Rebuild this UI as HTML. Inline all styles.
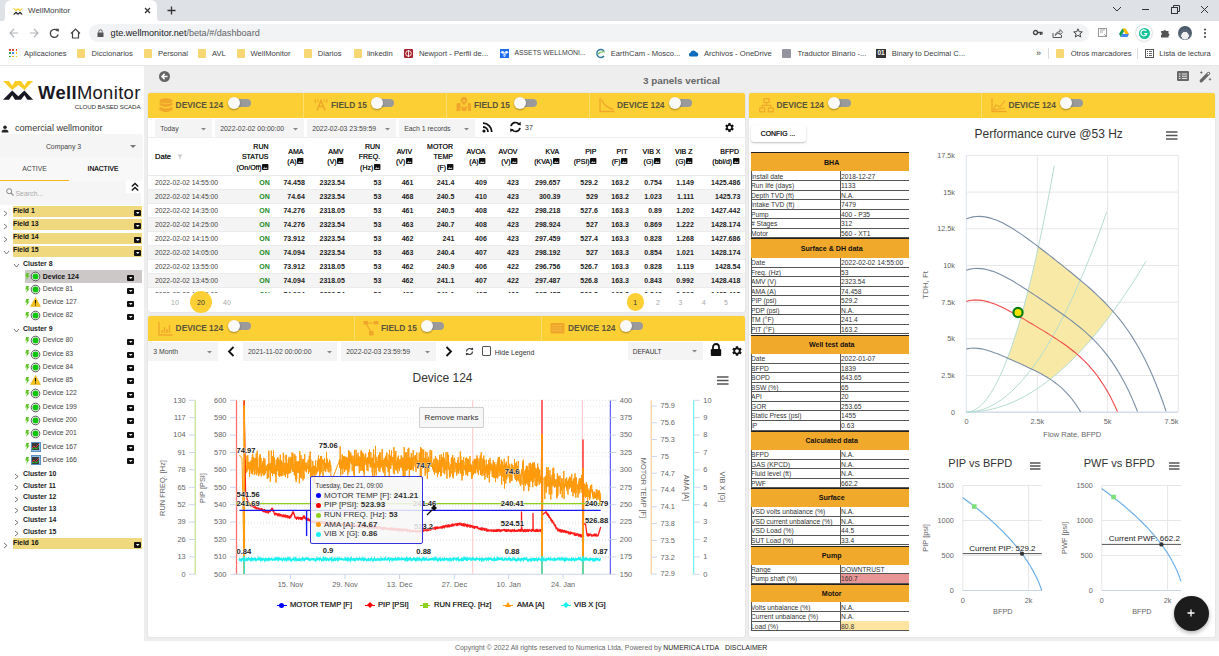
<!DOCTYPE html><html><head><meta charset="utf-8"><style>

*{box-sizing:border-box;margin:0;padding:0}
html,body{width:1219px;height:656px;overflow:hidden;background:#fff;font-family:"Liberation Sans",sans-serif;color:#333}
.a{position:absolute}
.t{position:absolute;white-space:nowrap;line-height:1}
svg{position:absolute;overflow:visible}

</style></head><body>
<div class="a" style="left:0px;top:0px;width:1219px;height:21.8px;background:#dee1e6;"></div>
<svg class="a" style="left:0;top:0" width="170" height="22"><path d="M0 22 Q5 22 5 17 L5 7 Q5 0 12 0 L150 0 Q157 0 157 7 L157 17 Q157 22 162 22 Z" fill="#fff"/></svg>
<svg class="a" style="left:13px;top:6.5px" width="10" height="9" viewBox="3 5 30.5 19"><path d="M3 5.1 L9 5.1 L12.2 9.8 L15 5.1 L21 5.1 L24.4 9.8 L27.4 5.1 L33.1 5.1 L24.4 14.1 L18.3 9 L12.2 14.1 Z" fill="#fbcd24"/><path d="M12.2 14.5 L18.3 20.3 L24.4 14.5 L33.1 23.7 L27.4 23.7 L24.4 19.2 L21 23.7 L15 23.7 L12.2 19.2 L9 23.7 L3 23.7 Z" fill="#181822"/></svg>
<div class="t" style="left:28.00px;top:6.68px;font-size:8px;color:#3c4043;font-weight:normal;">WellMonitor</div>
<svg class="a" style="left:144px;top:7.3px" width="7" height="7"><path d="M1 1 L6 6 M6 1 L1 6" stroke="#333" stroke-width="1.2"/></svg>
<svg class="a" style="left:167px;top:6.2px" width="9" height="9"><path d="M4.5 0.5 V8.5 M0.5 4.5 H8.5" stroke="#333" stroke-width="1.3"/></svg>
<svg class="a" style="left:1112px;top:5px" width="10" height="8"><path d="M1 2 L5 6 L9 2" stroke="#333" stroke-width="1" fill="none"/></svg>
<div class="a" style="left:1142px;top:9px;width:7px;height:1px;background:#333;"></div>
<svg class="a" style="left:1171px;top:5px" width="9" height="9"><rect x="0.5" y="2.5" width="6" height="6" fill="none" stroke="#333"/><path d="M2.5 2.5 V0.5 H8.5 V6.5 H6.5" fill="none" stroke="#333"/></svg>
<svg class="a" style="left:1200px;top:5px" width="9" height="9"><path d="M1 1 L8 8 M8 1 L1 8" stroke="#333" stroke-width="1"/></svg>
<div class="a" style="left:0px;top:21px;width:1219px;height:43px;background:#fff;"></div>
<svg class="a" style="left:9px;top:28px" width="10" height="10"><path d="M9 5 H1 M5 1 L1 5 L5 9" stroke="#b0b3b7" stroke-width="1.1" fill="none"/></svg>
<svg class="a" style="left:29px;top:28px" width="10" height="10"><path d="M1 5 H9 M5 1 L9 5 L5 9" stroke="#b0b3b7" stroke-width="1.1" fill="none"/></svg>
<svg class="a" style="left:49px;top:28px" width="11" height="11"><path d="M8.6 3 A4 4 0 1 0 9.2 6.5" stroke="#444" stroke-width="1.3" fill="none"/><path d="M6.5 0.8 L9.8 0.8 L9.8 4.1 Z" fill="#444"/></svg>
<svg class="a" style="left:70px;top:28px" width="11" height="11"><path d="M1 5.5 L5.5 1 L10 5.5 M2.5 4.5 V10 H8.5 V4.5" stroke="#444" stroke-width="1.2" fill="none"/></svg>
<div class="a" style="left:89px;top:24px;width:1000px;height:17.5px;background:#f1f3f4;border-radius:9px"></div>
<svg class="a" style="left:97px;top:29px" width="7" height="8"><path d="M1.8 3.5 V2.5 A1.7 1.7 0 0 1 5.2 2.5 V3.5" stroke="#555" stroke-width="1" fill="none"/><rect x="0.5" y="3.5" width="6" height="4.5" fill="#555"/></svg>
<div class="t" style="left:110.60px;top:28.54px;font-size:9.1px;color:#333;font-weight:normal;"><span style="color:#202124">gte.wellmonitor.net</span><span style="color:#5f6368">/beta/#/dashboard</span></div>
<svg class="a" style="left:1033px;top:29px" width="10" height="7"><circle cx="2.5" cy="3.5" r="2" fill="none" stroke="#444" stroke-width="1.3"/><path d="M4.5 3.5 H9.5 M7.5 3.5 V6 M9 3.5 V5.5" stroke="#444" stroke-width="1.3"/></svg>
<svg class="a" style="left:1052px;top:28px" width="11" height="10"><path d="M1 5 V9.5 H9.5 V7" stroke="#555" stroke-width="1" fill="none"/><path d="M3 7.5 Q4 3.5 8 3.5 V1.5 L10.5 4.2 L8 7 V5.2 Q5 5 3 7.5Z" fill="none" stroke="#555" stroke-width="0.9"/></svg>
<svg class="a" style="left:1073px;top:28px" width="10" height="10"><path d="M5 0.8 L6.2 3.7 L9.3 3.9 L6.9 5.9 L7.7 9 L5 7.3 L2.3 9 L3.1 5.9 L0.7 3.9 L3.8 3.7 Z" fill="none" stroke="#444" stroke-width="1"/></svg>
<svg class="a" style="left:1098px;top:28px" width="10" height="10"><rect x="0.5" y="0.5" width="8" height="8" fill="none" stroke="#999"/><path d="M2 2 H7 M2 4 H5 M6 6 L9 9 M9 6 L6 9" stroke="#999" stroke-width="0.9"/></svg>
<svg class="a" style="left:1119px;top:28px" width="10" height="9"><path d="M3.3 0.5 L6.7 0.5 L10 6 L8.3 9 Z" fill="#fbbc04"/><path d="M3.3 0.5 L0 6 L1.7 9 L5 3.3Z" fill="#0f9d58"/><path d="M1.7 9 L8.3 9 L10 6 L3.4 6Z" fill="#4285f4"/></svg>
<div class="a" style="left:1136px;top:25px;width:16px;height:16px;border-radius:50%;background:#fff;box-shadow:0 0 2px #aaa"></div>
<div class="a" style="left:1138.5px;top:27.5px;width:11px;height:11px;border-radius:50%;background:#15c39a"></div>
<svg class="a" style="left:1140px;top:29px" width="8" height="8"><path d="M6.3 2 A3 3 0 1 0 6.8 4.5 H4.2" stroke="#fff" stroke-width="1.2" fill="none"/></svg>
<svg class="a" style="left:1160px;top:28px" width="10" height="10"><path d="M1 3 H3.5 A1.3 1.3 0 0 1 6 3 H8.5 V5.5 A1.3 1.3 0 0 1 8.5 8 V9.5 H1 V7 A1.3 1.3 0 0 0 1 4.5 Z" fill="#555"/></svg>
<div class="a" style="left:1178px;top:26px;width:14px;height:14px;border-radius:50%;background:radial-gradient(circle at 50% 70%,#eee 0 30%,#5b6b7b 32%,#3e4c5a 100%)"></div>
<svg class="a" style="left:1203px;top:28px" width="4" height="11"><circle cx="2" cy="1.5" r="1.1" fill="#555"/><circle cx="2" cy="5.2" r="1.1" fill="#555"/><circle cx="2" cy="8.9" r="1.1" fill="#555"/></svg>
<div class="a" style="left:9.0px;top:49.0px;width:1.9px;height:1.9px;background:#ea4335;"></div>
<div class="a" style="left:12.3px;top:49.0px;width:1.9px;height:1.9px;background:#ea4335;"></div>
<div class="a" style="left:15.6px;top:49.0px;width:1.9px;height:1.9px;background:#ea4335;"></div>
<div class="a" style="left:9.0px;top:52.3px;width:1.9px;height:1.9px;background:#34a853;"></div>
<div class="a" style="left:12.3px;top:52.3px;width:1.9px;height:1.9px;background:#4285f4;"></div>
<div class="a" style="left:15.6px;top:52.3px;width:1.9px;height:1.9px;background:#fbbc04;"></div>
<div class="a" style="left:9.0px;top:55.6px;width:1.9px;height:1.9px;background:#34a853;"></div>
<div class="a" style="left:12.3px;top:55.6px;width:1.9px;height:1.9px;background:#fbbc04;"></div>
<div class="a" style="left:15.6px;top:55.6px;width:1.9px;height:1.9px;background:#fbbc04;"></div>
<div class="t" style="left:24.00px;top:49.58px;font-size:7.6px;color:#3c4043;font-weight:normal;">Aplicaciones</div>
<div class="a" style="left:77px;top:49px;width:8px;height:8.5px;background:#f7d774;border-radius:1px"></div>
<div class="t" style="left:91.50px;top:49.58px;font-size:7.6px;color:#3c4043;font-weight:normal;">Diccionarios</div>
<div class="a" style="left:143.8px;top:49px;width:8px;height:8.5px;background:#f7d774;border-radius:1px"></div>
<div class="t" style="left:158.00px;top:49.58px;font-size:7.6px;color:#3c4043;font-weight:normal;">Personal</div>
<div class="a" style="left:198px;top:49px;width:8px;height:8.5px;background:#f7d774;border-radius:1px"></div>
<div class="t" style="left:212.00px;top:49.58px;font-size:7.6px;color:#3c4043;font-weight:normal;">AVL</div>
<div class="a" style="left:236.6px;top:49px;width:8px;height:8.5px;background:#f7d774;border-radius:1px"></div>
<div class="t" style="left:250.60px;top:49.58px;font-size:7.6px;color:#3c4043;font-weight:normal;">WellMonitor</div>
<div class="a" style="left:304.3px;top:49px;width:8px;height:8.5px;background:#f7d774;border-radius:1px"></div>
<div class="t" style="left:317.80px;top:49.58px;font-size:7.6px;color:#3c4043;font-weight:normal;">Diarios</div>
<div class="a" style="left:353.5px;top:49px;width:8px;height:8.5px;background:#f7d774;border-radius:1px"></div>
<div class="t" style="left:367.00px;top:49.58px;font-size:7.6px;color:#3c4043;font-weight:normal;">linkedin</div>
<div class="a" style="left:403.6px;top:49px;width:9.5px;height:9px;background:#a4262c;border-radius:1px"></div>
<svg class="a" style="left:404px;top:49px" width="9" height="9"><circle cx="4.5" cy="4.5" r="2.8" fill="none" stroke="#fff" stroke-width="0.9"/><path d="M4.5 1 V8" stroke="#fff" stroke-width="0.9"/></svg>
<div class="t" style="left:418.90px;top:49.58px;font-size:7.6px;color:#3c4043;font-weight:normal;">Newport - Perfil de...</div>
<div class="a" style="left:499.6px;top:49px;width:9.5px;height:9px;background:#1a6bf0;"></div>
<svg class="a" style="left:500px;top:49px" width="9" height="9"><path d="M2.5 2 L4.5 3.3 L2.5 4.6 L0.5 3.3Z M6.5 2 L8.5 3.3 L6.5 4.6 L4.5 3.3Z M2.5 4.6 L4.5 5.9 L6.5 4.6 M2.8 6.6 L4.5 7.7 L6.2 6.6" fill="#fff" stroke="#fff" stroke-width="0.3"/></svg>
<div class="t" style="left:514.40px;top:49.94px;font-size:6.85px;color:#3c4043;font-weight:normal;">ASSETS WELLMONI...</div>
<svg class="a" style="left:595px;top:48px" width="11" height="11"><path d="M9 3 A4 4 0 1 0 9 8" stroke="#2a7a9a" stroke-width="1.4" fill="none"/><path d="M3 6 Q6 3 10 4" stroke="#6cb33f" stroke-width="1.1" fill="none"/></svg>
<div class="t" style="left:610.80px;top:49.58px;font-size:7.6px;color:#3c4043;font-weight:normal;">EarthCam - Mosco...</div>
<svg class="a" style="left:688px;top:49px" width="11" height="8"><path d="M2 7.5 A2 2 0 0 1 2.3 3.8 A3.2 3.2 0 0 1 8.2 3.3 A2.2 2.2 0 0 1 9 7.5 Z" fill="#0f6cbd"/></svg>
<div class="t" style="left:703.90px;top:49.58px;font-size:7.6px;color:#3c4043;font-weight:normal;">Archivos - OneDrive</div>
<div class="a" style="left:782px;top:49px;width:9px;height:9px;background:#667;border-radius:1px;opacity:.7"></div>
<div class="t" style="left:797.40px;top:49.58px;font-size:7.6px;color:#3c4043;font-weight:normal;">Traductor Binario -...</div>
<div class="a" style="left:876px;top:49px;width:10px;height:9px;background:#333;"></div>
<div class="t" style="left:881.00px;top:50.41px;font-size:6.5px;color:#fff;font-weight:bold;transform:translateX(-50%);">01</div>
<div class="t" style="left:891.70px;top:49.58px;font-size:7.6px;color:#3c4043;font-weight:normal;">Binary to Decimal C...</div>
<div class="t" style="left:1036.00px;top:48.89px;font-size:9px;color:#444;font-weight:normal;">»</div>
<div class="a" style="left:1048px;top:48px;width:1px;height:11px;background:#dadce0;"></div>
<div class="a" style="left:1056.4px;top:49px;width:8px;height:8.5px;background:#f7d774;border-radius:1px"></div>
<div class="t" style="left:1070.70px;top:49.58px;font-size:7.6px;color:#3c4043;font-weight:normal;">Otros marcadores</div>
<div class="a" style="left:1137px;top:48px;width:1px;height:11px;background:#dadce0;"></div>
<svg class="a" style="left:1145px;top:49px" width="9" height="9"><rect x="0.5" y="0.5" width="8" height="8" fill="none" stroke="#555"/><path d="M2 2.5 H3 M4 2.5 H7 M2 4.5 H3 M4 4.5 H7 M2 6.5 H3 M4 6.5 H7" stroke="#555" stroke-width="0.9"/></svg>
<div class="t" style="left:1159.30px;top:49.58px;font-size:7.6px;color:#3c4043;font-weight:normal;">Lista de lectura</div>
<div class="a" style="left:0px;top:65px;width:1219px;height:591px;background:#fff;"></div>
<div class="a" style="left:144px;top:65px;width:1075px;height:575.5px;background:#eeeeee;"></div>
<div class="a" style="left:0px;top:64.5px;width:1219px;height:1.3px;background:#e6e6e6;"></div>
<svg class="a" style="left:0;top:76px" width="36" height="26"><path d="M3 5.1 L9 5.1 L12.2 9.8 L15 5.1 L21 5.1 L24.4 9.8 L27.4 5.1 L33.1 5.1 L24.4 14.1 L18.3 9 L12.2 14.1 Z" fill="#fbcd24"/><path d="M12.2 14.5 L18.3 20.3 L24.4 14.5 L33.1 23.7 L27.4 23.7 L24.4 19.2 L21 23.7 L15 23.7 L12.2 19.2 L9 23.7 L3 23.7 Z" fill="#181822"/></svg>
<div class="t" style="left:38.00px;top:83.98px;font-size:18.4px;color:#181822;font-weight:normal;letter-spacing:0.35px"><b style="font-weight:bold">Well</b>Monitor</div>
<div class="t" style="left:140.50px;top:104.26px;font-size:6.2px;color:#333;font-weight:normal;transform:translateX(-100%);letter-spacing:-0.1px">CLOUD BASED SCADA</div>
<svg class="a" style="left:1px;top:125px" width="8" height="8"><circle cx="4" cy="2.2" r="1.8" fill="#222"/><path d="M0.5 7.5 Q0.5 4.6 4 4.6 Q7.5 4.6 7.5 7.5 Z" fill="#222"/></svg>
<div class="t" style="left:15.00px;top:123.54px;font-size:9.1px;color:#333;font-weight:normal;">comercial wellmonitor</div>
<div class="a" style="left:0px;top:134px;width:143px;height:24px;background:#f5f5f5;border-radius:3px 3px 0 0"></div>
<div class="t" style="left:63.50px;top:143.92px;font-size:6.9px;color:#444;font-weight:normal;transform:translateX(-50%);">Company 3</div>
<svg class="a" style="left:130px;top:145px" width="6" height="3"><path d="M0 0 H6 L3 3Z" fill="#777"/></svg>
<div class="a" style="left:0px;top:158px;width:143px;height:23px;background:#f8f8f8;"></div>
<div class="t" style="left:34.50px;top:165.67px;font-size:6.8px;color:#444;font-weight:normal;transform:translateX(-50%);">ACTIVE</div>
<div class="t" style="left:103.00px;top:165.72px;font-size:6.7px;color:#222;font-weight:normal;transform:translateX(-50%);text-shadow:0 0 0.3px #333">INACTIVE</div>
<div class="a" style="left:0px;top:179.5px;width:69px;height:1.6px;background:#f6b91a;"></div>
<div class="a" style="left:0px;top:181px;width:141px;height:24px;background:#f5f5f5;"></div>
<svg class="a" style="left:6px;top:188px" width="8" height="8"><circle cx="3.2" cy="3.2" r="2.5" fill="none" stroke="#888" stroke-width="1"/><path d="M5 5 L7.6 7.6" stroke="#888" stroke-width="1.1"/></svg>
<div class="t" style="left:15.50px;top:191.12px;font-size:6.9px;color:#aaa;font-weight:normal;">Search...</div>
<div class="a" style="left:126px;top:181px;width:17px;height:12px;background:#fff;"></div>
<svg class="a" style="left:131px;top:182px" width="8" height="10"><path d="M0.8 4.5 L4 1.5 L7.2 4.5 M0.8 8.5 L4 5.5 L7.2 8.5" stroke="#111" stroke-width="1.4" fill="none"/></svg>
<div class="a" style="left:13px;top:206.0px;width:128.5px;height:11px;background:#f0d87e;"></div>
<div class="t" style="left:13.00px;top:207.62px;font-size:6.9px;color:#111;font-weight:bold;">Field 1</div>
<div class="a" style="left:134px;top:210.0px;width:6.5px;height:6px;background:#111;border-radius:1px"></div>
<svg class="a" style="left:135.5px;top:212.0px" width="4" height="3"><path d="M0 0 H3.5 L1.75 2Z" fill="#fff"/></svg>
<svg class="a" style="left:3px;top:209.5px" width="5" height="7"><path d="M1 1 L4 3.5 L1 6" stroke="#666" stroke-width="0.9" fill="none"/></svg>
<div class="a" style="left:13px;top:219.3px;width:128.5px;height:11px;background:#f0d87e;"></div>
<div class="t" style="left:13.00px;top:220.92px;font-size:6.9px;color:#111;font-weight:bold;">Field 13</div>
<div class="a" style="left:134px;top:223.3px;width:6.5px;height:6px;background:#111;border-radius:1px"></div>
<svg class="a" style="left:135.5px;top:225.3px" width="4" height="3"><path d="M0 0 H3.5 L1.75 2Z" fill="#fff"/></svg>
<svg class="a" style="left:3px;top:222.8px" width="5" height="7"><path d="M1 1 L4 3.5 L1 6" stroke="#666" stroke-width="0.9" fill="none"/></svg>
<div class="a" style="left:13px;top:232.5px;width:128.5px;height:11px;background:#f0d87e;"></div>
<div class="t" style="left:13.00px;top:234.12px;font-size:6.9px;color:#111;font-weight:bold;">Field 14</div>
<div class="a" style="left:134px;top:236.5px;width:6.5px;height:6px;background:#111;border-radius:1px"></div>
<svg class="a" style="left:135.5px;top:238.5px" width="4" height="3"><path d="M0 0 H3.5 L1.75 2Z" fill="#fff"/></svg>
<svg class="a" style="left:3px;top:236px" width="5" height="7"><path d="M1 1 L4 3.5 L1 6" stroke="#666" stroke-width="0.9" fill="none"/></svg>
<div class="a" style="left:13px;top:245.8px;width:128.5px;height:11px;background:#f0d87e;"></div>
<div class="t" style="left:13.00px;top:247.42px;font-size:6.9px;color:#111;font-weight:bold;">Field 15</div>
<div class="a" style="left:134px;top:249.8px;width:6.5px;height:6px;background:#111;border-radius:1px"></div>
<svg class="a" style="left:135.5px;top:251.8px" width="4" height="3"><path d="M0 0 H3.5 L1.75 2Z" fill="#fff"/></svg>
<svg class="a" style="left:2.5px;top:250.3px" width="7" height="5"><path d="M1 1 L3.5 4 L6 1" stroke="#666" stroke-width="0.9" fill="none"/></svg>
<div class="t" style="left:23.00px;top:260.92px;font-size:6.9px;color:#222;font-weight:bold;">Cluster 8</div>
<svg class="a" style="left:13px;top:263.3px" width="7" height="5"><path d="M1 1 L3.5 4 L6 1" stroke="#666" stroke-width="0.9" fill="none"/></svg>
<div class="a" style="left:25px;top:270.0px;width:116.5px;height:13px;background:#cdc8c8;"></div>
<svg class="a" style="left:25px;top:273.0px" width="5" height="7"><path d="M1.2 0 H4.2 L3 2.4 H4.6 L1.2 7 L1.9 3.6 H0.3 Z" fill="#62c42a"/></svg>
<svg class="a" style="left:30px;top:271.2px" width="11" height="11"><circle cx="5.5" cy="5.5" r="4.3" fill="#fff" stroke="#444" stroke-width="0.9"/><circle cx="5.5" cy="5.5" r="3" fill="#0fc40f"/></svg>
<div class="t" style="left:42.70px;top:273.17px;font-size:7.0px;color:#111;font-weight:bold;">Device 124</div>
<div class="a" style="left:127px;top:274.5px;width:6.5px;height:6px;background:#111;border-radius:1px"></div>
<svg class="a" style="left:128.5px;top:276.5px" width="4" height="3"><path d="M0 0 H3.5 L1.75 2Z" fill="#fff"/></svg>
<svg class="a" style="left:25px;top:286.0px" width="5" height="7"><path d="M1.2 0 H4.2 L3 2.4 H4.6 L1.2 7 L1.9 3.6 H0.3 Z" fill="#62c42a"/></svg>
<svg class="a" style="left:30px;top:284.2px" width="11" height="11"><circle cx="5.5" cy="5.5" r="4.3" fill="#fff" stroke="#444" stroke-width="0.9"/><circle cx="5.5" cy="5.5" r="3" fill="#0fc40f"/></svg>
<div class="t" style="left:42.70px;top:286.24px;font-size:6.85px;color:#444;font-weight:normal;">Device 81</div>
<div class="a" style="left:127px;top:287.5px;width:6.5px;height:6px;background:#111;border-radius:1px"></div>
<svg class="a" style="left:128.5px;top:289.5px" width="4" height="3"><path d="M0 0 H3.5 L1.75 2Z" fill="#fff"/></svg>
<svg class="a" style="left:25px;top:299.0px" width="5" height="7"><path d="M1.2 0 H4.2 L3 2.4 H4.6 L1.2 7 L1.9 3.6 H0.3 Z" fill="#62c42a"/></svg>
<svg class="a" style="left:30px;top:297.0px" width="11" height="10"><path d="M5.5 0.5 L10.5 9.5 H0.5 Z" fill="#f7c21b" stroke="#e0a800" stroke-width="0.5"/><path d="M5.5 3 V6.5 M5.5 7.5 V8.5" stroke="#111" stroke-width="1.1"/></svg>
<div class="t" style="left:42.70px;top:299.24px;font-size:6.85px;color:#444;font-weight:normal;">Device 127</div>
<div class="a" style="left:127px;top:300.5px;width:6.5px;height:6px;background:#111;border-radius:1px"></div>
<svg class="a" style="left:128.5px;top:302.5px" width="4" height="3"><path d="M0 0 H3.5 L1.75 2Z" fill="#fff"/></svg>
<svg class="a" style="left:25px;top:312.2px" width="5" height="7"><path d="M1.2 0 H4.2 L3 2.4 H4.6 L1.2 7 L1.9 3.6 H0.3 Z" fill="#62c42a"/></svg>
<svg class="a" style="left:30px;top:310.4px" width="11" height="11"><circle cx="5.5" cy="5.5" r="4.3" fill="#fff" stroke="#444" stroke-width="0.9"/><circle cx="5.5" cy="5.5" r="3" fill="#0fc40f"/></svg>
<div class="t" style="left:42.70px;top:312.44px;font-size:6.85px;color:#444;font-weight:normal;">Device 82</div>
<div class="a" style="left:127px;top:313.7px;width:6.5px;height:6px;background:#111;border-radius:1px"></div>
<svg class="a" style="left:128.5px;top:315.7px" width="4" height="3"><path d="M0 0 H3.5 L1.75 2Z" fill="#fff"/></svg>
<div class="t" style="left:23.00px;top:326.02px;font-size:6.9px;color:#222;font-weight:bold;">Cluster 9</div>
<svg class="a" style="left:13px;top:328.4px" width="7" height="5"><path d="M1 1 L3.5 4 L6 1" stroke="#666" stroke-width="0.9" fill="none"/></svg>
<svg class="a" style="left:25px;top:337.0px" width="5" height="7"><path d="M1.2 0 H4.2 L3 2.4 H4.6 L1.2 7 L1.9 3.6 H0.3 Z" fill="#62c42a"/></svg>
<svg class="a" style="left:30px;top:335.2px" width="11" height="11"><circle cx="5.5" cy="5.5" r="4.3" fill="#fff" stroke="#444" stroke-width="0.9"/><circle cx="5.5" cy="5.5" r="3" fill="#0fc40f"/></svg>
<div class="t" style="left:42.70px;top:337.24px;font-size:6.85px;color:#444;font-weight:normal;">Device 80</div>
<div class="a" style="left:127px;top:338.5px;width:6.5px;height:6px;background:#111;border-radius:1px"></div>
<svg class="a" style="left:128.5px;top:340.5px" width="4" height="3"><path d="M0 0 H3.5 L1.75 2Z" fill="#fff"/></svg>
<svg class="a" style="left:25px;top:350.3px" width="5" height="7"><path d="M1.2 0 H4.2 L3 2.4 H4.6 L1.2 7 L1.9 3.6 H0.3 Z" fill="#62c42a"/></svg>
<svg class="a" style="left:30px;top:348.5px" width="11" height="11"><circle cx="5.5" cy="5.5" r="4.3" fill="#fff" stroke="#444" stroke-width="0.9"/><circle cx="5.5" cy="5.5" r="3" fill="#0fc40f"/></svg>
<div class="t" style="left:42.70px;top:350.54px;font-size:6.85px;color:#444;font-weight:normal;">Device 83</div>
<div class="a" style="left:127px;top:351.8px;width:6.5px;height:6px;background:#111;border-radius:1px"></div>
<svg class="a" style="left:128.5px;top:353.8px" width="4" height="3"><path d="M0 0 H3.5 L1.75 2Z" fill="#fff"/></svg>
<svg class="a" style="left:25px;top:363.6px" width="5" height="7"><path d="M1.2 0 H4.2 L3 2.4 H4.6 L1.2 7 L1.9 3.6 H0.3 Z" fill="#62c42a"/></svg>
<svg class="a" style="left:30px;top:361.8px" width="11" height="11"><circle cx="5.5" cy="5.5" r="4.3" fill="#fff" stroke="#444" stroke-width="0.9"/><circle cx="5.5" cy="5.5" r="3" fill="#0fc40f"/></svg>
<div class="t" style="left:42.70px;top:363.84px;font-size:6.85px;color:#444;font-weight:normal;">Device 84</div>
<div class="a" style="left:127px;top:365.1px;width:6.5px;height:6px;background:#111;border-radius:1px"></div>
<svg class="a" style="left:128.5px;top:367.1px" width="4" height="3"><path d="M0 0 H3.5 L1.75 2Z" fill="#fff"/></svg>
<svg class="a" style="left:25px;top:376.9px" width="5" height="7"><path d="M1.2 0 H4.2 L3 2.4 H4.6 L1.2 7 L1.9 3.6 H0.3 Z" fill="#62c42a"/></svg>
<svg class="a" style="left:30px;top:374.9px" width="11" height="10"><path d="M5.5 0.5 L10.5 9.5 H0.5 Z" fill="#f7c21b" stroke="#e0a800" stroke-width="0.5"/><path d="M5.5 3 V6.5 M5.5 7.5 V8.5" stroke="#111" stroke-width="1.1"/></svg>
<div class="t" style="left:42.70px;top:377.14px;font-size:6.85px;color:#444;font-weight:normal;">Device 85</div>
<div class="a" style="left:127px;top:378.4px;width:6.5px;height:6px;background:#111;border-radius:1px"></div>
<svg class="a" style="left:128.5px;top:380.4px" width="4" height="3"><path d="M0 0 H3.5 L1.75 2Z" fill="#fff"/></svg>
<svg class="a" style="left:25px;top:390.2px" width="5" height="7"><path d="M1.2 0 H4.2 L3 2.4 H4.6 L1.2 7 L1.9 3.6 H0.3 Z" fill="#62c42a"/></svg>
<svg class="a" style="left:30px;top:388.4px" width="11" height="11"><circle cx="5.5" cy="5.5" r="4.3" fill="#fff" stroke="#444" stroke-width="0.9"/><circle cx="5.5" cy="5.5" r="3" fill="#0fc40f"/></svg>
<div class="t" style="left:42.70px;top:390.44px;font-size:6.85px;color:#444;font-weight:normal;">Device 122</div>
<div class="a" style="left:127px;top:391.7px;width:6.5px;height:6px;background:#111;border-radius:1px"></div>
<svg class="a" style="left:128.5px;top:393.7px" width="4" height="3"><path d="M0 0 H3.5 L1.75 2Z" fill="#fff"/></svg>
<svg class="a" style="left:25px;top:403.5px" width="5" height="7"><path d="M1.2 0 H4.2 L3 2.4 H4.6 L1.2 7 L1.9 3.6 H0.3 Z" fill="#62c42a"/></svg>
<svg class="a" style="left:30px;top:401.7px" width="11" height="11"><circle cx="5.5" cy="5.5" r="4.3" fill="#fff" stroke="#444" stroke-width="0.9"/><circle cx="5.5" cy="5.5" r="3" fill="#0fc40f"/></svg>
<div class="t" style="left:42.70px;top:403.74px;font-size:6.85px;color:#444;font-weight:normal;">Device 199</div>
<div class="a" style="left:127px;top:405.0px;width:6.5px;height:6px;background:#111;border-radius:1px"></div>
<svg class="a" style="left:128.5px;top:407.0px" width="4" height="3"><path d="M0 0 H3.5 L1.75 2Z" fill="#fff"/></svg>
<svg class="a" style="left:25px;top:416.8px" width="5" height="7"><path d="M1.2 0 H4.2 L3 2.4 H4.6 L1.2 7 L1.9 3.6 H0.3 Z" fill="#62c42a"/></svg>
<svg class="a" style="left:30px;top:415.0px" width="11" height="11"><circle cx="5.5" cy="5.5" r="4.3" fill="#fff" stroke="#444" stroke-width="0.9"/><circle cx="5.5" cy="5.5" r="3" fill="#0fc40f"/></svg>
<div class="t" style="left:42.70px;top:417.04px;font-size:6.85px;color:#444;font-weight:normal;">Device 200</div>
<div class="a" style="left:127px;top:418.3px;width:6.5px;height:6px;background:#111;border-radius:1px"></div>
<svg class="a" style="left:128.5px;top:420.3px" width="4" height="3"><path d="M0 0 H3.5 L1.75 2Z" fill="#fff"/></svg>
<svg class="a" style="left:25px;top:430.1px" width="5" height="7"><path d="M1.2 0 H4.2 L3 2.4 H4.6 L1.2 7 L1.9 3.6 H0.3 Z" fill="#62c42a"/></svg>
<svg class="a" style="left:30px;top:428.3px" width="11" height="11"><circle cx="5.5" cy="5.5" r="4.3" fill="#fff" stroke="#444" stroke-width="0.9"/><circle cx="5.5" cy="5.5" r="3" fill="#0fc40f"/></svg>
<div class="t" style="left:42.70px;top:430.34px;font-size:6.85px;color:#444;font-weight:normal;">Device 201</div>
<div class="a" style="left:127px;top:431.6px;width:6.5px;height:6px;background:#111;border-radius:1px"></div>
<svg class="a" style="left:128.5px;top:433.6px" width="4" height="3"><path d="M0 0 H3.5 L1.75 2Z" fill="#fff"/></svg>
<svg class="a" style="left:25px;top:443.4px" width="5" height="7"><path d="M1.2 0 H4.2 L3 2.4 H4.6 L1.2 7 L1.9 3.6 H0.3 Z" fill="#62c42a"/></svg>
<div class="a" style="left:30.5px;top:441.9px;width:10px;height:10px;background:#8fbfe6;border:1px solid #5a90c0"></div>
<div class="a" style="left:32px;top:443.4px;width:7px;height:7px;background:#3a3a3a"></div>
<svg class="a" style="left:32px;top:443.4px" width="7" height="7"><path d="M0 5 L2 3 L3.5 4.5 L7 1" stroke="#e33" stroke-width="0.9" fill="none"/><path d="M0 6 L2.5 5 L4 6 L7 4" stroke="#2c2" stroke-width="0.9" fill="none"/></svg>
<div class="t" style="left:42.70px;top:443.64px;font-size:6.85px;color:#444;font-weight:normal;">Device 167</div>
<div class="a" style="left:127px;top:444.9px;width:6.5px;height:6px;background:#111;border-radius:1px"></div>
<svg class="a" style="left:128.5px;top:446.9px" width="4" height="3"><path d="M0 0 H3.5 L1.75 2Z" fill="#fff"/></svg>
<svg class="a" style="left:25px;top:456.7px" width="5" height="7"><path d="M1.2 0 H4.2 L3 2.4 H4.6 L1.2 7 L1.9 3.6 H0.3 Z" fill="#62c42a"/></svg>
<div class="a" style="left:30.5px;top:455.2px;width:10px;height:10px;background:#8fbfe6;border:1px solid #5a90c0"></div>
<div class="a" style="left:32px;top:456.7px;width:7px;height:7px;background:#3a3a3a"></div>
<svg class="a" style="left:32px;top:456.7px" width="7" height="7"><path d="M0 5 L2 3 L3.5 4.5 L7 1" stroke="#e33" stroke-width="0.9" fill="none"/><path d="M0 6 L2.5 5 L4 6 L7 4" stroke="#2c2" stroke-width="0.9" fill="none"/></svg>
<div class="t" style="left:42.70px;top:456.94px;font-size:6.85px;color:#444;font-weight:normal;">Device 166</div>
<div class="a" style="left:127px;top:458.2px;width:6.5px;height:6px;background:#111;border-radius:1px"></div>
<svg class="a" style="left:128.5px;top:460.2px" width="4" height="3"><path d="M0 0 H3.5 L1.75 2Z" fill="#fff"/></svg>
<div class="t" style="left:23.00px;top:471.42px;font-size:6.9px;color:#222;font-weight:bold;">Cluster 10</div>
<svg class="a" style="left:14px;top:472.8px" width="5" height="7"><path d="M1 1 L4 3.5 L1 6" stroke="#666" stroke-width="0.9" fill="none"/></svg>
<div class="t" style="left:23.00px;top:482.87px;font-size:6.9px;color:#222;font-weight:bold;">Cluster 11</div>
<svg class="a" style="left:14px;top:484.25px" width="5" height="7"><path d="M1 1 L4 3.5 L1 6" stroke="#666" stroke-width="0.9" fill="none"/></svg>
<div class="t" style="left:23.00px;top:494.32px;font-size:6.9px;color:#222;font-weight:bold;">Cluster 12</div>
<svg class="a" style="left:14px;top:495.7px" width="5" height="7"><path d="M1 1 L4 3.5 L1 6" stroke="#666" stroke-width="0.9" fill="none"/></svg>
<div class="t" style="left:23.00px;top:505.77px;font-size:6.9px;color:#222;font-weight:bold;">Cluster 13</div>
<svg class="a" style="left:14px;top:507.15px" width="5" height="7"><path d="M1 1 L4 3.5 L1 6" stroke="#666" stroke-width="0.9" fill="none"/></svg>
<div class="t" style="left:23.00px;top:517.22px;font-size:6.9px;color:#222;font-weight:bold;">Cluster 14</div>
<svg class="a" style="left:14px;top:518.6px" width="5" height="7"><path d="M1 1 L4 3.5 L1 6" stroke="#666" stroke-width="0.9" fill="none"/></svg>
<div class="t" style="left:23.00px;top:528.67px;font-size:6.9px;color:#222;font-weight:bold;">Cluster 15</div>
<svg class="a" style="left:14px;top:530.05px" width="5" height="7"><path d="M1 1 L4 3.5 L1 6" stroke="#666" stroke-width="0.9" fill="none"/></svg>
<div class="a" style="left:13px;top:538px;width:128.5px;height:11px;background:#f0d87e;"></div>
<div class="t" style="left:13.00px;top:539.62px;font-size:6.9px;color:#111;font-weight:bold;">Field 16</div>
<div class="a" style="left:134px;top:542px;width:6.5px;height:6px;background:#111;border-radius:1px"></div>
<svg class="a" style="left:135.5px;top:544px" width="4" height="3"><path d="M0 0 H3.5 L1.75 2Z" fill="#fff"/></svg>
<svg class="a" style="left:3px;top:542px" width="5" height="7"><path d="M1 1 L4 3.5 L1 6" stroke="#666" stroke-width="0.9" fill="none"/></svg>
<div class="a" style="left:158.5px;top:70.5px;width:11px;height:11px;border-radius:50%;background:#666"></div>
<svg class="a" style="left:158.5px;top:70.5px" width="11" height="11"><path d="M8.5 5.5 H3 M5.6 2.9 L3 5.5 L5.6 8.1" stroke="#fff" stroke-width="1.5" fill="none"/></svg>
<div class="t" style="left:681.50px;top:75.65px;font-size:9.9px;color:#666;font-weight:bold;transform:translateX(-50%);">3 panels vertical</div>
<svg class="a" style="left:1177px;top:71px" width="12" height="10"><rect x="0" y="0" width="12" height="10" rx="1.3" fill="#666"/><path d="M1.8 3 H3.6 M4.8 3 H10.2 M1.8 5.2 H3.6 M4.8 5.2 H10.2 M1.8 7.4 H3.6 M4.8 7.4 H10.2" stroke="#eee" stroke-width="1"/></svg>
<svg class="a" style="left:1199px;top:70px" width="13" height="13"><path d="M2.2 10.8 L9.6 3.4" stroke="#666" stroke-width="3.2" stroke-linecap="round"/><path d="M8.6 4.4 L10 3" stroke="#fff" stroke-width="1.1"/><path d="M2.3 0.8 L2.8 2 L4 2.5 L2.8 3 L2.3 4.2 L1.8 3 L0.6 2.5 L1.8 2Z M11 7.6 L11.5 8.8 L12.7 9.3 L11.5 9.8 L11 11 L10.5 9.8 L9.3 9.3 L10.5 8.8Z" fill="#666"/></svg>
<div class="a" style="left:148px;top:93px;width:597px;height:219px;background:#fff;box-shadow:0 0 1.5px rgba(0,0,40,.15);border-radius:2px"></div>
<div class="a" style="left:148px;top:93px;width:597px;height:25px;background:#fcd035;border-radius:2px 2px 0 0"></div>
<div class="a" style="left:302.8px;top:93px;width:1px;height:25px;background:rgba(255,255,255,.28);"></div>
<div class="a" style="left:445.6px;top:93px;width:1px;height:25px;background:rgba(255,255,255,.28);"></div>
<div class="a" style="left:589px;top:93px;width:1px;height:25px;background:rgba(255,255,255,.28);"></div>
<svg class="a" style="left:159px;top:98px" width="14" height="15"><ellipse cx="7" cy="2.8" rx="6.5" ry="2.6" fill="#f0a62b"/><path d="M0.5 4.3 Q7 8.2 13.5 4.3 V7 Q7 10.9 0.5 7Z" fill="#f0a62b"/><path d="M0.5 8.6 Q7 12.5 13.5 8.6 V12 Q7 16 0.5 12Z" fill="#f0a62b"/></svg>
<div class="t" style="left:175.60px;top:101.28px;font-size:8.4px;color:#5a5439;font-weight:bold;letter-spacing:0px">DEVICE 124</div>
<div class="a" style="left:233.5px;top:98.7px;width:17px;height:8.6px;border-radius:4.3px;background:#9a9a9a"></div>
<div class="a" style="left:227.5px;top:97px;width:12px;height:12px;border-radius:50%;background:#fafafa;box-shadow:0 1px 2px rgba(0,0,0,.35)"></div>
<svg class="a" style="left:313px;top:97px" width="16" height="16"><path d="M4 13.5 L8 3.5 L12 13.5 M5.6 9.5 H10.4" stroke="#f0a62b" stroke-width="1.5" fill="none"/><path d="M2.5 2 Q1.3 4 2.5 6 M13.5 2 Q14.7 4 13.5 6 M5 2.6 Q4.4 3.6 5 4.6 M11 2.6 Q11.6 3.6 11 4.6" stroke="#f0a62b" stroke-width="1.1" fill="none"/></svg>
<div class="t" style="left:331.00px;top:101.28px;font-size:8.4px;color:#5a5439;font-weight:bold;letter-spacing:0px">FIELD 15</div>
<div class="a" style="left:377px;top:98.7px;width:17px;height:8.6px;border-radius:4.3px;background:#9a9a9a"></div>
<div class="a" style="left:371px;top:97px;width:12px;height:12px;border-radius:50%;background:#fafafa;box-shadow:0 1px 2px rgba(0,0,0,.35)"></div>
<svg class="a" style="left:456px;top:94px" width="16" height="20"><path d="M0.5 9.5 L4.6 8.7 V16.6 L0.5 17.4Z M11.8 8.7 L15 9.4 V17.4 L11.8 16.6Z M5.6 11.3 L8 13.5 L10.6 11.3 V16.6 L8 17.3 L5.6 16.6Z" fill="#f0a62b"/><path d="M8 11.6 L5.4 8.2 A3.3 3.3 0 1 1 10.6 8.2Z" fill="#f0a62b"/><circle cx="8" cy="7" r="1.1" fill="#fcd035"/></svg>
<div class="t" style="left:474.00px;top:101.28px;font-size:8.4px;color:#5a5439;font-weight:bold;letter-spacing:0px">FIELD 15</div>
<div class="a" style="left:519.5px;top:98.7px;width:17px;height:8.6px;border-radius:4.3px;background:#9a9a9a"></div>
<div class="a" style="left:513.5px;top:97px;width:12px;height:12px;border-radius:50%;background:#fafafa;box-shadow:0 1px 2px rgba(0,0,0,.35)"></div>
<svg class="a" style="left:599px;top:97px" width="16" height="16"><path d="M1 1 V14.5 H15.5" stroke="#f0a62b" stroke-width="1.3" fill="none"/><path d="M2.5 2.5 Q5 10 14.5 12.5" stroke="#f0a62b" stroke-width="1.3" fill="none"/></svg>
<div class="t" style="left:617.00px;top:101.28px;font-size:8.4px;color:#5a5439;font-weight:bold;letter-spacing:0px">DEVICE 124</div>
<div class="a" style="left:674.5px;top:98.7px;width:17px;height:8.6px;border-radius:4.3px;background:#9a9a9a"></div>
<div class="a" style="left:668.5px;top:97px;width:12px;height:12px;border-radius:50%;background:#fafafa;box-shadow:0 1px 2px rgba(0,0,0,.35)"></div>
<div class="a" style="left:155px;top:119px;width:57px;height:18.5px;background:#f4f4f4;"></div>
<div class="t" style="left:160.20px;top:125.67px;font-size:6.9px;color:#444;font-weight:normal;">Today</div>
<svg class="a" style="left:201px;top:127.55px" width="5" height="3"><path d="M0 0 H5 L2.5 2.5Z" fill="#888"/></svg>
<div class="a" style="left:215px;top:119px;width:89px;height:18.5px;background:#f4f4f4;"></div>
<div class="t" style="left:220.20px;top:125.67px;font-size:6.9px;color:#444;font-weight:normal;">2022-02-02 00:00:00</div>
<svg class="a" style="left:293px;top:127.55px" width="5" height="3"><path d="M0 0 H5 L2.5 2.5Z" fill="#888"/></svg>
<div class="a" style="left:307px;top:119px;width:89px;height:18.5px;background:#f4f4f4;"></div>
<div class="t" style="left:312.20px;top:125.67px;font-size:6.9px;color:#444;font-weight:normal;">2022-02-03 23:59:59</div>
<svg class="a" style="left:385px;top:127.55px" width="5" height="3"><path d="M0 0 H5 L2.5 2.5Z" fill="#888"/></svg>
<div class="a" style="left:399px;top:119px;width:76px;height:18.5px;background:#f4f4f4;"></div>
<div class="t" style="left:404.20px;top:125.67px;font-size:6.9px;color:#444;font-weight:normal;">Each 1 records</div>
<svg class="a" style="left:464px;top:127.55px" width="5" height="3"><path d="M0 0 H5 L2.5 2.5Z" fill="#888"/></svg>
<svg class="a" style="left:482px;top:122px" width="11" height="11"><circle cx="2" cy="9" r="1.6" fill="#111"/><path d="M1 5 A5 5 0 0 1 6 10 M1 1.2 A8.8 8.8 0 0 1 9.8 10" stroke="#111" stroke-width="1.8" fill="none"/></svg>
<svg class="a" style="left:509px;top:121px" width="13" height="12"><path d="M2 5.2 A4.5 4.5 0 0 1 10.2 3.6 M11 6.8 A4.5 4.5 0 0 1 2.8 8.4" stroke="#111" stroke-width="1.7" fill="none"/><path d="M8.3 3.6 L11.8 4.6 L11.6 0.8Z M4.7 8.4 L1.2 7.4 L1.4 11.2Z" fill="#111"/></svg>
<div class="t" style="left:525.00px;top:124.17px;font-size:7px;color:#333;font-weight:normal;">37</div>
<svg class="a" style="left:724px;top:121.5px" width="11" height="11" viewBox="0 0 24 24"><path fill="#111" d="M19.14 12.94c.04-.3.06-.61.06-.94 0-.32-.02-.64-.07-.94l2.03-1.58a.49.49 0 0 0 .12-.61l-1.92-3.32a.488.488 0 0 0-.59-.22l-2.39.96c-.5-.38-1.03-.7-1.62-.94l-.36-2.54a.484.484 0 0 0-.48-.41h-3.84c-.24 0-.43.17-.47.41l-.36 2.54c-.59.24-1.13.57-1.62.94l-2.39-.96c-.22-.08-.47 0-.59.22L2.74 8.87c-.12.21-.08.47.12.61l2.03 1.58c-.05.3-.09.63-.09.94s.02.64.07.94l-2.03 1.58a.49.49 0 0 0-.12.61l1.92 3.32c.12.22.37.29.59.22l2.39-.96c.5.38 1.03.7 1.62.94l.36 2.54c.05.24.24.41.48.41h3.84c.24 0 .44-.17.47-.41l.36-2.54c.59-.24 1.13-.56 1.62-.94l2.39.96c.22.08.47 0 .59-.22l1.92-3.32c.12-.22.07-.47-.12-.61l-2.01-1.58zM12 15.6c-1.98 0-3.6-1.62-3.6-3.6s1.62-3.6 3.6-3.6 3.6 1.62 3.6 3.6-1.62 3.6-3.6 3.6z"/></svg>
<div class="a" style="left:148px;top:137px;width:597px;height:1px;background:#eee;"></div>
<div class="t" style="left:155.00px;top:153.28px;font-size:7.6px;color:#222;font-weight:normal;text-shadow:0 0 0.4px #222">Date</div>
<svg class="a" style="left:177px;top:153.5px" width="6" height="6"><path d="M0.3 0.5 H5.7 L3.6 3 V5.5 L2.4 4.8 V3Z" fill="#ccc"/></svg>
<div class="t" style="left:268.50px;top:143.17px;font-size:7.0px;color:#222;font-weight:normal;transform:translateX(-100%);text-shadow:0 0 0.3px #222">RUN</div>
<div class="t" style="left:268.50px;top:153.37px;font-size:7.0px;color:#222;font-weight:normal;transform:translateX(-100%);text-shadow:0 0 0.3px #222">STATUS</div>
<div class="t" style="left:261.70px;top:163.57px;font-size:7.0px;color:#222;font-weight:normal;transform:translateX(-100%);text-shadow:0 0 0.3px #222">(On/Off)</div>
<svg class="a" style="left:262.4px;top:163.6px" width="6.4" height="6"><rect x="0" y="0" width="6.4" height="6" rx="0.8" fill="#111"/><path d="M1 4.8 L2.4 3.2 L3.4 4.2 L4.4 3.4 L5.6 4.8Z" fill="#fff"/></svg>
<div class="t" style="left:303.50px;top:148.37px;font-size:7.0px;color:#222;font-weight:normal;transform:translateX(-100%);text-shadow:0 0 0.3px #222">AMA</div>
<div class="t" style="left:296.70px;top:158.37px;font-size:7.0px;color:#222;font-weight:normal;transform:translateX(-100%);text-shadow:0 0 0.3px #222">(A)</div>
<svg class="a" style="left:297.4px;top:158.4px" width="6.4" height="6"><rect x="0" y="0" width="6.4" height="6" rx="0.8" fill="#111"/><path d="M1 4.8 L2.4 3.2 L3.4 4.2 L4.4 3.4 L5.6 4.8Z" fill="#fff"/></svg>
<div class="t" style="left:343.50px;top:148.37px;font-size:7.0px;color:#222;font-weight:normal;transform:translateX(-100%);text-shadow:0 0 0.3px #222">AMV</div>
<div class="t" style="left:336.70px;top:158.37px;font-size:7.0px;color:#222;font-weight:normal;transform:translateX(-100%);text-shadow:0 0 0.3px #222">(V)</div>
<svg class="a" style="left:337.4px;top:158.4px" width="6.4" height="6"><rect x="0" y="0" width="6.4" height="6" rx="0.8" fill="#111"/><path d="M1 4.8 L2.4 3.2 L3.4 4.2 L4.4 3.4 L5.6 4.8Z" fill="#fff"/></svg>
<div class="t" style="left:380.10px;top:143.17px;font-size:7.0px;color:#222;font-weight:normal;transform:translateX(-100%);text-shadow:0 0 0.3px #222">RUN</div>
<div class="t" style="left:380.10px;top:153.37px;font-size:7.0px;color:#222;font-weight:normal;transform:translateX(-100%);text-shadow:0 0 0.3px #222">FREQ.</div>
<div class="t" style="left:373.30px;top:163.57px;font-size:7.0px;color:#222;font-weight:normal;transform:translateX(-100%);text-shadow:0 0 0.3px #222">(Hz)</div>
<svg class="a" style="left:374.0px;top:163.6px" width="6.4" height="6"><rect x="0" y="0" width="6.4" height="6" rx="0.8" fill="#111"/><path d="M1 4.8 L2.4 3.2 L3.4 4.2 L4.4 3.4 L5.6 4.8Z" fill="#fff"/></svg>
<div class="t" style="left:412.10px;top:148.37px;font-size:7.0px;color:#222;font-weight:normal;transform:translateX(-100%);text-shadow:0 0 0.3px #222">AVIV</div>
<div class="t" style="left:405.30px;top:158.37px;font-size:7.0px;color:#222;font-weight:normal;transform:translateX(-100%);text-shadow:0 0 0.3px #222">(V)</div>
<svg class="a" style="left:406.0px;top:158.4px" width="6.4" height="6"><rect x="0" y="0" width="6.4" height="6" rx="0.8" fill="#111"/><path d="M1 4.8 L2.4 3.2 L3.4 4.2 L4.4 3.4 L5.6 4.8Z" fill="#fff"/></svg>
<div class="t" style="left:453.00px;top:143.17px;font-size:7.0px;color:#222;font-weight:normal;transform:translateX(-100%);text-shadow:0 0 0.3px #222">MOTOR</div>
<div class="t" style="left:453.00px;top:153.37px;font-size:7.0px;color:#222;font-weight:normal;transform:translateX(-100%);text-shadow:0 0 0.3px #222">TEMP</div>
<div class="t" style="left:446.20px;top:163.57px;font-size:7.0px;color:#222;font-weight:normal;transform:translateX(-100%);text-shadow:0 0 0.3px #222">(F)</div>
<svg class="a" style="left:446.9px;top:163.6px" width="6.4" height="6"><rect x="0" y="0" width="6.4" height="6" rx="0.8" fill="#111"/><path d="M1 4.8 L2.4 3.2 L3.4 4.2 L4.4 3.4 L5.6 4.8Z" fill="#fff"/></svg>
<div class="t" style="left:485.50px;top:148.37px;font-size:7.0px;color:#222;font-weight:normal;transform:translateX(-100%);text-shadow:0 0 0.3px #222">AVOA</div>
<div class="t" style="left:478.70px;top:158.37px;font-size:7.0px;color:#222;font-weight:normal;transform:translateX(-100%);text-shadow:0 0 0.3px #222">(A)</div>
<svg class="a" style="left:479.4px;top:158.4px" width="6.4" height="6"><rect x="0" y="0" width="6.4" height="6" rx="0.8" fill="#111"/><path d="M1 4.8 L2.4 3.2 L3.4 4.2 L4.4 3.4 L5.6 4.8Z" fill="#fff"/></svg>
<div class="t" style="left:517.50px;top:148.37px;font-size:7.0px;color:#222;font-weight:normal;transform:translateX(-100%);text-shadow:0 0 0.3px #222">AVOV</div>
<div class="t" style="left:510.70px;top:158.37px;font-size:7.0px;color:#222;font-weight:normal;transform:translateX(-100%);text-shadow:0 0 0.3px #222">(V)</div>
<svg class="a" style="left:511.4px;top:158.4px" width="6.4" height="6"><rect x="0" y="0" width="6.4" height="6" rx="0.8" fill="#111"/><path d="M1 4.8 L2.4 3.2 L3.4 4.2 L4.4 3.4 L5.6 4.8Z" fill="#fff"/></svg>
<div class="t" style="left:559.10px;top:148.37px;font-size:7.0px;color:#222;font-weight:normal;transform:translateX(-100%);text-shadow:0 0 0.3px #222">KVA</div>
<div class="t" style="left:552.30px;top:158.37px;font-size:7.0px;color:#222;font-weight:normal;transform:translateX(-100%);text-shadow:0 0 0.3px #222">(KVA)</div>
<svg class="a" style="left:553.0px;top:158.4px" width="6.4" height="6"><rect x="0" y="0" width="6.4" height="6" rx="0.8" fill="#111"/><path d="M1 4.8 L2.4 3.2 L3.4 4.2 L4.4 3.4 L5.6 4.8Z" fill="#fff"/></svg>
<div class="t" style="left:596.50px;top:148.37px;font-size:7.0px;color:#222;font-weight:normal;transform:translateX(-100%);text-shadow:0 0 0.3px #222">PIP</div>
<div class="t" style="left:589.70px;top:158.37px;font-size:7.0px;color:#222;font-weight:normal;transform:translateX(-100%);text-shadow:0 0 0.3px #222">(PSI)</div>
<svg class="a" style="left:590.4px;top:158.4px" width="6.4" height="6"><rect x="0" y="0" width="6.4" height="6" rx="0.8" fill="#111"/><path d="M1 4.8 L2.4 3.2 L3.4 4.2 L4.4 3.4 L5.6 4.8Z" fill="#fff"/></svg>
<div class="t" style="left:627.50px;top:148.37px;font-size:7.0px;color:#222;font-weight:normal;transform:translateX(-100%);text-shadow:0 0 0.3px #222">PIT</div>
<div class="t" style="left:620.70px;top:158.37px;font-size:7.0px;color:#222;font-weight:normal;transform:translateX(-100%);text-shadow:0 0 0.3px #222">(F)</div>
<svg class="a" style="left:621.4px;top:158.4px" width="6.4" height="6"><rect x="0" y="0" width="6.4" height="6" rx="0.8" fill="#111"/><path d="M1 4.8 L2.4 3.2 L3.4 4.2 L4.4 3.4 L5.6 4.8Z" fill="#fff"/></svg>
<div class="t" style="left:660.50px;top:148.37px;font-size:7.0px;color:#222;font-weight:normal;transform:translateX(-100%);text-shadow:0 0 0.3px #222">VIB X</div>
<div class="t" style="left:653.70px;top:158.37px;font-size:7.0px;color:#222;font-weight:normal;transform:translateX(-100%);text-shadow:0 0 0.3px #222">(G)</div>
<svg class="a" style="left:654.4px;top:158.4px" width="6.4" height="6"><rect x="0" y="0" width="6.4" height="6" rx="0.8" fill="#111"/><path d="M1 4.8 L2.4 3.2 L3.4 4.2 L4.4 3.4 L5.6 4.8Z" fill="#fff"/></svg>
<div class="t" style="left:692.50px;top:148.37px;font-size:7.0px;color:#222;font-weight:normal;transform:translateX(-100%);text-shadow:0 0 0.3px #222">VIB Z</div>
<div class="t" style="left:685.70px;top:158.37px;font-size:7.0px;color:#222;font-weight:normal;transform:translateX(-100%);text-shadow:0 0 0.3px #222">(G)</div>
<svg class="a" style="left:686.4px;top:158.4px" width="6.4" height="6"><rect x="0" y="0" width="6.4" height="6" rx="0.8" fill="#111"/><path d="M1 4.8 L2.4 3.2 L3.4 4.2 L4.4 3.4 L5.6 4.8Z" fill="#fff"/></svg>
<div class="t" style="left:739.00px;top:148.37px;font-size:7.0px;color:#222;font-weight:normal;transform:translateX(-100%);text-shadow:0 0 0.3px #222">BFPD</div>
<div class="t" style="left:732.20px;top:158.37px;font-size:7.0px;color:#222;font-weight:normal;transform:translateX(-100%);text-shadow:0 0 0.3px #222">(bbl/d)</div>
<svg class="a" style="left:732.9px;top:158.4px" width="6.4" height="6"><rect x="0" y="0" width="6.4" height="6" rx="0.8" fill="#111"/><path d="M1 4.8 L2.4 3.2 L3.4 4.2 L4.4 3.4 L5.6 4.8Z" fill="#fff"/></svg>
<div class="a" style="left:148px;top:174.5px;width:597px;height:1.5px;background:#eaeaea;"></div>
<div class="a" style="left:148px;top:176px;width:597px;height:117px;overflow:hidden">
<div class="a" style="left:0;top:0px;width:597px;height:14px;background:#fff;border-bottom:1px solid #ebebeb"></div>
<div class="t" style="left:7px;top:3.97px;font-size:6.8px;color:#444">2022-02-02 14:55:00</div>
<div class="t" style="left:121.80px;top:3.17px;font-size:7px;color:#1a8a1a;font-weight:bold;transform:translateX(-100%)">ON</div>
<div class="t" style="left:156.80px;top:3.17px;font-size:7px;color:#222;font-weight:bold;transform:translateX(-100%)">74.458</div>
<div class="t" style="left:196.80px;top:3.17px;font-size:7px;color:#222;font-weight:bold;transform:translateX(-100%)">2323.54</div>
<div class="t" style="left:233.40px;top:3.17px;font-size:7px;color:#222;font-weight:bold;transform:translateX(-100%)">53</div>
<div class="t" style="left:265.40px;top:3.17px;font-size:7px;color:#222;font-weight:bold;transform:translateX(-100%)">461</div>
<div class="t" style="left:306.30px;top:3.17px;font-size:7px;color:#222;font-weight:bold;transform:translateX(-100%)">241.4</div>
<div class="t" style="left:338.80px;top:3.17px;font-size:7px;color:#222;font-weight:bold;transform:translateX(-100%)">409</div>
<div class="t" style="left:370.80px;top:3.17px;font-size:7px;color:#222;font-weight:bold;transform:translateX(-100%)">423</div>
<div class="t" style="left:412.40px;top:3.17px;font-size:7px;color:#222;font-weight:bold;transform:translateX(-100%)">299.657</div>
<div class="t" style="left:449.80px;top:3.17px;font-size:7px;color:#222;font-weight:bold;transform:translateX(-100%)">529.2</div>
<div class="t" style="left:480.80px;top:3.17px;font-size:7px;color:#222;font-weight:bold;transform:translateX(-100%)">163.2</div>
<div class="t" style="left:513.80px;top:3.17px;font-size:7px;color:#222;font-weight:bold;transform:translateX(-100%)">0.754</div>
<div class="t" style="left:545.80px;top:3.17px;font-size:7px;color:#222;font-weight:bold;transform:translateX(-100%)">1.149</div>
<div class="t" style="left:592.30px;top:3.17px;font-size:7px;color:#222;font-weight:bold;transform:translateX(-100%)">1425.486</div>
<div class="a" style="left:0;top:14px;width:597px;height:14px;background:#f4f4f4;border-bottom:1px solid #ebebeb"></div>
<div class="t" style="left:7px;top:17.97px;font-size:6.8px;color:#444">2022-02-02 14:45:00</div>
<div class="t" style="left:121.80px;top:17.17px;font-size:7px;color:#1a8a1a;font-weight:bold;transform:translateX(-100%)">ON</div>
<div class="t" style="left:156.80px;top:17.17px;font-size:7px;color:#222;font-weight:bold;transform:translateX(-100%)">74.64</div>
<div class="t" style="left:196.80px;top:17.17px;font-size:7px;color:#222;font-weight:bold;transform:translateX(-100%)">2323.54</div>
<div class="t" style="left:233.40px;top:17.17px;font-size:7px;color:#222;font-weight:bold;transform:translateX(-100%)">53</div>
<div class="t" style="left:265.40px;top:17.17px;font-size:7px;color:#222;font-weight:bold;transform:translateX(-100%)">468</div>
<div class="t" style="left:306.30px;top:17.17px;font-size:7px;color:#222;font-weight:bold;transform:translateX(-100%)">240.5</div>
<div class="t" style="left:338.80px;top:17.17px;font-size:7px;color:#222;font-weight:bold;transform:translateX(-100%)">410</div>
<div class="t" style="left:370.80px;top:17.17px;font-size:7px;color:#222;font-weight:bold;transform:translateX(-100%)">423</div>
<div class="t" style="left:412.40px;top:17.17px;font-size:7px;color:#222;font-weight:bold;transform:translateX(-100%)">300.39</div>
<div class="t" style="left:449.80px;top:17.17px;font-size:7px;color:#222;font-weight:bold;transform:translateX(-100%)">529</div>
<div class="t" style="left:480.80px;top:17.17px;font-size:7px;color:#222;font-weight:bold;transform:translateX(-100%)">163.2</div>
<div class="t" style="left:513.80px;top:17.17px;font-size:7px;color:#222;font-weight:bold;transform:translateX(-100%)">1.023</div>
<div class="t" style="left:545.80px;top:17.17px;font-size:7px;color:#222;font-weight:bold;transform:translateX(-100%)">1.111</div>
<div class="t" style="left:592.30px;top:17.17px;font-size:7px;color:#222;font-weight:bold;transform:translateX(-100%)">1425.73</div>
<div class="a" style="left:0;top:28px;width:597px;height:14px;background:#fff;border-bottom:1px solid #ebebeb"></div>
<div class="t" style="left:7px;top:31.97px;font-size:6.8px;color:#444">2022-02-02 14:35:00</div>
<div class="t" style="left:121.80px;top:31.17px;font-size:7px;color:#1a8a1a;font-weight:bold;transform:translateX(-100%)">ON</div>
<div class="t" style="left:156.80px;top:31.17px;font-size:7px;color:#222;font-weight:bold;transform:translateX(-100%)">74.276</div>
<div class="t" style="left:196.80px;top:31.17px;font-size:7px;color:#222;font-weight:bold;transform:translateX(-100%)">2318.05</div>
<div class="t" style="left:233.40px;top:31.17px;font-size:7px;color:#222;font-weight:bold;transform:translateX(-100%)">53</div>
<div class="t" style="left:265.40px;top:31.17px;font-size:7px;color:#222;font-weight:bold;transform:translateX(-100%)">461</div>
<div class="t" style="left:306.30px;top:31.17px;font-size:7px;color:#222;font-weight:bold;transform:translateX(-100%)">240.5</div>
<div class="t" style="left:338.80px;top:31.17px;font-size:7px;color:#222;font-weight:bold;transform:translateX(-100%)">408</div>
<div class="t" style="left:370.80px;top:31.17px;font-size:7px;color:#222;font-weight:bold;transform:translateX(-100%)">422</div>
<div class="t" style="left:412.40px;top:31.17px;font-size:7px;color:#222;font-weight:bold;transform:translateX(-100%)">298.218</div>
<div class="t" style="left:449.80px;top:31.17px;font-size:7px;color:#222;font-weight:bold;transform:translateX(-100%)">527.6</div>
<div class="t" style="left:480.80px;top:31.17px;font-size:7px;color:#222;font-weight:bold;transform:translateX(-100%)">163.3</div>
<div class="t" style="left:513.80px;top:31.17px;font-size:7px;color:#222;font-weight:bold;transform:translateX(-100%)">0.89</div>
<div class="t" style="left:545.80px;top:31.17px;font-size:7px;color:#222;font-weight:bold;transform:translateX(-100%)">1.202</div>
<div class="t" style="left:592.30px;top:31.17px;font-size:7px;color:#222;font-weight:bold;transform:translateX(-100%)">1427.442</div>
<div class="a" style="left:0;top:42px;width:597px;height:14px;background:#f4f4f4;border-bottom:1px solid #ebebeb"></div>
<div class="t" style="left:7px;top:45.97px;font-size:6.8px;color:#444">2022-02-02 14:25:00</div>
<div class="t" style="left:121.80px;top:45.17px;font-size:7px;color:#1a8a1a;font-weight:bold;transform:translateX(-100%)">ON</div>
<div class="t" style="left:156.80px;top:45.17px;font-size:7px;color:#222;font-weight:bold;transform:translateX(-100%)">74.276</div>
<div class="t" style="left:196.80px;top:45.17px;font-size:7px;color:#222;font-weight:bold;transform:translateX(-100%)">2323.54</div>
<div class="t" style="left:233.40px;top:45.17px;font-size:7px;color:#222;font-weight:bold;transform:translateX(-100%)">53</div>
<div class="t" style="left:265.40px;top:45.17px;font-size:7px;color:#222;font-weight:bold;transform:translateX(-100%)">463</div>
<div class="t" style="left:306.30px;top:45.17px;font-size:7px;color:#222;font-weight:bold;transform:translateX(-100%)">240.7</div>
<div class="t" style="left:338.80px;top:45.17px;font-size:7px;color:#222;font-weight:bold;transform:translateX(-100%)">408</div>
<div class="t" style="left:370.80px;top:45.17px;font-size:7px;color:#222;font-weight:bold;transform:translateX(-100%)">423</div>
<div class="t" style="left:412.40px;top:45.17px;font-size:7px;color:#222;font-weight:bold;transform:translateX(-100%)">298.924</div>
<div class="t" style="left:449.80px;top:45.17px;font-size:7px;color:#222;font-weight:bold;transform:translateX(-100%)">527</div>
<div class="t" style="left:480.80px;top:45.17px;font-size:7px;color:#222;font-weight:bold;transform:translateX(-100%)">163.3</div>
<div class="t" style="left:513.80px;top:45.17px;font-size:7px;color:#222;font-weight:bold;transform:translateX(-100%)">0.869</div>
<div class="t" style="left:545.80px;top:45.17px;font-size:7px;color:#222;font-weight:bold;transform:translateX(-100%)">1.222</div>
<div class="t" style="left:592.30px;top:45.17px;font-size:7px;color:#222;font-weight:bold;transform:translateX(-100%)">1428.174</div>
<div class="a" style="left:0;top:56px;width:597px;height:14px;background:#fff;border-bottom:1px solid #ebebeb"></div>
<div class="t" style="left:7px;top:59.97px;font-size:6.8px;color:#444">2022-02-02 14:15:00</div>
<div class="t" style="left:121.80px;top:59.17px;font-size:7px;color:#1a8a1a;font-weight:bold;transform:translateX(-100%)">ON</div>
<div class="t" style="left:156.80px;top:59.17px;font-size:7px;color:#222;font-weight:bold;transform:translateX(-100%)">73.912</div>
<div class="t" style="left:196.80px;top:59.17px;font-size:7px;color:#222;font-weight:bold;transform:translateX(-100%)">2323.54</div>
<div class="t" style="left:233.40px;top:59.17px;font-size:7px;color:#222;font-weight:bold;transform:translateX(-100%)">53</div>
<div class="t" style="left:265.40px;top:59.17px;font-size:7px;color:#222;font-weight:bold;transform:translateX(-100%)">462</div>
<div class="t" style="left:306.30px;top:59.17px;font-size:7px;color:#222;font-weight:bold;transform:translateX(-100%)">241</div>
<div class="t" style="left:338.80px;top:59.17px;font-size:7px;color:#222;font-weight:bold;transform:translateX(-100%)">406</div>
<div class="t" style="left:370.80px;top:59.17px;font-size:7px;color:#222;font-weight:bold;transform:translateX(-100%)">423</div>
<div class="t" style="left:412.40px;top:59.17px;font-size:7px;color:#222;font-weight:bold;transform:translateX(-100%)">297.459</div>
<div class="t" style="left:449.80px;top:59.17px;font-size:7px;color:#222;font-weight:bold;transform:translateX(-100%)">527.4</div>
<div class="t" style="left:480.80px;top:59.17px;font-size:7px;color:#222;font-weight:bold;transform:translateX(-100%)">163.3</div>
<div class="t" style="left:513.80px;top:59.17px;font-size:7px;color:#222;font-weight:bold;transform:translateX(-100%)">0.828</div>
<div class="t" style="left:545.80px;top:59.17px;font-size:7px;color:#222;font-weight:bold;transform:translateX(-100%)">1.268</div>
<div class="t" style="left:592.30px;top:59.17px;font-size:7px;color:#222;font-weight:bold;transform:translateX(-100%)">1427.686</div>
<div class="a" style="left:0;top:70px;width:597px;height:14px;background:#f4f4f4;border-bottom:1px solid #ebebeb"></div>
<div class="t" style="left:7px;top:73.97px;font-size:6.8px;color:#444">2022-02-02 14:05:00</div>
<div class="t" style="left:121.80px;top:73.17px;font-size:7px;color:#1a8a1a;font-weight:bold;transform:translateX(-100%)">ON</div>
<div class="t" style="left:156.80px;top:73.17px;font-size:7px;color:#222;font-weight:bold;transform:translateX(-100%)">74.094</div>
<div class="t" style="left:196.80px;top:73.17px;font-size:7px;color:#222;font-weight:bold;transform:translateX(-100%)">2323.54</div>
<div class="t" style="left:233.40px;top:73.17px;font-size:7px;color:#222;font-weight:bold;transform:translateX(-100%)">53</div>
<div class="t" style="left:265.40px;top:73.17px;font-size:7px;color:#222;font-weight:bold;transform:translateX(-100%)">463</div>
<div class="t" style="left:306.30px;top:73.17px;font-size:7px;color:#222;font-weight:bold;transform:translateX(-100%)">240.4</div>
<div class="t" style="left:338.80px;top:73.17px;font-size:7px;color:#222;font-weight:bold;transform:translateX(-100%)">407</div>
<div class="t" style="left:370.80px;top:73.17px;font-size:7px;color:#222;font-weight:bold;transform:translateX(-100%)">423</div>
<div class="t" style="left:412.40px;top:73.17px;font-size:7px;color:#222;font-weight:bold;transform:translateX(-100%)">298.192</div>
<div class="t" style="left:449.80px;top:73.17px;font-size:7px;color:#222;font-weight:bold;transform:translateX(-100%)">527</div>
<div class="t" style="left:480.80px;top:73.17px;font-size:7px;color:#222;font-weight:bold;transform:translateX(-100%)">163.3</div>
<div class="t" style="left:513.80px;top:73.17px;font-size:7px;color:#222;font-weight:bold;transform:translateX(-100%)">0.854</div>
<div class="t" style="left:545.80px;top:73.17px;font-size:7px;color:#222;font-weight:bold;transform:translateX(-100%)">1.021</div>
<div class="t" style="left:592.30px;top:73.17px;font-size:7px;color:#222;font-weight:bold;transform:translateX(-100%)">1428.174</div>
<div class="a" style="left:0;top:84px;width:597px;height:14px;background:#fff;border-bottom:1px solid #ebebeb"></div>
<div class="t" style="left:7px;top:87.97px;font-size:6.8px;color:#444">2022-02-02 13:55:00</div>
<div class="t" style="left:121.80px;top:87.17px;font-size:7px;color:#1a8a1a;font-weight:bold;transform:translateX(-100%)">ON</div>
<div class="t" style="left:156.80px;top:87.17px;font-size:7px;color:#222;font-weight:bold;transform:translateX(-100%)">73.912</div>
<div class="t" style="left:196.80px;top:87.17px;font-size:7px;color:#222;font-weight:bold;transform:translateX(-100%)">2318.05</div>
<div class="t" style="left:233.40px;top:87.17px;font-size:7px;color:#222;font-weight:bold;transform:translateX(-100%)">53</div>
<div class="t" style="left:265.40px;top:87.17px;font-size:7px;color:#222;font-weight:bold;transform:translateX(-100%)">462</div>
<div class="t" style="left:306.30px;top:87.17px;font-size:7px;color:#222;font-weight:bold;transform:translateX(-100%)">240.9</div>
<div class="t" style="left:338.80px;top:87.17px;font-size:7px;color:#222;font-weight:bold;transform:translateX(-100%)">406</div>
<div class="t" style="left:370.80px;top:87.17px;font-size:7px;color:#222;font-weight:bold;transform:translateX(-100%)">422</div>
<div class="t" style="left:412.40px;top:87.17px;font-size:7px;color:#222;font-weight:bold;transform:translateX(-100%)">296.756</div>
<div class="t" style="left:449.80px;top:87.17px;font-size:7px;color:#222;font-weight:bold;transform:translateX(-100%)">526.7</div>
<div class="t" style="left:480.80px;top:87.17px;font-size:7px;color:#222;font-weight:bold;transform:translateX(-100%)">163.3</div>
<div class="t" style="left:513.80px;top:87.17px;font-size:7px;color:#222;font-weight:bold;transform:translateX(-100%)">0.828</div>
<div class="t" style="left:545.80px;top:87.17px;font-size:7px;color:#222;font-weight:bold;transform:translateX(-100%)">1.119</div>
<div class="t" style="left:592.30px;top:87.17px;font-size:7px;color:#222;font-weight:bold;transform:translateX(-100%)">1428.54</div>
<div class="a" style="left:0;top:98px;width:597px;height:14px;background:#f4f4f4;border-bottom:1px solid #ebebeb"></div>
<div class="t" style="left:7px;top:101.97px;font-size:6.8px;color:#444">2022-02-02 13:45:00</div>
<div class="t" style="left:121.80px;top:101.17px;font-size:7px;color:#1a8a1a;font-weight:bold;transform:translateX(-100%)">ON</div>
<div class="t" style="left:156.80px;top:101.17px;font-size:7px;color:#222;font-weight:bold;transform:translateX(-100%)">74.094</div>
<div class="t" style="left:196.80px;top:101.17px;font-size:7px;color:#222;font-weight:bold;transform:translateX(-100%)">2318.05</div>
<div class="t" style="left:233.40px;top:101.17px;font-size:7px;color:#222;font-weight:bold;transform:translateX(-100%)">53</div>
<div class="t" style="left:265.40px;top:101.17px;font-size:7px;color:#222;font-weight:bold;transform:translateX(-100%)">462</div>
<div class="t" style="left:306.30px;top:101.17px;font-size:7px;color:#222;font-weight:bold;transform:translateX(-100%)">241.1</div>
<div class="t" style="left:338.80px;top:101.17px;font-size:7px;color:#222;font-weight:bold;transform:translateX(-100%)">407</div>
<div class="t" style="left:370.80px;top:101.17px;font-size:7px;color:#222;font-weight:bold;transform:translateX(-100%)">422</div>
<div class="t" style="left:412.40px;top:101.17px;font-size:7px;color:#222;font-weight:bold;transform:translateX(-100%)">297.487</div>
<div class="t" style="left:449.80px;top:101.17px;font-size:7px;color:#222;font-weight:bold;transform:translateX(-100%)">526.8</div>
<div class="t" style="left:480.80px;top:101.17px;font-size:7px;color:#222;font-weight:bold;transform:translateX(-100%)">163.3</div>
<div class="t" style="left:513.80px;top:101.17px;font-size:7px;color:#222;font-weight:bold;transform:translateX(-100%)">0.843</div>
<div class="t" style="left:545.80px;top:101.17px;font-size:7px;color:#222;font-weight:bold;transform:translateX(-100%)">0.992</div>
<div class="t" style="left:592.30px;top:101.17px;font-size:7px;color:#222;font-weight:bold;transform:translateX(-100%)">1428.418</div>
<div class="a" style="left:0;top:112px;width:597px;height:14px;background:#fff;border-bottom:1px solid #ebebeb"></div>
<div class="t" style="left:7px;top:115.97px;font-size:6.8px;color:#444">2022-02-02 13:35:00</div>
<div class="t" style="left:121.80px;top:115.17px;font-size:7px;color:#1a8a1a;font-weight:bold;transform:translateX(-100%)">ON</div>
<div class="t" style="left:156.80px;top:115.17px;font-size:7px;color:#222;font-weight:bold;transform:translateX(-100%)">74.094</div>
<div class="t" style="left:196.80px;top:115.17px;font-size:7px;color:#222;font-weight:bold;transform:translateX(-100%)">2323.54</div>
<div class="t" style="left:233.40px;top:115.17px;font-size:7px;color:#222;font-weight:bold;transform:translateX(-100%)">53</div>
<div class="t" style="left:265.40px;top:115.17px;font-size:7px;color:#222;font-weight:bold;transform:translateX(-100%)">462</div>
<div class="t" style="left:306.30px;top:115.17px;font-size:7px;color:#222;font-weight:bold;transform:translateX(-100%)">241.1</div>
<div class="t" style="left:338.80px;top:115.17px;font-size:7px;color:#222;font-weight:bold;transform:translateX(-100%)">407</div>
<div class="t" style="left:370.80px;top:115.17px;font-size:7px;color:#222;font-weight:bold;transform:translateX(-100%)">422</div>
<div class="t" style="left:412.40px;top:115.17px;font-size:7px;color:#222;font-weight:bold;transform:translateX(-100%)">297.487</div>
<div class="t" style="left:449.80px;top:115.17px;font-size:7px;color:#222;font-weight:bold;transform:translateX(-100%)">526.8</div>
<div class="t" style="left:480.80px;top:115.17px;font-size:7px;color:#222;font-weight:bold;transform:translateX(-100%)">163.3</div>
<div class="t" style="left:513.80px;top:115.17px;font-size:7px;color:#222;font-weight:bold;transform:translateX(-100%)">0.843</div>
<div class="t" style="left:545.80px;top:115.17px;font-size:7px;color:#222;font-weight:bold;transform:translateX(-100%)">0.992</div>
<div class="t" style="left:592.30px;top:115.17px;font-size:7px;color:#222;font-weight:bold;transform:translateX(-100%)">1428.418</div>
</div>
<div class="t" style="left:175.00px;top:298.57px;font-size:7px;color:#aaa;font-weight:normal;transform:translateX(-50%);">10</div>
<div class="t" style="left:227.00px;top:298.57px;font-size:7px;color:#aaa;font-weight:normal;transform:translateX(-50%);">40</div>
<div class="a" style="left:190px;top:291px;width:22px;height:22px;border-radius:50%;background:#fcd035"></div>
<div class="t" style="left:201.00px;top:298.57px;font-size:7px;color:#333;font-weight:normal;transform:translateX(-50%);">20</div>
<div class="a" style="left:626.5px;top:293px;width:17.5px;height:17.5px;border-radius:50%;background:#fcd035"></div>
<div class="t" style="left:635.30px;top:298.57px;font-size:7px;color:#333;font-weight:normal;transform:translateX(-50%);">1</div>
<div class="t" style="left:658.00px;top:298.57px;font-size:7px;color:#aaa;font-weight:normal;transform:translateX(-50%);">2</div>
<div class="t" style="left:680.50px;top:298.57px;font-size:7px;color:#aaa;font-weight:normal;transform:translateX(-50%);">3</div>
<div class="t" style="left:703.60px;top:298.57px;font-size:7px;color:#aaa;font-weight:normal;transform:translateX(-50%);">4</div>
<div class="t" style="left:726.00px;top:298.57px;font-size:7px;color:#aaa;font-weight:normal;transform:translateX(-50%);">5</div>
<div class="a" style="left:148px;top:316px;width:597px;height:321px;background:#fff;box-shadow:0 0 1.5px rgba(0,0,40,.15);border-radius:2px"></div>
<div class="a" style="left:148px;top:316px;width:597px;height:25px;background:#fcd035;border-radius:2px 2px 0 0"></div>
<div class="a" style="left:353.5px;top:316px;width:1px;height:25px;background:rgba(255,255,255,.28);"></div>
<div class="a" style="left:540.5px;top:316px;width:1px;height:25px;background:rgba(255,255,255,.28);"></div>
<svg class="a" style="left:158px;top:321px" width="15" height="15"><path d="M1 1 V14 H14.5" stroke="#f0a62b" stroke-width="1.3" fill="none"/><path d="M4 12 V9 M6.5 12 V6 M9 12 V8 M11.5 12 V4" stroke="#f0a62b" stroke-width="1.4"/></svg>
<div class="t" style="left:175.60px;top:324.18px;font-size:8.4px;color:#5a5439;font-weight:bold;letter-spacing:0px">DEVICE 124</div>
<div class="a" style="left:233.6px;top:321.7px;width:17px;height:8.6px;border-radius:4.3px;background:#9a9a9a"></div>
<div class="a" style="left:227.6px;top:320px;width:12px;height:12px;border-radius:50%;background:#fafafa;box-shadow:0 1px 2px rgba(0,0,0,.35)"></div>
<svg class="a" style="left:363px;top:320px" width="16" height="16"><rect x="0.5" y="1" width="4.5" height="3.5" fill="#f0a62b"/><rect x="11" y="1" width="4.5" height="3.5" fill="#f0a62b"/><rect x="6" y="11" width="4.5" height="4.5" fill="#f0a62b"/><path d="M4 3 H11.5 M3 4 L8 11.5" stroke="#f0a62b" stroke-width="1.2"/></svg>
<div class="t" style="left:381.00px;top:324.18px;font-size:8.4px;color:#5a5439;font-weight:bold;letter-spacing:0px">FIELD 15</div>
<div class="a" style="left:427px;top:321.7px;width:17px;height:8.6px;border-radius:4.3px;background:#9a9a9a"></div>
<div class="a" style="left:421px;top:320px;width:12px;height:12px;border-radius:50%;background:#fafafa;box-shadow:0 1px 2px rgba(0,0,0,.35)"></div>
<svg class="a" style="left:550px;top:321px" width="15" height="14"><rect x="0.5" y="2" width="14" height="10.5" rx="1" fill="#f0a62b"/><path d="M2.5 4.5 H12.5 M2.5 7 H12.5 M2.5 9.5 H12.5" stroke="#fbd25a" stroke-width="0.8" stroke-dasharray="1 0.9"/></svg>
<div class="t" style="left:568.00px;top:324.18px;font-size:8.4px;color:#5a5439;font-weight:bold;letter-spacing:0px">DEVICE 124</div>
<div class="a" style="left:625.7px;top:321.7px;width:17px;height:8.6px;border-radius:4.3px;background:#9a9a9a"></div>
<div class="a" style="left:619.7px;top:320px;width:12px;height:12px;border-radius:50%;background:#fafafa;box-shadow:0 1px 2px rgba(0,0,0,.35)"></div>
<div class="a" style="left:148px;top:342px;width:70px;height:18.5px;background:#f4f4f4;"></div>
<div class="t" style="left:153.20px;top:348.67px;font-size:6.9px;color:#444;font-weight:normal;">3 Month</div>
<svg class="a" style="left:207px;top:350.55px" width="5" height="3"><path d="M0 0 H5 L2.5 2.5Z" fill="#888"/></svg>
<svg class="a" style="left:227px;top:346px" width="8" height="11"><path d="M6.5 1 L2 5.5 L6.5 10" stroke="#111" stroke-width="1.8" fill="none"/></svg>
<div class="a" style="left:242.8px;top:342px;width:94.7px;height:18.5px;background:#f4f4f4;"></div>
<div class="t" style="left:248.00px;top:348.67px;font-size:6.9px;color:#444;font-weight:normal;">2021-11-02 00:00:00</div>
<svg class="a" style="left:326.5px;top:350.55px" width="5" height="3"><path d="M0 0 H5 L2.5 2.5Z" fill="#888"/></svg>
<div class="a" style="left:341px;top:342px;width:95px;height:18.5px;background:#f4f4f4;"></div>
<div class="t" style="left:346.20px;top:348.67px;font-size:6.9px;color:#444;font-weight:normal;">2022-02-03 23:59:59</div>
<svg class="a" style="left:425px;top:350.55px" width="5" height="3"><path d="M0 0 H5 L2.5 2.5Z" fill="#888"/></svg>
<svg class="a" style="left:444.5px;top:346px" width="8" height="11"><path d="M1.5 1 L6 5.5 L1.5 10" stroke="#111" stroke-width="1.8" fill="none"/></svg>
<svg class="a" style="left:465px;top:346.5px" width="9" height="9"><path d="M1.5 4.5 A3 3 0 0 1 6.8 2.6 M7.5 4.5 A3 3 0 0 1 2.2 6.4" stroke="#333" stroke-width="1.2" fill="none"/><path d="M5.4 2.2 L8.3 3.2 L7.8 0.4Z M3.6 6.8 L0.7 5.8 L1.2 8.6Z" fill="#333"/></svg>
<div class="a" style="left:481.5px;top:345.5px;width:9.8px;height:10px;background:#fff;border:1px solid #555;border-radius:1px"></div>
<div class="t" style="left:494.70px;top:348.57px;font-size:7.0px;color:#333;font-weight:normal;">Hide Legend</div>
<div class="a" style="left:627.5px;top:342px;width:75.5px;height:18px;background:#f4f4f4;"></div>
<div class="t" style="left:632.70px;top:348.62px;font-size:6.5px;color:#333;font-weight:normal;">DEFAULT</div>
<svg class="a" style="left:692.0px;top:350.3px" width="5" height="3"><path d="M0 0 H5 L2.5 2.5Z" fill="#888"/></svg>
<svg class="a" style="left:710px;top:343px" width="12" height="13"><path d="M3 6 V4 A3 3 0 0 1 9 4 V6" stroke="#111" stroke-width="1.8" fill="none"/><rect x="0.8" y="6" width="10.4" height="7" rx="1" fill="#111"/></svg>
<svg class="a" style="left:730.5px;top:345px" width="12" height="12" viewBox="0 0 24 24"><path fill="#111" d="M19.14 12.94c.04-.3.06-.61.06-.94 0-.32-.02-.64-.07-.94l2.03-1.58a.49.49 0 0 0 .12-.61l-1.92-3.32a.488.488 0 0 0-.59-.22l-2.39.96c-.5-.38-1.030-.7-1.62-.94l-.36-2.54a.484.484 0 0 0-.48-.41h-3.84c-.24 0-.43.17-.47.41l-.36 2.54c-.59.24-1.13.57-1.62.94l-2.39-.96c-.22-.08-.47 0-.59.22L2.74 8.87c-.12.21-.08.47.12.61l2.03 1.58c-.05.3-.09.63-.09.94s.02.64.07.94l-2.03 1.58a.49.49 0 0 0-.12.61l1.92 3.32c.12.22.37.29.59.22l2.39-.96c.5.38 1.03.7 1.62.94l.36 2.54c.05.24.24.41.48.41h3.84c.24 0 .44-.17.47-.41l.36-2.54c.59-.24 1.13-.56 1.62-.94l2.39.96c.22.08.47 0 .59-.22l1.92-3.32c.12-.22.07-.47-.12-.61l-2.01-1.58zM12 15.6c-1.98 0-3.6-1.62-3.6-3.6s1.62-3.6 3.6-3.6 3.6 1.62 3.6 3.6-1.62 3.6-3.6 3.6z"/></svg>
<div class="t" style="left:442.50px;top:372.12px;font-size:12px;color:#333;font-weight:normal;transform:translateX(-50%);">Device 124</div>
<svg class="a" style="left:716.5px;top:376px" width="12" height="9"><path d="M0 1 H11.5 M0 4.5 H11.5 M0 8 H11.5" stroke="#555" stroke-width="1.4"/></svg>
<svg class="a" style="left:0;top:0" width="1219" height="656"><path d="M236 400.3 H610.3" stroke="#d8d8d8" stroke-width="0.7" stroke-dasharray="1 2"/><path d="M236 417.7 H610.3" stroke="#d8d8d8" stroke-width="0.7" stroke-dasharray="1 2"/><path d="M236 435.1 H610.3" stroke="#d8d8d8" stroke-width="0.7" stroke-dasharray="1 2"/><path d="M236 452.5 H610.3" stroke="#d8d8d8" stroke-width="0.7" stroke-dasharray="1 2"/><path d="M236 469.9 H610.3" stroke="#d8d8d8" stroke-width="0.7" stroke-dasharray="1 2"/><path d="M236 487.3 H610.3" stroke="#d8d8d8" stroke-width="0.7" stroke-dasharray="1 2"/><path d="M236 504.7 H610.3" stroke="#d8d8d8" stroke-width="0.7" stroke-dasharray="1 2"/><path d="M236 522.1 H610.3" stroke="#d8d8d8" stroke-width="0.7" stroke-dasharray="1 2"/><path d="M236 539.5 H610.3" stroke="#d8d8d8" stroke-width="0.7" stroke-dasharray="1 2"/><path d="M236 556.9 H610.3" stroke="#d8d8d8" stroke-width="0.7" stroke-dasharray="1 2"/><path d="M236 406.0 H610.3" stroke="#e2e2e2" stroke-width="0.7" stroke-dasharray="1 2"/><path d="M236 422.8 H610.3" stroke="#e2e2e2" stroke-width="0.7" stroke-dasharray="1 2"/><path d="M236 439.6 H610.3" stroke="#e2e2e2" stroke-width="0.7" stroke-dasharray="1 2"/><path d="M236 456.4 H610.3" stroke="#e2e2e2" stroke-width="0.7" stroke-dasharray="1 2"/><path d="M236 473.2 H610.3" stroke="#e2e2e2" stroke-width="0.7" stroke-dasharray="1 2"/><path d="M236 490.0 H610.3" stroke="#e2e2e2" stroke-width="0.7" stroke-dasharray="1 2"/><path d="M236 506.8 H610.3" stroke="#e2e2e2" stroke-width="0.7" stroke-dasharray="1 2"/><path d="M236 523.6 H610.3" stroke="#e2e2e2" stroke-width="0.7" stroke-dasharray="1 2"/><path d="M236 540.4 H610.3" stroke="#e2e2e2" stroke-width="0.7" stroke-dasharray="1 2"/><path d="M236 557.2 H610.3" stroke="#e2e2e2" stroke-width="0.7" stroke-dasharray="1 2"/><path d="M236 574.0 H610.3" stroke="#e2e2e2" stroke-width="0.7" stroke-dasharray="1 2"/><path d="M472.7 400.3 V574.3" stroke="#ffc8c8" stroke-width="1"/><path d="M582.4 400.3 V574.3" stroke="#ffc8c8" stroke-width="1"/><path d="M236.5 400.3 V574.3" stroke="#ff7070" stroke-width="1.3"/><path d="M195.2 400.3 V574.3" stroke="#b5d96a" stroke-width="1"/><path d="M610.3 400.3 V574.3" stroke="#3b3bf0" stroke-width="1"/><path d="M651.2 400.3 V574.3" stroke="#ffc37a" stroke-width="1"/><path d="M693.7 400.3 V574.3" stroke="#50f0f0" stroke-width="1"/><path d="M236 574.3 H610.3" stroke="#ccd6eb" stroke-width="1"/><path d="M189 400.3 H195 M230 400.3 H236 M610.3 400.3 H616.4 M693.7 400.3 H699.8" stroke="#ccd6eb" stroke-width="1"/><path d="M189 417.7 H195 M230 417.7 H236 M610.3 417.7 H616.4 M693.7 417.7 H699.8" stroke="#ccd6eb" stroke-width="1"/><path d="M189 435.1 H195 M230 435.1 H236 M610.3 435.1 H616.4 M693.7 435.1 H699.8" stroke="#ccd6eb" stroke-width="1"/><path d="M189 452.5 H195 M230 452.5 H236 M610.3 452.5 H616.4 M693.7 452.5 H699.8" stroke="#ccd6eb" stroke-width="1"/><path d="M189 469.9 H195 M230 469.9 H236 M610.3 469.9 H616.4 M693.7 469.9 H699.8" stroke="#ccd6eb" stroke-width="1"/><path d="M189 487.3 H195 M230 487.3 H236 M610.3 487.3 H616.4 M693.7 487.3 H699.8" stroke="#ccd6eb" stroke-width="1"/><path d="M189 504.7 H195 M230 504.7 H236 M610.3 504.7 H616.4 M693.7 504.7 H699.8" stroke="#ccd6eb" stroke-width="1"/><path d="M189 522.1 H195 M230 522.1 H236 M610.3 522.1 H616.4 M693.7 522.1 H699.8" stroke="#ccd6eb" stroke-width="1"/><path d="M189 539.5 H195 M230 539.5 H236 M610.3 539.5 H616.4 M693.7 539.5 H699.8" stroke="#ccd6eb" stroke-width="1"/><path d="M189 556.9 H195 M230 556.9 H236 M610.3 556.9 H616.4 M693.7 556.9 H699.8" stroke="#ccd6eb" stroke-width="1"/><path d="M189 574.3 H195 M230 574.3 H236 M610.3 574.3 H616.4 M693.7 574.3 H699.8" stroke="#ccd6eb" stroke-width="1"/><path d="M651.2 406.0 H657" stroke="#ccd6eb" stroke-width="1"/><path d="M651.2 422.8 H657" stroke="#ccd6eb" stroke-width="1"/><path d="M651.2 439.6 H657" stroke="#ccd6eb" stroke-width="1"/><path d="M651.2 456.4 H657" stroke="#ccd6eb" stroke-width="1"/><path d="M651.2 473.2 H657" stroke="#ccd6eb" stroke-width="1"/><path d="M651.2 490.0 H657" stroke="#ccd6eb" stroke-width="1"/><path d="M651.2 506.8 H657" stroke="#ccd6eb" stroke-width="1"/><path d="M651.2 523.6 H657" stroke="#ccd6eb" stroke-width="1"/><path d="M651.2 540.4 H657" stroke="#ccd6eb" stroke-width="1"/><path d="M651.2 557.2 H657" stroke="#ccd6eb" stroke-width="1"/><path d="M651.2 574.0 H657" stroke="#ccd6eb" stroke-width="1"/><path d="M290.4 574.3 V579" stroke="#ccd6eb" stroke-width="1"/><path d="M345 574.3 V579" stroke="#ccd6eb" stroke-width="1"/><path d="M399.6 574.3 V579" stroke="#ccd6eb" stroke-width="1"/><path d="M454.4 574.3 V579" stroke="#ccd6eb" stroke-width="1"/><path d="M508.7 574.3 V579" stroke="#ccd6eb" stroke-width="1"/><path d="M563 574.3 V579" stroke="#ccd6eb" stroke-width="1"/><path d="M239.5 455.0 L242.0 458.0 L244.2 574.0 L244.2 400.0 L245.0 458.0 L245.0 464.4 L245.2 469.2 L245.3 464.6 L245.5 464.1 L245.7 460.2 L245.8 464.7 L246.0 472.9 L246.2 468.7 L246.3 472.5 L246.5 467.6 L246.7 468.5 L246.8 467.2 L247.0 455.7 L247.2 471.4 L247.3 469.2 L247.5 469.2 L247.7 455.6 L247.8 455.3 L248.0 460.6 L248.2 463.2 L248.3 468.0 L248.5 465.8 L248.7 469.3 L248.8 462.1 L249.0 468.0 L249.2 468.5 L249.3 462.0 L249.5 476.8 L249.7 469.6 L249.8 473.5 L250.0 462.3 L250.2 461.5 L250.3 464.0 L250.5 465.5 L250.7 470.1 L250.8 467.7 L251.0 463.4 L251.2 460.2 L251.3 462.9 L251.5 473.7 L251.7 461.1 L251.8 467.7 L252.0 468.8 L252.2 456.9 L252.3 466.5 L252.5 474.3 L252.7 453.7 L252.8 464.2 L253.0 465.5 L253.2 461.1 L253.3 469.3 L253.5 465.8 L253.7 457.1 L253.8 471.3 L254.0 470.4 L254.2 472.1 L254.3 475.1 L254.5 468.5 L254.7 467.0 L254.8 458.2 L255.0 470.0 L255.2 462.4 L255.3 463.4 L255.5 458.4 L255.7 460.2 L255.8 463.0 L256.0 474.2 L256.2 453.7 L256.3 457.2 L256.5 467.8 L256.7 475.2 L256.8 469.9 L257.0 454.5 L257.2 450.7 L257.3 468.5 L257.5 461.7 L257.7 459.4 L257.8 472.4 L258.0 473.1 L258.2 467.3 L258.3 467.8 L258.5 469.0 L258.7 476.2 L258.8 470.2 L259.0 469.5 L259.2 469.7 L259.3 456.6 L259.5 474.3 L259.7 472.3 L259.8 469.6 L260.0 454.1 L260.2 462.4 L260.3 471.6 L260.5 455.1 L260.7 465.2 L260.8 472.7 L261.0 458.2 L261.2 476.4 L261.3 469.8 L261.5 465.5 L261.7 468.4 L261.8 470.4 L262.0 467.1 L262.2 473.5 L262.3 462.3 L262.5 463.8 L262.7 472.9 L262.8 466.6 L263.0 461.0 L263.2 472.3 L263.3 475.5 L263.5 463.7 L263.7 457.9 L263.8 465.6 L264.0 465.5 L264.2 464.6 L264.3 475.2 L264.5 460.1 L264.7 474.3 L264.8 458.6 L265.0 461.6 L265.2 470.4 L265.3 473.5 L265.5 471.8 L265.7 468.6 L265.8 467.4 L266.0 467.4 L266.2 470.1 L266.3 465.4 L266.5 468.2 L266.7 470.1 L266.8 466.5 L267.0 471.2 L267.2 470.0 L267.3 479.0 L267.5 468.5 L267.7 463.9 L267.8 464.2 L268.0 466.5 L268.2 472.3 L268.3 464.5 L268.5 468.9 L268.7 477.9 L268.8 450.7 L269.0 459.6 L269.2 468.1 L269.3 469.0 L269.5 468.0 L269.7 463.9 L269.8 470.6 L270.0 468.3 L270.2 463.3 L270.3 481.7 L270.5 468.8 L270.7 463.2 L270.8 466.0 L271.0 465.2 L271.2 466.2 L271.3 450.5 L271.5 463.6 L271.7 472.9 L271.8 459.4 L272.0 466.2 L272.2 472.5 L272.3 471.9 L272.5 475.9 L272.7 456.1 L272.8 464.5 L273.0 464.5 L273.2 470.5 L273.3 473.4 L273.5 450.5 L273.7 473.4 L273.8 457.7 L274.0 470.9 L274.2 457.4 L274.3 467.8 L274.5 474.1 L274.7 465.8 L274.8 467.9 L275.0 471.6 L275.2 467.6 L275.3 466.2 L275.5 476.2 L275.7 473.2 L275.8 464.9 L276.0 482.8 L276.2 459.6 L276.3 472.4 L276.5 465.1 L276.7 467.6 L276.8 471.1 L277.0 468.1 L277.2 470.7 L277.3 457.3 L277.5 457.4 L277.7 470.6 L277.8 460.8 L278.0 460.4 L278.2 457.7 L278.3 474.6 L278.5 471.4 L278.7 475.9 L278.8 461.0 L279.0 466.8 L279.2 459.7 L279.3 471.5 L279.5 476.7 L279.7 461.3 L279.8 476.5 L280.0 472.9 L280.2 465.7 L280.3 454.6 L280.5 475.5 L280.7 466.2 L280.8 463.1 L281.0 469.3 L281.2 469.4 L281.3 476.1 L281.5 460.5 L281.7 473.9 L281.8 476.1 L282.0 475.9 L282.2 465.7 L282.3 462.3 L282.5 473.2 L282.7 467.6 L282.8 467.6 L283.0 475.7 L283.2 465.3 L283.3 452.7 L283.5 464.5 L283.7 455.4 L283.8 472.0 L284.0 468.9 L284.2 463.1 L284.3 466.9 L284.5 472.1 L284.7 467.4 L284.8 475.2 L285.0 466.6 L285.2 473.4 L285.3 476.2 L285.5 476.9 L285.7 462.8 L285.8 472.4 L286.0 455.3 L286.2 460.2 L286.3 454.8 L286.5 473.6 L286.7 459.3 L286.8 466.9 L287.0 465.8 L287.2 466.8 L287.3 463.3 L287.5 468.4 L287.7 478.1 L287.8 467.3 L288.0 470.3 L288.2 473.2 L288.3 465.8 L288.5 459.2 L288.7 463.6 L288.8 473.7 L289.0 456.8 L289.2 463.3 L289.3 473.3 L289.5 471.9 L289.7 467.1 L289.8 472.0 L290.0 468.1 L290.2 459.7 L290.3 457.4 L290.5 463.1 L290.7 472.8 L290.8 463.6 L291.0 461.5 L291.2 462.3 L291.3 457.6 L291.5 466.4 L291.7 459.8 L291.8 469.3 L292.0 452.5 L292.2 469.1 L292.3 463.1 L292.5 455.1 L292.7 471.6 L292.8 465.4 L293.0 453.3 L293.2 461.7 L293.3 468.9 L293.5 464.3 L293.7 472.0 L293.8 471.8 L294.0 471.3 L294.2 469.2 L294.3 475.4 L294.5 471.2 L294.7 470.0 L294.8 454.2 L295.0 472.7 L295.2 475.3 L295.3 465.3 L295.5 464.3 L295.7 479.2 L295.8 456.3 L296.0 470.1 L296.2 482.2 L296.3 461.4 L296.5 471.5 L296.7 478.9 L296.8 466.5 L297.0 470.7 L297.2 472.8 L297.3 461.6 L297.5 466.7 L297.7 469.0 L297.8 472.3 L298.0 467.0 L298.2 466.0 L298.3 460.9 L298.5 465.0 L298.7 472.8 L298.8 467.9 L299.0 462.0 L299.2 462.0 L299.3 483.4 L299.5 474.3 L299.7 471.2 L299.8 451.2 L300.0 471.1 L300.2 470.3 L300.3 477.7 L300.5 469.9 L300.7 466.9 L300.8 470.5 L301.0 455.2 L301.2 473.7 L301.3 469.3 L301.5 463.0 L301.7 475.5 L301.8 478.5 L302.0 458.6 L302.2 463.2 L302.3 469.1 L302.5 468.5 L302.7 464.9 L302.8 461.3 L303.0 480.5 L303.2 473.8 L303.3 460.0 L303.5 459.0 L303.7 477.9 L303.8 473.5 L304.0 478.7 L304.2 472.4 L304.3 462.0 L304.5 469.0 L304.7 454.0 L304.8 462.8 L305.0 467.0 L305.2 470.6 L305.3 462.9 L305.5 466.6 L305.7 470.3 L305.8 469.8 L306.0 471.4 L306.2 468.7 L306.3 465.4 L306.5 472.3 L306.7 467.7 L306.8 462.3 L307.0 463.6 L307.2 467.4 L307.3 466.8 L307.5 468.4 L307.7 467.5 L307.8 468.6 L308.0 466.6 L308.2 459.7 L308.3 470.1 L308.5 474.0 L308.7 470.2 L308.8 466.3 L309.0 470.3 L309.2 461.5 L309.3 455.7 L309.5 467.9 L309.7 461.7 L309.8 472.1 L310.0 460.8 L310.2 451.4 L310.3 461.1 L310.5 477.3 L310.7 465.2 L310.8 459.0 L311.0 462.8 L311.2 470.8 L311.3 470.6 L311.5 468.6 L311.7 476.8 L311.8 471.9 L312.0 467.4 L312.2 471.3 L312.3 477.8 L312.5 473.6 L312.7 473.9 L312.8 460.9 L313.0 466.7 L313.2 472.1 L313.3 465.8 L313.5 474.2 L313.7 471.3 L313.8 473.2 L314.0 466.3 L314.2 483.4 L314.3 475.3 L314.5 466.3 L314.7 468.2 L314.8 483.7 L315.0 465.5 L315.2 473.1 L315.3 473.7 L315.5 467.7 L315.7 460.4 L315.8 468.8 L316.0 469.9 L316.2 474.7 L316.3 472.5 L316.5 467.8 L316.7 473.0 L316.8 471.0 L317.0 469.0 L317.2 468.0 L317.3 466.2 L317.5 471.9 L317.7 461.2 L317.8 463.8 L318.0 467.7 L318.2 458.6 L318.3 465.0 L318.5 455.3 L318.7 463.5 L318.8 471.2 L319.0 471.2 L319.2 467.4 L319.3 466.3 L319.5 458.9 L319.7 479.1 L319.8 470.9 L320.0 474.5 L320.2 462.3 L320.3 466.6 L320.5 456.5 L320.7 472.6 L320.8 473.6 L321.0 456.0 L321.2 467.4 L321.3 471.7 L321.5 456.9 L321.7 456.5 L321.8 461.2 L322.0 463.9 L322.2 459.1 L322.3 468.0 L322.5 469.3 L322.7 471.7 L322.8 472.2 L323.0 477.1 L323.2 475.0 L323.3 459.7 L323.5 464.7 L323.7 461.3 L323.8 461.2 L324.0 467.3 L324.2 467.9 L324.3 470.9 L324.5 458.0 L324.7 460.2 L324.8 467.7 L325.0 466.6 L325.2 465.9 L325.3 467.5 L325.5 463.2 L325.7 472.2 L325.8 470.1 L326.0 467.3 L326.2 463.7 L326.3 466.8 L326.5 451.8 L326.7 461.8 L326.8 468.1 L327.0 458.6 L327.2 469.1 L327.3 468.8 L327.5 459.4 L327.7 466.4 L327.8 466.0 L328.0 470.8 L328.2 471.7 L328.3 467.7 L328.5 462.7 L328.7 467.1 L328.8 467.5 L329.0 472.5 L329.2 469.8 L329.3 463.5 L329.5 459.6 L329.7 465.7 L329.8 463.4 L330.0 461.1 L330.2 467.3 L330.3 464.9 L330.5 468.6 L330.7 471.2 L330.8 465.4 L331.0 482.4 L339.0 462.0 L339.5 459.0 L339.7 467.8 L339.8 461.8 L340.0 467.9 L340.2 446.3 L340.3 456.4 L340.5 462.6 L340.7 464.8 L340.8 475.5 L341.0 463.0 L341.2 469.0 L341.3 465.8 L341.5 466.9 L341.7 464.2 L341.8 460.1 L342.0 464.2 L342.2 454.4 L342.3 468.4 L342.5 454.8 L342.7 462.6 L342.8 474.2 L343.0 459.7 L343.2 461.2 L343.3 468.3 L343.5 461.3 L343.7 456.1 L343.8 462.7 L344.0 464.7 L344.2 465.5 L344.3 456.3 L344.5 472.0 L344.7 471.5 L344.8 461.3 L345.0 462.8 L345.2 458.5 L345.3 469.9 L345.5 456.8 L345.7 465.4 L345.8 458.2 L346.0 456.9 L346.2 465.6 L346.3 469.5 L346.5 461.1 L346.7 457.0 L346.8 466.2 L347.0 460.9 L347.2 463.1 L347.3 470.7 L347.5 468.2 L347.7 458.0 L347.8 475.4 L348.0 461.3 L348.2 466.1 L348.3 457.2 L348.5 461.0 L348.7 450.4 L348.8 472.3 L349.0 469.7 L349.2 453.7 L349.3 452.0 L349.5 451.2 L349.7 468.6 L349.8 458.4 L350.0 460.9 L350.2 459.4 L350.3 460.6 L350.5 454.6 L350.7 461.5 L350.8 452.4 L351.0 460.9 L351.2 463.2 L351.3 464.2 L351.5 459.9 L351.7 455.7 L351.8 462.3 L352.0 458.4 L352.2 471.1 L352.3 466.1 L352.5 460.7 L352.7 458.5 L352.8 457.0 L353.0 455.6 L353.2 459.2 L353.3 463.2 L353.5 464.6 L353.7 464.9 L353.8 474.4 L354.0 457.0 L354.2 461.5 L354.3 477.5 L354.5 449.9 L354.7 458.2 L354.8 462.5 L355.0 462.4 L355.2 464.0 L355.3 460.0 L355.5 463.7 L355.7 461.8 L355.8 466.3 L356.0 449.7 L356.2 456.0 L356.3 461.5 L356.5 455.1 L356.7 455.0 L356.8 465.4 L357.0 457.5 L357.2 465.4 L357.3 466.1 L357.5 463.4 L357.7 464.7 L357.8 460.9 L358.0 452.8 L358.2 461.3 L358.3 464.4 L358.5 458.3 L358.7 460.9 L358.8 466.2 L359.0 456.1 L359.2 465.5 L359.3 473.1 L359.5 458.1 L359.7 462.5 L359.8 460.7 L360.0 471.1 L360.2 463.6 L360.3 467.2 L360.5 457.3 L360.7 461.5 L360.8 461.6 L361.0 450.6 L361.2 470.6 L361.3 467.2 L361.5 450.8 L361.7 466.3 L361.8 460.8 L362.0 464.4 L362.2 463.9 L362.3 452.4 L362.5 460.3 L362.7 470.9 L362.8 458.1 L363.0 455.3 L363.2 453.3 L363.3 454.1 L363.5 463.8 L363.7 472.2 L363.8 464.4 L364.0 463.2 L364.2 475.6 L364.3 458.5 L364.5 457.5 L364.7 465.0 L364.8 465.1 L365.0 455.4 L365.2 454.5 L365.3 463.5 L365.5 463.3 L365.7 453.6 L365.8 460.5 L366.0 458.4 L366.2 464.6 L366.3 461.0 L366.5 461.2 L366.7 459.6 L366.8 468.3 L367.0 470.4 L367.2 459.5 L367.3 467.0 L367.5 457.1 L367.7 462.3 L367.8 466.5 L368.0 471.2 L368.2 459.5 L368.3 461.4 L368.5 463.1 L368.7 452.5 L368.8 461.9 L369.0 457.7 L369.2 464.2 L369.3 454.9 L369.5 449.6 L369.7 462.1 L369.8 463.5 L370.0 458.5 L370.2 467.4 L370.3 460.2 L370.5 458.1 L370.7 464.9 L370.8 452.2 L371.0 457.7 L371.2 461.8 L371.3 467.2 L371.5 460.9 L371.7 463.8 L371.8 457.9 L372.0 463.8 L372.2 472.3 L372.3 457.7 L372.5 476.6 L372.7 458.0 L372.8 462.1 L373.0 463.0 L373.2 468.3 L373.3 454.3 L373.5 449.0 L373.7 465.7 L373.8 466.9 L374.0 465.9 L374.2 478.1 L374.3 463.3 L374.5 463.6 L374.7 467.8 L374.8 464.3 L375.0 472.3 L375.2 454.3 L375.3 459.7 L375.5 445.9 L375.7 467.1 L375.8 459.7 L376.0 467.8 L376.2 475.4 L376.3 462.0 L376.5 460.5 L376.7 459.0 L376.8 456.9 L377.0 458.2 L377.2 466.0 L377.3 462.3 L377.5 462.5 L377.7 461.0 L377.8 467.8 L378.0 465.2 L378.2 461.2 L378.3 466.2 L378.5 461.2 L378.7 455.0 L378.8 471.2 L379.0 465.0 L379.2 456.2 L379.3 468.8 L379.5 464.3 L379.7 452.5 L379.8 472.1 L380.0 464.2 L380.2 467.7 L380.3 463.4 L380.5 461.2 L380.7 452.6 L380.8 468.2 L381.0 462.4 L381.2 460.4 L381.3 464.4 L381.5 462.7 L381.7 466.4 L381.8 459.9 L382.0 462.0 L382.2 449.0 L382.3 459.6 L382.5 466.4 L382.7 470.5 L382.8 460.0 L383.0 461.5 L383.2 472.1 L383.3 460.2 L383.5 466.8 L383.7 472.7 L383.8 462.5 L384.0 469.9 L384.2 457.9 L384.3 463.6 L384.5 461.8 L384.7 463.0 L384.8 469.3 L385.0 477.1 L385.2 458.2 L385.3 458.8 L385.5 465.4 L385.7 455.8 L385.8 465.4 L386.0 465.9 L386.2 460.6 L386.3 465.6 L386.5 452.7 L386.7 467.1 L386.8 452.8 L387.0 458.0 L387.2 458.9 L387.3 459.9 L387.5 467.7 L387.7 462.9 L387.8 459.9 L388.0 465.8 L388.2 472.2 L388.3 462.4 L388.5 464.7 L388.7 470.1 L388.8 464.1 L389.0 454.5 L389.2 477.9 L389.3 476.1 L389.5 450.1 L389.7 462.2 L389.8 465.0 L390.0 468.4 L390.2 466.6 L390.3 460.8 L390.5 455.9 L390.7 463.1 L390.8 468.9 L391.0 455.7 L391.2 456.1 L391.3 462.3 L391.5 450.5 L391.7 460.9 L391.8 459.8 L392.0 465.3 L392.2 458.2 L392.3 457.0 L392.5 460.1 L392.7 462.2 L392.8 458.4 L393.0 462.6 L393.2 467.2 L393.3 469.9 L393.5 473.1 L393.7 457.7 L393.8 460.0 L394.0 447.2 L394.2 474.3 L394.3 458.1 L394.5 462.4 L394.7 465.8 L394.8 454.2 L395.0 465.5 L395.2 462.4 L395.3 451.3 L395.5 464.4 L395.7 470.0 L395.8 451.0 L396.0 467.6 L396.2 463.9 L396.3 465.6 L396.5 465.4 L396.7 470.7 L396.8 461.3 L397.0 468.1 L397.2 460.1 L397.3 467.2 L397.5 457.6 L397.7 462.0 L397.8 473.4 L398.0 465.4 L398.2 461.7 L398.3 455.6 L398.5 457.8 L398.7 463.9 L398.8 468.5 L399.0 465.3 L399.2 466.0 L399.3 462.5 L399.5 471.1 L399.7 460.3 L399.8 459.3 L400.0 468.2 L400.2 463.1 L400.3 461.0 L400.5 459.2 L400.7 461.2 L400.8 466.6 L401.0 465.0 L401.2 455.3 L401.3 465.4 L401.5 463.9 L401.7 456.6 L401.8 467.6 L402.0 461.1 L402.2 460.7 L402.3 467.7 L402.5 471.0 L402.7 458.5 L402.8 465.5 L403.0 457.4 L403.2 477.2 L403.3 459.8 L403.5 470.2 L403.7 458.8 L403.8 467.9 L404.0 476.6 L404.2 447.1 L404.3 460.2 L404.5 466.0 L404.7 462.3 L404.8 458.7 L405.0 476.2 L405.2 463.4 L405.3 452.7 L405.5 468.2 L405.7 452.2 L405.8 470.0 L406.0 459.3 L406.2 463.8 L406.3 470.7 L406.5 463.7 L406.7 454.3 L406.8 452.4 L407.0 470.3 L407.2 467.5 L407.3 457.9 L407.5 468.3 L407.7 466.0 L407.8 467.0 L408.0 449.0 L408.2 461.1 L408.3 468.6 L408.5 467.5 L408.7 468.5 L408.8 447.8 L409.0 464.0 L409.2 466.1 L409.3 478.8 L409.5 457.1 L409.7 461.0 L409.8 463.2 L410.0 468.5 L410.2 460.3 L410.3 470.1 L410.5 458.2 L410.7 464.7 L410.8 459.8 L411.0 464.0 L411.2 458.8 L411.3 453.2 L411.5 469.8 L411.7 465.0 L411.8 459.6 L412.0 464.3 L412.2 469.2 L412.3 457.0 L412.5 462.4 L412.7 466.4 L412.8 466.4 L413.0 461.0 L413.2 450.1 L413.3 470.8 L413.5 465.2 L413.7 463.2 L413.8 461.4 L414.0 464.8 L414.2 460.5 L414.3 456.8 L414.5 458.6 L414.7 459.5 L414.8 459.4 L415.0 456.0 L415.2 467.1 L415.3 455.1 L415.5 467.3 L415.7 456.9 L415.8 465.4 L416.0 471.7 L416.2 464.5 L416.3 458.7 L416.5 463.5 L416.7 464.1 L416.8 452.5 L417.0 459.5 L417.2 464.2 L417.3 460.3 L417.5 463.7 L417.7 467.8 L417.8 468.0 L418.0 468.9 L418.2 466.9 L418.3 461.5 L418.5 463.2 L418.7 461.6 L418.8 461.3 L419.0 462.2 L419.2 452.6 L419.3 461.2 L419.5 463.1 L419.7 457.3 L419.8 463.2 L420.0 466.5 L420.2 462.3 L420.3 476.2 L420.5 447.2 L420.7 462.1 L420.8 452.0 L421.0 469.4 L421.2 479.5 L421.3 447.8 L421.5 464.1 L421.7 466.6 L421.8 461.5 L422.0 466.8 L422.2 449.5 L422.3 468.7 L422.5 465.7 L422.7 463.5 L422.8 459.7 L423.0 467.4 L423.2 460.4 L423.3 464.8 L423.5 460.2 L423.7 449.5 L423.8 463.2 L424.0 464.7 L424.2 468.1 L424.3 458.0 L424.5 463.2 L424.7 467.3 L424.8 464.4 L425.0 471.2 L425.2 475.8 L425.3 457.8 L425.5 451.6 L425.7 468.8 L425.8 473.0 L426.0 469.2 L426.2 468.5 L426.3 459.7 L426.5 459.1 L426.7 469.0 L426.8 457.9 L427.0 452.3 L427.2 457.3 L427.3 479.0 L427.5 475.5 L427.7 459.3 L427.8 459.0 L428.0 465.0 L428.2 458.9 L428.3 471.7 L428.5 463.1 L428.7 456.8 L428.8 471.7 L429.0 460.0 L429.2 464.9 L429.3 463.5 L429.5 461.6 L429.7 465.6 L429.8 459.3 L430.0 452.2 L430.2 449.9 L430.3 455.8 L430.5 458.9 L430.7 463.5 L430.8 464.0 L431.0 467.1 L431.2 464.4 L431.3 458.7 L431.5 459.2 L431.7 450.5 L431.8 462.6 L432.0 466.7 L432.2 466.9 L432.3 462.9 L432.5 462.6 L432.7 469.5 L432.8 463.8 L433.0 468.3 L433.2 467.3 L433.3 465.0 L433.5 471.8 L433.7 460.2 L433.8 461.5 L434.0 458.7 L434.2 458.8 L434.3 473.4 L434.5 474.6 L434.7 463.9 L434.8 467.3 L435.0 471.0 L435.2 468.8 L435.3 471.2 L435.5 455.9 L435.7 459.8 L435.8 466.6 L436.0 472.7 L436.2 464.4 L436.3 458.5 L436.5 461.6 L436.7 459.7 L436.8 458.5 L437.0 473.1 L437.2 459.9 L437.3 463.9 L437.5 477.2 L437.7 471.2 L437.8 465.9 L438.0 460.0 L438.2 466.4 L438.3 473.9 L438.5 467.7 L438.7 471.7 L438.8 464.5 L439.0 467.1 L439.2 462.6 L439.3 466.5 L439.5 471.9 L439.7 455.0 L439.8 463.5 L440.0 465.4 L440.2 460.3 L440.3 462.0 L440.5 468.8 L440.7 476.3 L440.8 467.8 L441.0 465.9 L441.2 454.3 L441.3 475.9 L441.5 464.4 L441.7 463.7 L441.8 457.0 L442.0 463.6 L442.2 457.2 L442.3 464.4 L442.5 466.8 L442.7 464.2 L442.8 465.7 L443.0 458.7 L443.2 472.8 L443.3 459.9 L443.5 452.7 L443.7 462.8 L443.8 459.3 L444.0 457.7 L444.0 463.9 L444.2 467.7 L444.3 459.2 L444.5 465.2 L444.7 474.3 L444.8 470.0 L445.0 465.2 L445.2 466.8 L445.3 465.4 L445.5 465.8 L445.7 470.3 L445.8 465.5 L446.0 452.1 L446.2 466.0 L446.3 460.9 L446.5 469.9 L446.7 462.6 L446.8 467.0 L447.0 478.7 L447.2 460.0 L447.3 459.6 L447.5 457.9 L447.7 452.2 L447.8 455.2 L448.0 468.3 L448.2 462.4 L448.3 455.3 L448.5 457.6 L448.7 469.7 L448.8 461.7 L449.0 464.1 L449.2 468.1 L449.3 474.1 L449.5 477.5 L449.7 472.2 L449.8 467.0 L450.0 467.3 L450.2 476.7 L450.3 474.5 L450.5 464.4 L450.7 468.9 L450.8 467.9 L451.0 466.6 L451.2 463.4 L451.3 458.6 L451.5 463.2 L451.7 457.3 L451.8 473.4 L452.0 469.4 L452.2 459.3 L452.3 474.4 L452.5 471.5 L452.7 455.2 L452.8 477.0 L453.0 471.0 L453.2 478.3 L453.3 459.2 L453.5 469.4 L453.7 468.8 L453.8 467.5 L454.0 467.4 L454.2 472.5 L454.3 457.7 L454.5 459.2 L454.7 458.3 L454.8 463.2 L455.0 462.9 L455.2 468.5 L455.3 468.0 L455.5 466.6 L455.7 462.5 L455.8 463.9 L456.0 472.0 L456.2 470.9 L456.3 467.0 L456.5 464.6 L456.7 475.5 L456.8 463.0 L457.0 470.2 L457.2 473.2 L457.3 464.9 L457.5 471.3 L457.7 460.0 L457.8 472.4 L458.0 467.7 L458.2 457.3 L458.3 470.4 L458.5 461.3 L458.7 474.0 L458.8 462.6 L459.0 465.6 L459.2 468.2 L459.3 464.6 L459.5 468.1 L459.7 463.4 L459.8 470.5 L460.0 466.6 L460.2 467.8 L460.3 451.5 L460.5 473.3 L460.7 466.8 L460.8 456.3 L461.0 467.2 L461.2 469.3 L461.3 472.8 L461.5 460.3 L461.7 475.6 L461.8 465.7 L462.0 480.5 L462.2 465.8 L462.3 470.6 L462.5 464.5 L462.7 460.2 L462.8 473.0 L463.0 471.9 L463.2 475.6 L463.3 471.7 L463.5 463.4 L463.7 457.1 L463.8 462.9 L464.0 462.8 L464.2 462.0 L464.3 470.1 L464.5 468.6 L464.7 465.2 L464.8 467.7 L465.0 465.9 L465.2 468.0 L465.3 471.1 L465.5 472.3 L465.7 462.8 L465.8 458.0 L466.0 475.1 L466.2 467.5 L466.3 473.2 L466.5 457.3 L466.7 464.9 L466.8 467.0 L467.0 458.5 L467.2 463.8 L467.3 471.0 L467.5 473.1 L467.7 476.1 L467.8 461.8 L468.0 458.7 L468.2 469.9 L468.3 472.3 L468.5 468.0 L468.7 459.3 L468.8 471.4 L469.0 471.5 L469.2 470.1 L469.3 464.1 L469.5 468.7 L469.7 471.5 L469.8 463.7 L470.0 456.2 L470.2 468.8 L470.3 469.7 L470.5 467.0 L470.7 472.1 L470.8 463.6 L471.0 466.5 L471.2 465.2 L471.3 470.3 L471.5 476.2 L471.7 465.5 L471.8 478.9 L472.0 475.9 L472.2 471.6 L472.3 470.4 L472.5 477.3 L472.7 466.0 L472.8 466.4 L473.0 460.9 L473.2 469.8 L473.3 474.8 L473.5 470.1 L473.7 469.5 L473.8 465.9 L474.0 468.1 L474.2 458.8 L474.3 473.2 L474.5 464.7 L474.7 460.7 L474.8 462.7 L475.0 462.3 L475.2 472.1 L475.3 473.3 L475.5 459.3 L475.7 472.5 L475.8 472.3 L476.0 463.8 L476.2 458.5 L476.3 462.8 L476.5 463.5 L476.7 469.2 L476.8 465.1 L477.0 455.4 L477.2 468.5 L477.3 458.3 L477.5 472.4 L477.7 460.2 L477.8 463.2 L478.0 462.3 L478.2 464.1 L478.3 474.8 L478.5 472.2 L478.7 470.7 L478.8 469.1 L479.0 458.3 L479.2 464.2 L479.3 464.1 L479.5 461.6 L479.7 470.2 L479.8 463.0 L480.0 463.2 L480.2 461.2 L480.3 455.4 L480.5 470.8 L480.7 475.0 L480.8 468.3 L481.0 461.7 L481.2 452.2 L481.3 468.3 L481.5 474.4 L481.7 469.1 L481.8 472.7 L482.0 475.9 L482.2 473.9 L482.3 464.8 L482.5 473.5 L482.7 471.9 L482.8 458.5 L483.0 465.0 L483.2 459.1 L483.3 466.8 L483.5 470.8 L483.7 461.2 L483.8 455.5 L484.0 475.0 L484.2 469.6 L484.3 476.0 L484.5 459.8 L484.7 473.6 L484.8 479.5 L485.0 479.1 L485.2 466.3 L485.3 469.0 L485.5 466.6 L485.7 473.3 L485.8 473.5 L486.0 468.0 L486.2 459.6 L486.3 471.8 L486.5 464.8 L486.7 471.2 L486.8 469.1 L487.0 477.0 L487.2 474.1 L487.3 464.9 L487.5 469.6 L487.7 477.8 L487.8 464.4 L488.0 470.1 L488.2 474.5 L488.3 474.9 L488.5 470.6 L488.7 459.9 L488.8 460.3 L489.0 469.0 L489.2 469.9 L489.3 482.4 L489.5 462.6 L489.7 474.2 L489.8 472.1 L490.0 457.9 L490.2 462.9 L490.3 468.6 L490.5 464.8 L490.7 466.8 L490.8 470.4 L491.0 463.0 L491.2 470.4 L491.3 464.0 L491.5 464.5 L491.7 470.8 L491.8 464.4 L492.0 469.4 L492.2 477.0 L492.3 467.9 L492.5 466.9 L492.7 472.0 L492.8 465.6 L493.0 474.0 L493.2 460.3 L493.3 471.3 L493.5 464.8 L493.7 463.1 L493.8 478.0 L494.0 462.9 L494.2 478.0 L494.3 471.6 L494.5 476.2 L494.7 462.1 L494.8 474.8 L495.0 476.3 L495.2 467.2 L495.3 467.1 L495.5 482.1 L495.7 468.9 L495.8 465.4 L496.0 464.2 L496.2 470.4 L496.3 469.8 L496.5 468.9 L496.7 477.9 L496.8 466.0 L497.0 470.6 L497.2 476.4 L497.3 462.1 L497.5 473.9 L497.7 478.5 L497.8 460.1 L498.0 461.6 L498.2 461.9 L498.3 457.2 L498.5 470.6 L498.7 457.2 L498.8 470.9 L499.0 476.4 L499.2 458.6 L499.3 466.1 L499.5 456.9 L499.7 472.5 L499.8 463.7 L500.0 466.5 L500.0 472.4 L500.2 475.6 L500.3 469.8 L500.5 472.1 L500.7 468.5 L500.8 472.8 L501.0 464.5 L501.2 472.5 L501.3 459.6 L501.5 469.0 L501.7 484.6 L501.8 472.7 L502.0 464.0 L502.2 473.9 L502.3 465.9 L502.5 461.5 L502.7 467.5 L502.8 477.1 L503.0 474.8 L503.2 471.7 L503.3 466.3 L503.5 465.3 L503.7 481.1 L503.8 474.0 L504.0 466.2 L504.2 458.7 L504.3 463.5 L504.5 488.5 L504.7 465.0 L504.8 472.0 L505.0 473.9 L505.2 471.5 L505.3 470.7 L505.5 463.6 L505.7 465.7 L505.8 483.5 L506.0 467.7 L506.2 478.1 L506.3 461.6 L506.5 470.9 L506.7 474.3 L506.8 479.4 L507.0 465.4 L507.2 476.6 L507.3 475.2 L507.5 467.9 L507.7 475.8 L507.8 466.9 L508.0 467.6 L508.2 472.7 L508.3 455.9 L508.5 472.1 L508.7 466.3 L508.8 463.4 L509.0 470.1 L509.2 477.9 L509.3 470.3 L509.5 481.2 L509.7 465.4 L509.8 464.4 L510.0 483.1 L510.2 475.6 L510.3 479.2 L510.5 467.7 L510.7 478.3 L510.8 474.7 L511.0 477.3 L511.2 473.3 L511.3 480.9 L511.5 468.9 L511.7 466.9 L511.8 463.6 L512.0 480.7 L512.2 468.4 L512.3 466.4 L512.5 467.1 L512.7 470.3 L512.8 465.0 L513.0 471.4 L513.2 469.2 L513.3 469.7 L513.5 467.1 L513.7 473.6 L513.8 470.4 L514.0 474.1 L514.2 475.0 L514.3 475.6 L514.5 459.2 L514.7 469.9 L514.8 468.3 L515.0 478.5 L515.2 463.2 L515.3 468.9 L515.5 471.6 L515.7 471.3 L515.8 480.0 L516.0 470.7 L516.2 479.8 L516.3 464.1 L516.5 461.8 L516.7 481.6 L516.8 476.5 L517.0 476.8 L517.2 474.5 L517.3 476.8 L517.5 465.8 L517.7 479.9 L517.8 470.3 L518.0 480.2 L518.2 474.3 L518.3 461.0 L518.5 465.4 L518.7 481.2 L518.8 472.9 L519.0 471.3 L519.2 475.4 L519.3 471.1 L519.5 470.4 L519.7 474.6 L519.8 474.9 L520.0 483.8 L520.2 474.3 L520.3 486.2 L520.5 485.7 L520.7 485.2 L520.8 480.9 L521.0 474.9 L521.2 475.0 L521.3 473.2 L521.5 469.3 L521.7 473.7 L521.8 470.0 L522.0 484.8 L522.2 477.6 L522.3 471.3 L522.5 461.7 L522.7 473.9 L522.8 471.5 L523.0 467.2 L523.2 466.9 L523.3 459.7 L523.5 478.0 L523.7 473.9 L523.8 491.1 L524.0 474.1 L524.2 473.4 L524.3 483.8 L524.5 475.3 L524.7 475.5 L524.8 472.0 L525.0 470.5 L525.2 484.2 L525.3 481.0 L525.5 485.6 L525.7 472.2 L525.8 474.7 L526.0 468.8 L526.2 480.8 L526.3 465.5 L526.5 478.3 L526.7 481.7 L526.8 483.8 L527.0 468.5 L527.2 481.7 L527.3 470.0 L527.5 469.8 L527.7 466.1 L527.8 482.2 L528.0 485.4 L528.2 470.9 L528.3 469.8 L528.5 472.6 L528.7 491.1 L528.8 481.3 L529.0 471.3 L529.2 463.2 L529.3 470.5 L529.5 482.6 L529.7 487.0 L529.8 473.2 L530.0 470.4 L530.2 471.6 L530.3 462.7 L530.5 480.9 L530.7 467.9 L530.8 481.9 L531.0 463.9 L531.2 466.8 L531.3 476.9 L531.5 470.1 L531.7 480.2 L531.8 475.2 L532.0 467.5 L532.2 479.2 L532.3 480.6 L532.5 462.7 L532.7 487.1 L532.8 478.4 L533.0 480.2 L533.2 463.1 L533.3 470.6 L533.5 473.0 L533.7 482.3 L533.8 465.8 L534.0 469.6 L534.2 462.1 L534.3 473.8 L534.5 477.6 L534.7 464.4 L534.8 471.6 L535.0 478.7 L535.2 485.7 L535.3 479.8 L535.5 473.5 L535.7 467.8 L535.8 469.4 L536.0 471.2 L536.2 476.5 L536.3 475.2 L536.5 486.4 L536.7 477.4 L536.8 468.6 L537.0 485.6 L537.2 481.8 L537.3 476.3 L537.5 471.0 L537.7 463.5 L537.8 469.0 L538.0 481.6 L538.2 470.5 L538.3 467.2 L538.5 477.0 L538.7 477.4 L538.8 479.7 L539.0 480.1 L539.2 485.0 L539.3 470.4 L539.5 482.2 L539.7 469.5 L539.8 480.4 L540.0 477.1 L540.2 477.5 L540.3 482.2 L540.5 475.8 L540.7 483.2 L540.8 481.7 L541.0 476.9 L542.0 434.0 L542.0 574.0 L543.0 480.0 L544.0 478.3 L544.2 477.1 L544.3 478.6 L544.5 480.7 L544.7 481.9 L544.8 499.0 L545.0 486.3 L545.2 487.1 L545.3 476.5 L545.5 477.5 L545.7 480.1 L545.8 483.4 L546.0 475.5 L546.2 492.7 L546.3 478.6 L546.5 489.3 L546.7 467.1 L546.8 482.3 L547.0 484.1 L547.2 483.6 L547.3 486.3 L547.5 484.2 L547.7 483.4 L547.8 470.1 L548.0 477.8 L548.2 467.2 L548.3 486.5 L548.5 484.5 L548.7 481.2 L548.8 477.2 L549.0 478.7 L549.2 494.5 L549.3 493.8 L549.5 482.2 L549.7 491.0 L549.8 472.3 L550.0 470.1 L550.2 479.5 L550.3 477.0 L550.5 479.0 L550.7 483.9 L550.8 499.6 L551.0 478.4 L551.2 483.1 L551.3 484.6 L551.5 482.6 L551.7 488.9 L551.8 494.4 L552.0 474.8 L552.2 483.9 L552.3 481.2 L552.5 485.2 L552.7 473.0 L552.8 471.5 L553.0 467.9 L553.2 486.4 L553.3 484.2 L553.5 483.5 L553.7 467.6 L553.8 480.6 L554.0 478.1 L554.2 473.9 L554.3 477.1 L554.5 487.6 L554.7 486.7 L554.8 483.0 L555.0 486.5 L555.2 479.3 L555.3 483.7 L555.5 483.5 L555.7 486.8 L555.8 482.8 L556.0 482.3 L556.2 482.4 L556.3 479.1 L556.5 497.8 L556.7 486.7 L556.8 486.1 L557.0 498.3 L557.2 492.5 L557.3 473.3 L557.5 487.9 L557.7 488.9 L557.8 495.7 L558.0 492.0 L558.2 488.5 L558.3 475.9 L558.5 477.9 L558.7 485.3 L558.8 486.8 L559.0 476.9 L559.2 481.1 L559.3 481.0 L559.5 484.0 L559.7 485.8 L559.8 481.8 L560.0 475.6 L560.2 491.8 L560.3 494.1 L560.5 483.0 L560.7 490.4 L560.8 486.7 L561.0 488.1 L561.2 486.9 L561.3 478.9 L561.5 487.6 L561.7 490.4 L561.8 478.1 L562.0 496.7 L562.2 497.5 L562.3 495.8 L562.5 496.9 L562.7 488.8 L562.8 481.8 L563.0 480.1 L563.2 478.7 L563.3 484.8 L563.5 483.8 L563.7 488.4 L563.8 471.0 L564.0 499.1 L564.2 498.9 L564.3 484.0 L564.5 488.6 L564.7 487.3 L564.8 486.0 L565.0 482.9 L565.2 483.4 L565.3 478.9 L565.5 485.4 L565.7 484.1 L565.8 486.4 L566.0 478.8 L566.2 484.6 L566.3 484.7 L566.5 488.3 L566.7 477.5 L566.8 487.1 L567.0 490.8 L567.2 488.3 L567.3 482.1 L567.5 481.3 L567.7 483.0 L567.8 489.2 L568.0 494.6 L568.2 483.5 L568.3 480.4 L568.5 487.0 L568.7 485.9 L568.8 478.7 L569.0 479.8 L569.2 484.0 L569.3 489.0 L569.5 476.9 L569.7 478.1 L569.8 488.0 L570.0 476.8 L570.2 485.5 L570.3 487.1 L570.5 484.1 L570.7 478.2 L570.8 484.4 L571.0 482.7 L571.2 487.0 L571.3 479.4 L571.5 492.0 L571.7 474.0 L571.8 483.8 L572.0 485.0 L572.2 491.2 L572.3 481.0 L572.5 488.5 L572.7 481.3 L572.8 489.8 L573.0 496.3 L573.2 482.5 L573.3 488.0 L573.5 479.1 L573.7 491.4 L573.8 493.0 L574.0 485.4 L574.2 477.8 L574.3 487.8 L574.5 492.7 L574.7 492.3 L574.8 490.5 L575.0 473.4 L575.2 480.9 L575.3 494.5 L575.5 477.3 L575.7 492.7 L575.8 497.6 L576.0 490.3 L576.2 492.7 L576.3 483.2 L576.5 477.5 L576.7 484.8 L576.8 484.2 L577.0 485.2 L577.2 490.0 L577.3 484.6 L577.5 486.8 L577.7 488.3 L577.8 485.5 L578.0 497.6 L578.2 488.5 L578.3 486.2 L578.5 484.3 L578.7 481.6 L578.8 494.4 L579.0 486.7 L579.2 478.7 L579.3 482.1 L579.5 484.8 L579.7 482.9 L579.8 492.8 L580.0 478.2 L580.2 489.0 L580.3 486.8 L580.5 478.2 L580.7 486.2 L580.8 485.3 L581.0 489.2 L581.2 483.0 L581.3 487.9 L581.5 475.1 L581.7 478.9 L581.8 491.1 L582.0 492.8 L583.0 468.0 L583.0 574.0 L584.0 490.0 L584.0 491.9 L584.2 489.6 L584.3 496.4 L584.5 483.7 L584.7 488.9 L584.8 494.8 L585.0 494.8 L585.2 488.1 L585.3 484.7 L585.5 498.1 L585.7 492.9 L585.8 488.7 L586.0 492.6 L586.2 496.0 L586.3 482.1 L586.5 496.9 L586.7 495.4 L586.8 484.2 L587.0 495.6 L587.2 485.4 L587.3 497.2 L587.5 494.2 L587.7 501.7 L587.8 490.2 L588.0 492.7 L588.2 496.9 L588.3 490.2 L588.5 490.0 L588.7 491.4 L588.8 492.6 L589.0 488.6 L589.2 494.9 L589.3 495.1 L589.5 493.3 L589.7 499.8 L589.8 491.7 L590.0 498.3 L590.2 490.9 L590.3 496.2 L590.5 485.4 L590.7 494.0 L590.8 492.5 L591.0 491.3 L591.2 490.8 L591.3 491.9 L591.5 490.5 L591.7 484.6 L591.8 491.0 L592.0 491.2 L592.2 491.4 L592.4 489.3 L592.5 493.0 L592.7 496.7 L592.9 492.6 L593.0 491.6 L593.2 499.1 L593.4 497.6 L593.5 497.4 L593.7 498.4 L593.9 492.5 L594.0 493.3 L594.2 498.3 L594.4 491.6 L594.5 493.4 L594.7 495.4 L594.9 495.4 L595.0 492.9 L595.2 497.9 L595.4 493.3 L595.5 497.0 L595.7 498.4 L595.9 496.8 L596.0 497.1 L596.2 489.6 L596.4 489.0 L596.5 491.8 L596.7 496.2 L596.9 500.3 L597.0 489.5 L597.2 495.6 L597.4 491.0 L597.5 491.5 L597.7 493.4 L597.9 497.3 L598.0 495.4 L598.2 499.3 L598.4 490.6 L598.5 498.2 L598.7 498.4 L598.9 494.9 L599.0 496.6 L599.2 492.5 L599.4 490.4 L599.5 493.2 L599.7 492.2 L599.9 505.2 L600.0 492.9 L600.2 501.5 L600.4 495.7 L600.5 496.2 L600.7 498.0" stroke="#ff9a0a" stroke-width="1" fill="none" stroke-linejoin="round"/><path d="M244.0 400.7 L245.6 493.7 L248.7 504.0 L249.0 502.9 L249.2 503.8 L249.5 504.1 L249.8 505.0 L250.0 503.5 L250.2 504.0 L250.5 506.0 L250.8 505.5 L251.0 504.2 L251.2 504.8 L251.5 504.9 L251.8 505.9 L252.0 505.9 L252.2 506.6 L252.5 506.6 L252.8 506.0 L253.0 506.7 L253.2 506.8 L253.5 507.0 L253.8 506.3 L254.0 507.3 L254.2 507.2 L254.5 507.8 L254.8 505.9 L255.0 508.0 L255.2 505.8 L255.5 507.9 L255.8 507.6 L256.0 507.4 L256.2 508.8 L256.5 507.9 L256.8 507.6 L257.0 508.6 L257.2 509.0 L257.5 508.4 L257.8 507.9 L258.0 508.2 L258.2 508.3 L258.5 509.1 L258.8 508.1 L259.0 508.4 L259.2 509.0 L259.5 508.6 L259.8 508.6 L260.0 509.9 L260.2 510.1 L260.5 509.3 L260.8 509.3 L261.0 508.7 L261.2 509.1 L261.5 508.8 L261.8 510.0 L262.0 510.1 L262.2 508.9 L262.5 511.2 L262.8 509.7 L263.0 511.2 L263.2 511.2 L263.5 511.6 L263.8 509.8 L264.0 510.4 L264.2 511.8 L264.5 509.5 L264.8 509.7 L265.0 511.1 L265.2 511.0 L265.5 512.2 L265.8 511.9 L266.0 511.4 L266.2 512.7 L266.5 511.5 L266.8 511.6 L267.0 512.1 L267.2 511.4 L267.5 511.4 L267.8 512.1 L268.0 511.6 L268.2 513.2 L268.5 512.6 L268.8 512.3 L269.0 511.2 L269.2 511.6 L269.5 511.3 L269.8 511.4 L270.0 511.1 L270.2 511.6 L270.5 511.4 L270.8 509.8 L271.0 509.4 L271.2 509.5 L271.5 510.1 L271.8 508.1 L272.0 508.2 L272.2 509.5 L272.5 508.3 L272.8 509.1 L273.0 511.3 L273.2 511.4 L273.5 511.1 L273.8 510.5 L274.0 513.1 L274.2 513.0 L274.5 513.8 L274.8 514.8 L275.0 515.0 L275.2 513.8 L275.5 513.2 L275.8 513.6 L276.0 514.2 L276.2 514.3 L276.5 513.5 L276.8 513.6 L277.0 514.8 L277.2 514.8 L277.5 514.2 L277.8 515.9 L278.0 515.1 L278.2 513.6 L278.5 514.6 L278.8 515.6 L279.0 514.4 L279.2 515.5 L279.5 513.8 L279.8 514.6 L280.0 516.1 L280.2 515.4 L280.5 515.7 L280.8 514.5 L281.0 515.4 L281.2 515.6 L281.5 514.9 L281.8 515.9 L282.0 515.7 L282.2 516.9 L282.5 515.9 L282.8 515.5 L283.0 514.8 L283.2 515.0 L283.5 516.6 L283.8 514.9 L284.0 515.0 L284.2 515.2 L284.5 516.2 L284.8 517.0 L285.0 516.5 L285.2 517.1 L285.5 515.2 L285.8 515.1 L286.0 517.1 L286.2 516.0 L286.5 517.1 L286.8 516.2 L287.0 515.7 L287.2 516.0 L287.5 515.6 L287.8 517.8 L288.0 517.0 L288.2 516.4 L288.5 516.7 L288.8 516.6 L289.0 515.8 L289.2 518.0 L289.5 517.2 L289.8 518.3 L290.0 517.0 L290.2 517.5 L290.5 516.5 L290.8 515.5 L291.0 517.2 L291.2 516.4 L291.5 514.5 L291.8 515.4 L292.0 514.7 L292.2 512.8 L292.5 513.0 L292.8 513.4 L293.0 511.6 L293.2 513.4 L293.5 512.2 L293.8 513.2 L294.0 514.7 L294.2 514.1 L294.5 514.9 L294.8 517.0 L295.0 516.7 L295.2 518.1 L295.5 517.3 L295.8 517.2 L296.0 517.7 L296.2 517.3 L296.5 519.3 L296.8 517.6 L297.0 518.3 L297.2 517.2 L297.5 518.3 L297.8 518.0 L298.0 518.1 L298.2 517.2 L298.5 517.4 L298.8 519.3 L299.0 518.1 L299.2 517.8 L299.5 517.7 L299.8 518.0 L300.0 517.9 L300.2 517.4 L300.5 519.1 L300.8 518.3 L301.0 517.8 L301.2 519.3 L301.5 517.7 L301.8 518.2 L302.0 519.7 L302.2 517.5 L302.5 518.0 L302.8 518.7 L303.0 518.2 L303.2 516.2 L303.5 516.4 L303.8 517.0 L304.0 515.7 L304.2 517.6 L304.5 516.1 L304.8 518.4 L305.0 517.7 L305.2 517.4 L305.5 518.3 L305.8 517.9 L306.0 519.8 L306.2 518.7 L306.5 520.4 L306.8 519.6 L307.0 519.0 L307.2 518.7 L307.5 519.7 L307.8 518.7 L308.0 520.4 L308.2 518.5 L308.5 519.6 L308.8 519.7 L309.0 519.0 L309.2 520.3 L309.5 519.3 L309.8 520.1 L310.0 519.9 L310.0 521.2 L310.2 521.5 L310.5 520.8 L310.8 521.0 L311.0 522.6 L311.2 521.4 L311.5 522.2 L311.8 520.9 L312.0 522.0 L312.2 521.6 L312.5 521.9 L312.8 521.5 L313.0 520.9 L313.2 521.5 L313.5 521.4 L313.8 521.1 L314.0 522.6 L314.2 521.6 L314.5 521.9 L314.8 523.1 L315.0 522.8 L315.2 523.1 L315.5 523.1 L315.8 521.3 L316.0 521.7 L316.2 521.1 L316.5 522.7 L316.8 522.7 L317.0 522.0 L317.2 522.1 L317.5 522.8 L317.8 522.9 L318.0 521.8 L318.2 523.3 L318.5 522.1 L318.8 522.8 L319.0 521.7 L319.2 521.6 L319.5 523.5 L319.8 523.1 L320.0 523.1 L320.2 521.5 L320.5 521.5 L320.8 521.9 L321.0 522.0 L321.2 522.2 L321.5 522.4 L321.8 521.7 L322.0 522.3 L322.2 523.1 L322.5 522.1 L322.8 523.7 L323.0 523.0 L323.2 523.4 L323.5 522.3 L323.8 522.8 L324.0 523.4 L324.2 522.6 L324.5 521.8 L324.8 523.8 L325.0 523.7 L325.2 522.6 L325.5 522.0 L325.8 524.0 L326.0 523.4 L326.2 522.1 L326.5 522.6 L326.8 522.3 L327.0 523.9 L327.2 522.6 L327.5 524.3 L327.8 523.9 L328.0 522.3 L328.2 523.8 L328.5 523.1 L328.8 524.0 L329.0 524.2 L329.2 522.9 L329.5 522.5 L329.8 524.5 L330.0 523.3 L330.2 524.6 L330.5 524.0 L330.8 524.1 L331.0 524.4 L331.2 523.9 L331.5 523.5 L331.8 522.6 L332.0 524.2 L332.2 523.5 L332.5 523.8 L332.8 524.8 L333.0 522.9 L333.2 524.4 L333.5 522.7 L333.8 524.3 L334.0 524.6 L334.2 523.3 L334.5 524.0 L334.8 525.1 L335.0 524.3 L335.2 524.1 L335.5 523.4 L335.8 523.0 L336.0 523.7 L336.2 523.9 L336.5 523.4 L336.8 523.7 L337.0 523.3 L337.2 524.6 L337.5 524.6 L337.8 523.6 L338.0 523.6 L338.2 524.3 L338.5 524.1 L338.8 525.3 L339.0 524.0 L339.2 523.9 L339.5 525.3 L339.8 523.5 L340.0 524.6 L340.2 524.0 L340.5 525.2 L340.8 524.6 L341.0 525.1 L341.2 523.7 L341.5 524.9 L341.8 524.8 L342.0 524.5 L342.2 525.2 L342.5 525.4 L342.8 523.7 L343.0 524.2 L343.2 524.4 L343.5 524.0 L343.8 523.7 L344.0 524.2 L344.2 524.1 L344.5 525.3 L344.8 524.7 L345.0 523.9 L345.2 524.5 L345.5 524.8 L345.8 524.6 L346.0 524.1 L346.2 523.9 L346.5 523.8 L346.8 526.2 L347.0 525.6 L347.2 524.1 L347.5 525.6 L347.8 526.3 L348.0 525.3 L348.2 524.2 L348.5 525.1 L348.8 525.0 L349.0 524.5 L349.2 525.3 L349.5 524.1 L349.8 526.3 L350.0 525.6 L350.2 525.6 L350.5 526.4 L350.8 525.7 L351.0 524.8 L351.2 524.8 L351.5 524.6 L351.8 524.3 L352.0 526.1 L352.2 526.3 L352.5 525.0 L352.8 524.8 L353.0 525.9 L353.2 526.4 L353.5 526.6 L353.8 524.8 L354.0 526.3 L354.2 526.5 L354.5 526.3 L354.8 525.3 L355.0 525.0 L355.2 526.6 L355.5 525.4 L355.8 525.5 L356.0 526.0 L356.2 525.5 L356.5 526.7 L356.8 525.3 L357.0 524.8 L357.2 526.1 L357.5 526.3 L357.8 526.8 L358.0 526.5 L358.2 527.0 L358.5 527.1 L358.8 526.1 L359.0 526.1 L359.2 525.3 L359.5 525.7 L359.8 526.4 L360.0 525.2 L360.2 526.7 L360.5 525.4 L360.8 526.1 L361.0 527.4 L361.2 525.3 L361.5 525.2 L361.8 526.2 L362.0 525.6 L362.2 526.9 L362.5 525.2 L362.8 527.3 L363.0 527.3 L363.2 527.2 L363.5 526.3 L363.8 526.0 L364.0 526.9 L364.2 526.6 L364.5 526.4 L364.8 526.2 L365.0 526.5 L365.2 527.1 L365.5 527.5 L365.8 527.7 L366.0 525.9 L366.2 526.3 L366.5 526.6 L366.8 527.0 L367.0 526.5 L367.2 526.1 L367.5 525.9 L367.8 526.5 L368.0 526.8 L368.2 528.1 L368.5 527.9 L368.8 527.9 L369.0 528.1 L369.2 528.1 L369.5 527.3 L369.8 527.8 L370.0 526.0 L370.2 527.5 L370.5 527.4 L370.8 526.7 L371.0 527.4 L371.2 528.3 L371.5 527.2 L371.8 527.6 L372.0 526.8 L372.2 526.9 L372.5 528.2 L372.8 526.2 L373.0 526.6 L373.2 527.8 L373.5 527.3 L373.8 526.4 L374.0 527.8 L374.2 527.2 L374.5 527.7 L374.8 527.3 L375.0 527.6 L375.2 527.7 L375.5 527.3 L375.8 526.7 L376.0 526.9 L376.2 528.6 L376.5 527.8 L376.8 526.8 L377.0 528.6 L377.2 527.2 L377.5 526.8 L377.8 527.9 L378.0 527.2 L378.2 527.8 L378.5 528.0 L378.8 527.2 L379.0 528.1 L379.2 527.0 L379.5 528.0 L379.8 528.2 L380.0 527.0 L380.2 527.8 L380.5 527.0 L380.8 527.9 L381.0 529.0 L381.2 528.2 L381.5 528.7 L381.8 528.8 L382.0 527.3 L382.2 529.4 L382.5 528.8 L382.8 527.3 L383.0 529.1 L383.2 528.0 L383.5 527.5 L383.8 529.4 L384.0 528.5 L384.2 529.0 L384.5 527.5 L384.8 529.1 L385.0 527.4 L385.2 527.8 L385.5 528.2 L385.8 527.4 L386.0 528.8 L386.2 527.9 L386.5 528.1 L386.8 529.1 L387.0 528.5 L387.2 529.6 L387.5 529.0 L387.8 529.6 L388.0 528.9 L388.2 529.7 L388.5 529.7 L388.8 528.0 L389.0 529.4 L389.2 528.5 L389.5 529.5 L389.8 529.3 L390.0 529.7 L390.2 528.0 L390.5 528.6 L390.8 529.5 L391.0 530.1 L391.2 529.5 L391.5 527.9 L391.8 529.3 L392.0 528.1 L392.2 529.2 L392.5 529.9 L392.8 528.2 L393.0 530.2 L393.2 529.6 L393.5 528.6 L393.8 528.5 L394.0 529.1 L394.2 530.1 L394.5 529.5 L394.8 528.4 L395.0 528.2 L395.2 528.4 L395.5 530.1 L395.8 528.7 L396.0 529.6 L396.2 529.0 L396.5 529.9 L396.8 529.2 L397.0 528.7 L397.2 530.5 L397.5 529.7 L397.8 530.1 L398.0 530.4 L398.2 530.7 L398.5 528.5 L398.8 529.3 L399.0 528.9 L399.2 529.7 L399.5 530.7 L399.8 530.5 L400.0 528.7 L400.2 529.1 L400.5 530.6 L400.8 530.3 L401.0 529.6 L401.2 529.9 L401.5 529.1 L401.8 530.8 L402.0 529.7 L402.2 530.9 L402.5 530.3 L402.8 529.0 L403.0 529.7 L403.2 529.4 L403.5 531.1 L403.8 530.4 L404.0 529.1 L404.2 529.4 L404.5 529.9 L404.8 530.2 L405.0 530.4 L405.2 530.0 L405.5 529.9 L405.8 529.1 L406.0 530.5 L406.2 530.0 L406.5 529.2 L406.8 530.3 L407.0 531.6 L407.2 529.4 L407.5 529.6 L407.8 530.9 L408.0 530.0 L408.2 530.0 L408.5 530.6 L408.8 530.0 L409.0 530.8 L409.2 530.7 L409.5 531.8 L409.8 531.9 L410.0 529.6 L410.2 530.9 L410.5 531.4 L410.8 531.7 L411.0 531.4 L411.2 531.1 L411.5 531.2 L411.8 530.5 L412.0 530.4 L412.2 531.6 L412.5 531.8 L412.8 532.0 L413.0 531.4 L413.2 530.5 L413.5 531.6 L413.8 531.6 L414.0 531.1 L414.2 531.4 L414.5 530.7 L414.8 531.2 L415.0 530.9 L415.2 530.1 L415.5 530.8 L415.8 530.8 L416.0 532.4 L416.2 531.2 L416.5 531.0 L416.8 530.7 L417.0 530.7 L417.2 531.0 L417.5 530.5 L417.8 530.2 L418.0 532.3 L418.2 531.3 L418.5 531.3 L418.8 531.7 L419.0 531.0 L419.2 530.7 L419.5 530.5 L419.8 531.1 L420.0 531.1 L420.0 531.5 L420.2 531.1 L420.5 532.0 L420.8 530.5 L421.0 531.8 L421.2 531.0 L421.5 529.7 L421.8 529.9 L422.0 530.8 L422.2 531.8 L422.5 530.2 L422.8 531.2 L423.0 530.3 L423.2 531.3 L423.5 529.3 L423.8 530.3 L424.0 531.2 L424.2 529.7 L424.5 529.6 L424.8 529.0 L425.0 529.3 L425.2 529.5 L425.5 530.5 L425.8 529.3 L426.0 529.7 L426.2 529.2 L426.5 530.1 L426.8 530.7 L427.0 530.1 L427.2 529.0 L427.5 530.2 L427.8 530.7 L428.0 529.8 L428.2 528.5 L428.5 530.2 L428.8 530.3 L429.0 529.0 L429.2 528.5 L429.5 528.5 L429.8 529.3 L430.0 530.1 L430.2 529.5 L430.5 530.1 L430.8 528.4 L431.0 528.6 L431.2 529.6 L431.5 529.3 L431.8 528.7 L432.0 529.3 L432.2 528.4 L432.5 527.7 L432.8 528.5 L433.0 527.6 L433.2 528.9 L433.5 528.2 L433.8 528.5 L434.0 528.7 L434.2 527.9 L434.5 528.3 L434.8 527.2 L435.0 529.3 L435.2 528.4 L435.5 529.4 L435.8 527.1 L436.0 528.4 L436.2 528.6 L436.5 527.6 L436.8 527.0 L437.0 527.1 L437.2 527.0 L437.5 528.5 L437.8 526.8 L438.0 528.5 L438.2 527.5 L438.5 527.8 L438.8 527.8 L439.0 527.7 L439.2 527.9 L439.5 527.7 L439.8 527.0 L440.0 528.0 L440.2 526.8 L440.5 527.8 L440.8 527.9 L441.0 527.9 L441.2 526.7 L441.5 527.8 L441.8 528.2 L442.0 526.9 L442.2 526.5 L442.5 527.0 L442.8 528.0 L443.0 526.0 L443.2 525.6 L443.5 526.7 L443.8 527.1 L444.0 527.3 L444.2 526.3 L444.5 527.8 L444.8 525.9 L445.0 527.1 L445.2 525.5 L445.5 525.3 L445.8 525.5 L446.0 525.3 L446.2 526.3 L446.5 526.4 L446.8 525.4 L447.0 527.2 L447.2 525.8 L447.5 525.2 L447.8 525.2 L448.0 526.5 L448.2 526.9 L448.5 525.1 L448.8 524.7 L449.0 526.4 L449.2 525.1 L449.5 526.8 L449.8 525.6 L450.0 525.9 L450.2 525.2 L450.5 526.2 L450.8 525.4 L451.0 525.0 L451.2 526.3 L451.5 524.4 L451.8 525.8 L452.0 524.2 L452.2 525.5 L452.5 524.9 L452.8 526.0 L453.0 524.0 L453.2 525.2 L453.5 524.8 L453.8 525.9 L454.0 525.9 L454.2 525.1 L454.5 524.1 L454.8 524.1 L455.0 524.1 L455.2 524.5 L455.5 524.0 L455.8 523.9 L456.0 525.1 L456.2 524.8 L456.5 523.9 L456.8 525.6 L457.0 523.7 L457.2 524.5 L457.5 523.4 L457.8 525.1 L458.0 525.0 L458.2 523.6 L458.5 524.7 L458.8 524.8 L459.0 523.5 L459.2 523.5 L459.5 523.9 L459.8 524.8 L460.0 523.0 L460.0 524.4 L460.2 524.3 L460.5 524.0 L460.8 524.4 L461.0 525.1 L461.2 523.6 L461.5 525.3 L461.8 524.0 L462.0 525.1 L462.2 525.4 L462.5 523.8 L462.8 525.5 L463.0 525.8 L463.2 524.2 L463.5 523.6 L463.8 523.9 L464.0 526.0 L464.2 523.8 L464.5 526.0 L464.8 524.2 L465.0 525.7 L465.2 524.2 L465.5 524.4 L465.8 525.7 L466.0 524.3 L466.2 525.0 L466.5 526.4 L466.8 526.0 L467.0 526.5 L467.2 526.7 L467.5 524.5 L467.8 525.1 L468.0 526.5 L468.2 526.3 L468.5 524.8 L468.8 525.9 L469.0 525.3 L469.2 525.9 L469.5 525.1 L469.8 525.0 L470.0 527.4 L470.2 525.8 L470.5 527.2 L470.8 525.5 L471.0 526.4 L471.2 525.6 L471.5 526.4 L471.8 525.8 L472.0 527.1 L472.2 525.9 L472.5 527.3 L472.8 526.8 L473.0 525.9 L473.2 526.6 L473.5 527.0 L473.8 528.0 L474.0 526.7 L474.2 526.5 L474.5 528.3 L474.8 528.2 L475.0 527.9 L475.2 526.8 L475.5 526.6 L475.8 526.9 L476.0 526.5 L476.2 526.5 L476.5 527.7 L476.8 527.5 L477.0 527.9 L477.2 527.5 L477.5 526.7 L477.8 528.4 L478.0 528.3 L478.2 528.1 L478.5 528.2 L478.8 528.6 L479.0 529.3 L479.2 529.1 L479.5 528.8 L479.8 528.1 L480.0 528.0 L480.2 528.3 L480.5 529.6 L480.8 528.3 L481.0 528.3 L481.2 528.5 L481.5 527.9 L481.8 530.0 L482.0 527.7 L482.2 529.2 L482.5 530.0 L482.8 528.4 L483.0 529.3 L483.2 528.8 L483.5 528.5 L483.8 528.5 L484.0 528.4 L484.2 530.2 L484.5 530.1 L484.8 530.4 L485.0 528.4 L485.2 530.0 L485.5 529.2 L485.8 530.0 L486.0 529.8 L486.2 529.3 L486.5 531.0 L486.8 528.7 L487.0 530.5 L487.2 530.8 L487.5 530.1 L487.8 530.3 L488.0 531.3 L488.2 529.6 L488.5 530.6 L488.8 530.9 L489.0 530.1 L489.2 530.9 L489.5 530.2 L489.8 530.6 L490.0 530.9 L490.0 530.9 L490.2 530.1 L490.5 530.8 L490.8 530.6 L491.0 529.8 L491.2 530.8 L491.5 529.9 L491.8 531.5 L492.0 530.4 L492.2 531.0 L492.5 530.6 L492.8 530.4 L493.0 529.8 L493.2 529.6 L493.5 531.5 L493.8 530.6 L494.0 530.6 L494.2 530.6 L494.5 531.3 L494.8 529.9 L495.0 529.7 L495.2 531.3 L495.5 530.4 L495.8 530.8 L496.0 531.3 L496.2 531.4 L496.5 531.4 L496.8 529.4 L497.0 530.2 L497.2 531.3 L497.5 531.3 L497.8 529.6 L498.0 529.7 L498.2 529.9 L498.5 529.5 L498.8 530.2 L499.0 531.2 L499.2 530.6 L499.5 530.4 L499.8 529.5 L500.0 530.2 L500.2 531.7 L500.5 531.0 L500.8 530.4 L501.0 530.4 L501.2 531.2 L501.5 531.1 L501.8 529.7 L502.0 530.9 L502.2 530.2 L502.5 530.5 L502.8 529.9 L503.0 530.2 L503.2 530.1 L503.5 530.2 L503.8 529.3 L504.0 529.8 L504.2 530.7 L504.5 529.4 L504.8 529.7 L505.0 531.0 L505.2 530.0 L505.5 530.1 L505.8 529.9 L506.0 531.3 L506.2 529.5 L506.5 530.8 L506.8 531.4 L507.0 529.8 L507.2 530.3 L507.5 531.2 L507.8 530.8 L508.0 530.2 L508.2 529.4 L508.5 530.4 L508.8 530.2 L509.0 531.0 L509.2 530.0 L509.5 530.3 L509.8 530.9 L510.0 531.2 L510.2 530.1 L510.5 530.2 L510.8 530.7 L511.0 531.5 L511.2 529.8 L511.5 531.6 L511.8 531.0 L512.0 530.2 L512.2 530.9 L512.5 530.1 L512.8 529.5 L513.0 531.1 L513.2 530.2 L513.5 530.6 L513.8 530.5 L514.0 531.5 L514.2 531.1 L514.5 529.4 L514.8 530.7 L515.0 530.4 L515.2 530.4 L515.5 531.3 L515.8 530.3 L516.0 530.4 L516.2 531.4 L516.5 530.4 L516.8 530.5 L517.0 530.5 L517.2 531.3 L517.5 530.9 L517.8 531.1 L518.0 530.3 L518.2 529.4 L518.5 530.9 L518.8 530.6 L519.0 531.1 L519.2 531.1 L519.5 529.6 L519.8 529.8 L520.0 529.5 L520.2 531.3 L520.5 529.5 L520.8 529.5 L521.0 531.1 L521.2 530.7 L521.5 529.4 L521.5 530.0 L521.5 512.0 L521.8 530.9 L522.0 531.0 L522.0 530.0 L522.2 530.5 L522.5 529.4 L522.8 531.0 L523.0 530.3 L523.2 530.7 L523.5 531.7 L523.8 531.3 L524.0 531.4 L524.2 529.6 L524.5 530.1 L524.8 530.5 L525.0 529.3 L525.2 531.7 L525.5 530.0 L525.8 529.9 L526.0 530.1 L526.2 529.9 L526.5 531.4 L526.8 530.6 L527.0 530.5 L527.2 530.3 L527.5 529.4 L527.8 530.0 L528.0 531.4 L528.2 531.2 L528.5 531.4 L528.8 529.9 L529.0 529.8 L529.2 529.4 L529.5 530.6 L529.8 530.2 L530.0 530.4 L530.2 530.5 L530.5 530.7 L530.8 530.2 L531.0 531.2 L531.2 529.8 L531.5 531.5 L531.8 530.6 L532.0 529.4 L532.2 530.1 L532.5 530.6 L532.8 530.3 L533.0 530.7 L533.0 530.0 L533.0 513.5 L533.2 530.1 L533.5 530.0 L533.8 531.2 L534.0 530.0 L534.0 530.0 L534.2 531.0 L534.5 531.2 L534.8 530.7 L535.0 530.4 L535.2 531.5 L535.5 530.4 L535.8 531.4 L536.0 529.4 L536.2 530.3 L536.5 530.8 L536.8 529.4 L537.0 531.4 L537.2 529.5 L537.5 530.7 L537.8 529.7 L538.0 531.5 L538.2 530.6 L538.5 531.2 L538.8 530.5 L539.0 530.9 L539.2 530.9 L539.5 530.0 L539.8 529.8 L540.0 531.3 L540.2 529.6 L540.5 531.5 L540.8 529.8 L541.0 529.5 L542.0 530.0 L542.0 400.3 L542.0 515.0 L546.0 512.0 L546.0 510.9 L546.2 513.1 L546.5 513.9 L546.8 512.9 L547.0 513.9 L547.2 513.2 L547.5 515.3 L547.8 515.1 L548.0 514.1 L548.2 514.2 L548.5 516.3 L548.8 514.9 L549.0 517.4 L549.2 516.3 L549.5 516.6 L549.8 517.8 L550.0 517.5 L550.2 518.5 L550.5 517.9 L550.8 520.2 L551.0 519.0 L551.2 520.8 L551.5 519.3 L551.8 521.4 L552.0 522.2 L552.2 521.1 L552.5 520.5 L552.8 521.8 L553.0 522.9 L553.2 522.2 L553.5 523.4 L553.8 522.6 L554.0 523.9 L554.2 525.0 L554.5 524.6 L554.8 525.6 L555.0 524.5 L555.2 526.7 L555.5 525.3 L555.8 527.7 L556.0 528.3 L556.2 528.5 L556.5 527.8 L556.8 527.6 L557.0 528.1 L557.2 529.5 L557.5 529.2 L557.8 530.7 L558.0 528.9 L558.0 530.0 L558.2 531.0 L558.5 530.4 L558.8 530.3 L559.0 529.2 L559.2 529.4 L559.5 529.8 L559.8 531.5 L560.0 531.4 L560.2 529.9 L560.5 531.7 L560.8 529.5 L561.0 531.0 L561.2 532.0 L561.5 530.5 L561.8 532.1 L562.0 531.4 L562.2 529.9 L562.5 530.7 L562.8 531.1 L563.0 530.6 L563.2 531.9 L563.5 530.5 L563.8 532.2 L564.0 531.0 L564.2 530.4 L564.5 531.8 L564.8 530.6 L565.0 531.9 L565.2 532.6 L565.5 532.1 L565.8 531.8 L566.0 530.8 L566.2 532.1 L566.5 531.1 L566.8 532.6 L567.0 531.3 L567.2 532.5 L567.5 532.0 L567.8 532.1 L568.0 532.9 L568.2 531.7 L568.5 531.8 L568.8 533.8 L569.0 532.3 L569.2 533.7 L569.5 533.8 L569.8 532.9 L570.0 532.1 L570.2 532.0 L570.5 534.1 L570.8 532.2 L571.0 533.2 L571.2 533.4 L571.5 532.4 L571.8 533.4 L572.0 532.6 L572.2 533.7 L572.5 533.6 L572.8 533.3 L573.0 533.0 L573.2 533.6 L573.5 533.1 L573.8 533.0 L574.0 533.3 L574.2 535.0 L574.5 534.1 L574.8 535.2 L575.0 533.0 L575.2 535.5 L575.5 534.3 L575.8 535.2 L576.0 534.7 L576.2 535.1 L576.5 533.9 L576.8 535.3 L577.0 533.8 L577.2 534.2 L577.5 533.7 L577.8 534.7 L578.0 535.0 L578.2 534.5 L578.5 536.1 L578.8 534.1 L579.0 535.5 L579.2 534.6 L579.5 535.6 L579.8 536.2 L580.0 536.0 L580.2 534.4 L580.5 535.0 L580.8 535.9 L581.0 537.0 L581.2 534.6 L581.5 536.2 L581.8 536.4 L582.0 536.8 L583.0 536.0 L583.0 440.0 L583.0 524.0 L585.5 524.0 L587.0 535.0 L587.0 534.6 L587.2 535.7 L587.5 534.9 L587.8 536.0 L588.0 533.8 L588.2 536.1 L588.5 534.8 L588.8 534.8 L589.0 534.0 L589.2 534.4 L589.5 535.6 L589.8 535.4 L590.0 534.2 L590.2 534.6 L590.5 534.1 L590.8 534.3 L591.0 534.3 L591.2 534.6 L591.5 536.1 L591.8 536.2 L592.0 535.7 L592.2 535.0 L592.5 535.0 L592.8 535.7 L593.0 536.0 L593.2 535.6 L593.5 535.3 L593.8 534.3 L594.0 535.3 L594.2 535.8 L594.5 535.7 L594.8 534.0 L595.0 535.5 L595.2 534.6 L595.5 534.2 L595.8 536.1 L596.0 535.4 L596.2 535.6 L596.5 534.1 L596.8 535.8 L597.0 536.0 L597.2 536.0 L597.5 535.6 L597.8 535.8 L598.0 535.7 L600.7 527.0" stroke="#ff1a1a" stroke-width="1.3" fill="none" stroke-linejoin="round"/><path d="M244.2 574 V405 M542 574 V434 M583 574 V468" stroke="#ff9a0a" stroke-width="1.7"/><path d="M236 503.7 H600.7" stroke="#8fd020" stroke-width="1.3"/><path d="M239.5 510.4 H306.6 V536 V510.4 H600.7" stroke="#1a1af5" stroke-width="1.4" fill="none"/><path d="M239.0 559.5 L239.3 559.1 L239.5 560.1 L239.8 560.0 L240.0 560.3 L240.3 558.8 L240.5 560.5 L240.8 559.4 L241.0 560.5 L241.3 558.3 L241.5 560.5 L241.8 560.0 L242.0 558.7 L242.3 560.2 L242.5 558.6 L242.8 558.5 L243.0 559.2 L243.3 558.6 L243.5 559.3 L243.8 560.4 L244.0 559.8 L244.3 559.8 L244.5 559.0 L244.8 560.0 L245.0 560.1 L245.3 559.8 L245.5 560.4 L245.8 560.1 L246.0 559.1 L246.3 558.2 L246.5 559.7 L246.8 560.2 L247.0 558.9 L247.3 559.5 L247.5 560.2 L247.8 560.1 L248.0 558.0 L248.3 559.3 L248.5 558.0 L248.8 558.3 L249.0 560.1 L249.3 559.1 L249.5 559.6 L249.8 559.2 L250.0 558.9 L250.3 558.6 L250.5 558.9 L250.8 560.2 L251.0 559.6 L251.3 558.8 L251.5 558.2 L251.8 558.7 L252.0 559.8 L252.3 559.1 L252.5 559.7 L252.8 560.1 L253.0 558.3 L253.3 559.8 L253.5 558.1 L253.8 560.1 L254.0 558.5 L254.3 558.7 L254.5 560.5 L254.8 558.9 L255.0 558.6 L255.3 560.3 L255.5 559.6 L255.8 560.3 L256.0 559.0 L256.3 559.3 L256.5 560.5 L256.8 559.3 L257.0 560.6 L257.3 558.5 L257.5 560.2 L257.8 558.4 L258.0 559.4 L258.3 558.0 L258.5 558.5 L258.8 560.5 L259.0 559.2 L259.3 560.1 L259.5 558.7 L259.8 558.9 L260.0 558.3 L260.3 559.4 L260.5 560.2 L260.8 559.3 L261.0 559.0 L261.3 560.4 L261.5 560.3 L261.8 559.7 L262.0 558.2 L262.3 559.6 L262.5 559.2 L262.8 560.5 L263.0 558.9 L263.3 559.7 L263.5 559.6 L263.8 559.0 L264.0 559.4 L264.3 559.8 L264.5 560.4 L264.8 559.3 L265.0 558.9 L265.3 560.5 L265.5 558.1 L265.8 560.2 L266.0 559.8 L266.3 559.4 L266.5 559.2 L266.8 560.0 L267.0 560.3 L267.3 559.9 L267.5 559.9 L267.8 558.1 L268.0 558.8 L268.3 558.4 L268.5 560.5 L268.8 560.3 L269.0 558.4 L269.3 559.5 L269.5 559.5 L269.8 558.1 L270.0 559.0 L270.3 559.9 L270.5 559.7 L270.8 558.7 L271.0 560.0 L271.3 558.8 L271.5 559.4 L271.8 559.1 L272.0 560.5 L272.3 559.7 L272.5 560.1 L272.8 559.8 L273.0 559.0 L273.3 560.5 L273.5 559.8 L273.8 559.8 L274.0 558.7 L274.3 558.4 L274.5 559.5 L274.8 560.1 L275.0 560.1 L275.3 558.9 L275.5 558.4 L275.8 559.3 L276.0 560.3 L276.3 558.4 L276.5 559.9 L276.8 558.4 L277.0 558.8 L277.3 558.1 L277.5 558.8 L277.8 559.0 L278.0 560.5 L278.3 560.5 L278.5 558.5 L278.8 558.8 L279.0 560.5 L279.3 558.5 L279.5 558.8 L279.8 559.1 L280.0 558.3 L280.3 558.7 L280.5 559.0 L280.8 559.0 L281.0 560.5 L281.3 558.7 L281.5 558.5 L281.8 560.4 L282.0 559.2 L282.3 560.2 L282.5 559.7 L282.8 560.0 L283.0 558.8 L283.3 558.4 L283.5 560.0 L283.8 559.2 L284.0 559.5 L284.3 559.7 L284.5 560.0 L284.8 558.7 L285.0 558.9 L285.3 560.4 L285.5 559.4 L285.8 558.7 L286.0 559.6 L286.3 558.7 L286.5 560.0 L286.8 558.1 L287.0 560.1 L287.3 559.5 L287.5 558.9 L287.8 560.4 L288.0 558.7 L288.3 558.6 L288.5 558.2 L288.8 559.4 L289.0 560.0 L289.3 559.8 L289.5 559.1 L289.8 560.1 L290.0 558.3 L290.3 558.8 L290.5 559.7 L290.8 560.5 L291.0 559.6 L291.3 559.8 L291.5 560.0 L291.8 559.0 L292.0 560.4 L292.3 559.9 L292.5 558.9 L292.8 559.0 L293.0 560.1 L293.3 558.9 L293.5 558.5 L293.8 560.3 L294.0 559.4 L294.3 559.4 L294.5 559.7 L294.8 560.3 L295.0 558.3 L295.3 558.9 L295.5 558.2 L295.8 559.1 L296.0 559.3 L296.3 560.2 L296.5 559.7 L296.8 559.5 L297.0 559.0 L297.3 559.5 L297.5 558.7 L297.8 560.2 L298.0 560.1 L298.3 560.2 L298.5 558.4 L298.8 559.7 L299.0 560.0 L299.3 559.3 L299.5 560.3 L299.8 560.3 L300.0 559.9 L300.3 560.1 L300.5 559.7 L300.8 560.3 L301.0 558.3 L301.3 559.8 L301.5 559.8 L301.8 559.6 L302.0 558.7 L302.3 558.2 L302.5 559.6 L302.8 560.1 L303.0 558.7 L303.3 558.6 L303.5 558.6 L303.8 558.2 L304.0 559.8 L304.3 560.5 L304.5 560.1 L304.8 558.9 L305.0 559.8 L305.3 558.2 L305.5 560.2 L305.8 558.8 L306.0 558.0 L306.3 559.6 L306.5 558.4 L306.8 558.7 L307.0 558.2 L307.3 559.2 L307.5 559.4 L307.8 560.1 L308.0 558.1 L308.3 560.2 L308.5 558.3 L308.8 558.6 L309.0 559.6 L309.3 558.9 L309.5 558.9 L309.8 559.5 L310.0 558.6 L310.3 560.1 L310.5 558.5 L310.8 560.2 L311.0 560.1 L311.3 559.4 L311.5 558.1 L311.8 560.0 L312.0 558.1 L312.3 559.3 L312.5 559.1 L312.8 558.2 L313.0 559.6 L313.3 559.9 L313.5 559.5 L313.8 559.0 L314.0 559.3 L314.3 559.5 L314.5 558.6 L314.8 560.3 L315.0 560.6 L315.3 560.1 L315.5 560.5 L315.8 558.9 L316.0 560.6 L316.3 558.2 L316.5 559.2 L316.8 558.3 L317.0 559.2 L317.3 559.8 L317.5 559.8 L317.8 559.2 L318.0 558.9 L318.3 558.5 L318.5 559.0 L318.8 558.7 L319.0 558.5 L319.3 559.9 L319.5 559.3 L319.8 559.1 L320.0 558.5 L320.3 559.8 L320.5 558.5 L320.8 558.7 L321.0 559.5 L321.3 559.8 L321.5 560.5 L321.8 559.9 L322.0 560.5 L322.3 560.4 L322.5 559.9 L322.8 559.9 L323.0 558.2 L323.3 558.5 L323.5 558.0 L323.8 560.2 L324.0 559.9 L324.3 559.6 L324.5 558.7 L324.8 558.9 L325.0 558.4 L325.3 559.6 L325.5 560.6 L325.8 558.8 L326.0 558.1 L326.3 558.5 L326.5 558.9 L326.8 560.3 L327.0 560.1 L327.3 559.2 L327.5 558.3 L327.8 558.3 L328.0 558.4 L328.3 560.0 L328.5 559.2 L328.8 560.6 L329.0 560.4 L329.3 560.1 L329.6 559.2 L329.8 560.1 L330.1 558.3 L330.3 558.3 L330.6 559.5 L330.8 559.3 L331.1 558.5 L331.3 558.7 L331.6 558.1 L331.8 560.4 L332.1 559.8 L332.3 560.5 L332.6 560.5 L332.8 559.1 L333.1 559.9 L333.3 559.0 L333.6 560.1 L333.8 560.2 L334.1 558.3 L334.3 558.0 L334.6 558.6 L334.8 559.5 L335.1 559.0 L335.3 558.0 L335.6 560.2 L335.8 560.0 L336.1 559.2 L336.3 558.1 L336.6 560.3 L336.8 559.4 L337.1 558.2 L337.3 558.8 L337.6 559.6 L337.8 560.3 L338.1 559.3 L338.3 559.7 L338.6 558.5 L338.8 558.6 L339.1 560.4 L339.3 559.0 L339.6 558.3 L339.8 559.5 L340.1 558.3 L340.3 558.5 L340.6 559.2 L340.8 559.5 L341.1 559.7 L341.3 559.8 L341.6 559.1 L341.8 558.2 L342.1 559.9 L342.3 558.1 L342.6 559.2 L342.8 559.0 L343.1 559.7 L343.3 559.9 L343.6 558.6 L343.8 559.7 L344.1 559.8 L344.3 559.2 L344.6 558.4 L344.8 560.4 L345.1 559.6 L345.3 558.2 L345.6 558.6 L345.8 560.6 L346.1 558.6 L346.3 559.0 L346.6 560.0 L346.8 560.1 L347.1 559.6 L347.3 559.9 L347.6 558.1 L347.8 558.2 L348.1 560.5 L348.3 560.1 L348.6 558.1 L348.8 558.1 L349.1 558.6 L349.3 560.4 L349.6 558.6 L349.8 559.7 L350.1 560.4 L350.3 559.7 L350.6 560.4 L350.8 558.7 L351.1 558.4 L351.3 558.0 L351.6 560.0 L351.8 558.3 L352.1 560.5 L352.3 559.8 L352.6 558.5 L352.8 560.1 L353.1 558.4 L353.3 559.3 L353.6 558.3 L353.8 560.0 L354.1 560.3 L354.3 560.4 L354.6 558.0 L354.8 560.2 L355.1 559.4 L355.3 560.1 L355.6 559.3 L355.8 559.6 L356.1 559.5 L356.3 560.1 L356.6 558.2 L356.8 558.1 L357.1 559.4 L357.3 558.8 L357.6 559.0 L357.8 558.0 L358.1 559.9 L358.3 558.1 L358.6 560.2 L358.8 560.1 L359.1 559.2 L359.3 558.3 L359.6 559.7 L359.8 558.5 L360.1 559.1 L360.3 558.3 L360.6 560.5 L360.8 559.4 L361.1 558.9 L361.3 558.2 L361.6 559.9 L361.8 560.2 L362.1 560.2 L362.3 558.3 L362.6 559.0 L362.8 558.8 L363.1 560.0 L363.3 558.4 L363.6 559.6 L363.8 560.5 L364.1 560.0 L364.3 558.0 L364.6 558.2 L364.8 558.3 L365.1 559.8 L365.3 559.6 L365.6 559.4 L365.8 559.2 L366.1 559.1 L366.3 559.6 L366.6 559.7 L366.8 560.4 L367.1 559.9 L367.3 560.1 L367.6 560.4 L367.8 560.2 L368.1 559.9 L368.3 558.1 L368.6 559.8 L368.8 560.2 L369.1 559.1 L369.3 560.3 L369.6 558.5 L369.8 560.5 L370.1 559.1 L370.3 559.8 L370.6 558.7 L370.8 558.8 L371.1 558.9 L371.3 558.8 L371.6 558.2 L371.8 559.2 L372.1 560.6 L372.3 559.7 L372.6 560.4 L372.8 560.0 L373.1 560.2 L373.3 560.6 L373.6 560.0 L373.8 558.7 L374.1 558.6 L374.3 559.1 L374.6 558.1 L374.8 558.6 L375.1 560.3 L375.3 560.4 L375.6 558.9 L375.8 560.0 L376.1 560.0 L376.3 560.3 L376.6 560.1 L376.8 559.4 L377.1 558.3 L377.3 560.1 L377.6 558.8 L377.8 559.6 L378.1 559.0 L378.3 559.4 L378.6 560.5 L378.8 558.4 L379.1 559.4 L379.3 559.7 L379.6 559.4 L379.8 560.4 L380.1 559.1 L380.3 560.4 L380.6 559.8 L380.8 560.5 L381.1 558.2 L381.3 558.6 L381.6 558.7 L381.8 560.4 L382.1 558.0 L382.3 558.7 L382.6 559.9 L382.8 560.6 L383.1 558.5 L383.3 559.1 L383.6 559.8 L383.8 559.8 L384.1 559.9 L384.3 560.0 L384.6 558.6 L384.8 558.7 L385.1 558.1 L385.3 559.8 L385.6 558.5 L385.8 558.7 L386.1 560.5 L386.3 559.7 L386.6 559.5 L386.8 559.7 L387.1 559.6 L387.3 559.8 L387.6 558.8 L387.8 558.2 L388.1 558.2 L388.3 558.0 L388.6 558.9 L388.8 558.4 L389.1 558.3 L389.3 559.3 L389.6 560.5 L389.8 559.8 L390.1 558.7 L390.3 560.0 L390.6 558.5 L390.8 558.3 L391.1 558.8 L391.3 559.1 L391.6 559.8 L391.8 559.2 L392.1 559.9 L392.3 558.2 L392.6 560.4 L392.8 558.9 L393.1 560.2 L393.3 558.1 L393.6 560.2 L393.8 558.6 L394.1 560.2 L394.3 560.1 L394.6 559.7 L394.8 558.7 L395.1 558.0 L395.3 558.5 L395.6 560.4 L395.8 558.4 L396.1 559.7 L396.3 559.5 L396.6 559.7 L396.8 558.5 L397.1 558.4 L397.3 558.3 L397.6 560.6 L397.8 559.0 L398.1 559.7 L398.3 559.5 L398.6 558.6 L398.8 558.2 L399.1 558.0 L399.3 560.2 L399.6 558.3 L399.8 560.5 L400.1 558.9 L400.3 559.9 L400.6 558.4 L400.8 560.0 L401.1 558.7 L401.3 559.0 L401.6 559.4 L401.8 558.3 L402.1 558.6 L402.3 560.1 L402.6 558.7 L402.8 559.0 L403.1 560.0 L403.3 558.6 L403.6 558.5 L403.8 558.6 L404.1 559.0 L404.3 558.9 L404.6 559.7 L404.8 559.2 L405.1 560.3 L405.3 558.1 L405.6 559.7 L405.8 560.2 L406.1 558.6 L406.3 558.1 L406.6 559.1 L406.8 558.3 L407.1 559.2 L407.3 559.8 L407.6 558.2 L407.8 558.3 L408.1 559.2 L408.3 558.5 L408.6 558.6 L408.8 559.1 L409.1 558.3 L409.3 558.2 L409.6 558.9 L409.8 559.2 L410.1 560.4 L410.3 559.4 L410.6 558.2 L410.8 558.6 L411.1 559.9 L411.3 559.5 L411.6 560.3 L411.8 560.5 L412.1 560.2 L412.3 558.3 L412.6 560.5 L412.8 559.4 L413.1 558.6 L413.3 558.4 L413.6 560.2 L413.8 558.6 L414.1 558.2 L414.3 558.7 L414.6 560.4 L414.8 559.2 L415.1 559.9 L415.3 558.2 L415.6 559.2 L415.8 558.8 L416.1 558.5 L416.3 559.7 L416.6 558.9 L416.8 558.3 L417.1 560.6 L417.3 559.3 L417.6 558.5 L417.8 558.0 L418.1 559.7 L418.3 559.3 L418.6 558.1 L418.8 559.2 L419.1 559.9 L419.3 559.4 L419.6 558.6 L419.9 559.3 L420.1 559.6 L420.4 559.7 L420.6 558.4 L420.9 560.1 L421.1 560.5 L421.4 559.9 L421.6 560.2 L421.9 559.0 L422.1 560.3 L422.4 558.5 L422.6 558.6 L422.9 559.6 L423.1 560.3 L423.4 558.2 L423.6 558.6 L423.9 558.1 L424.1 559.1 L424.4 558.4 L424.6 558.5 L424.9 559.9 L425.1 559.5 L425.4 560.4 L425.6 559.0 L425.9 559.8 L426.1 558.0 L426.4 560.5 L426.6 558.6 L426.9 559.2 L427.1 559.3 L427.4 560.5 L427.6 559.3 L427.9 560.6 L428.1 559.6 L428.4 558.6 L428.6 560.2 L428.9 558.5 L429.1 560.6 L429.4 559.2 L429.6 558.6 L429.9 560.5 L430.1 558.8 L430.4 559.1 L430.6 558.9 L430.9 559.7 L431.1 558.1 L431.4 559.0 L431.6 558.4 L431.9 560.2 L432.1 558.0 L432.4 559.6 L432.6 558.7 L432.9 559.2 L433.1 559.5 L433.4 559.9 L433.6 558.4 L433.9 558.6 L434.1 558.3 L434.4 560.5 L434.6 558.4 L434.9 558.4 L435.1 559.4 L435.4 559.5 L435.6 560.3 L435.9 558.1 L436.1 558.6 L436.4 558.4 L436.6 559.5 L436.9 559.2 L437.1 559.1 L437.4 560.3 L437.6 559.7 L437.9 560.2 L438.1 560.5 L438.4 558.7 L438.6 560.4 L438.9 559.1 L439.1 558.1 L439.4 560.4 L439.6 558.3 L439.9 558.0 L440.1 558.8 L440.4 558.8 L440.6 560.5 L440.9 560.3 L441.1 559.1 L441.4 559.4 L441.6 560.2 L441.9 560.1 L442.1 559.7 L442.4 559.3 L442.6 558.3 L442.9 558.6 L443.1 559.7 L443.4 559.5 L443.6 560.1 L443.9 560.3 L444.1 560.5 L444.4 558.5 L444.6 558.2 L444.9 560.3 L445.1 559.5 L445.4 558.5 L445.6 559.8 L445.9 558.7 L446.1 558.6 L446.4 559.0 L446.6 559.4 L446.9 559.8 L447.1 558.2 L447.4 559.9 L447.6 559.6 L447.9 559.2 L448.1 559.7 L448.4 560.1 L448.6 558.0 L448.9 559.2 L449.1 559.8 L449.4 559.8 L449.6 559.7 L449.9 558.5 L450.1 560.5 L450.4 560.0 L450.6 558.6 L450.9 559.1 L451.1 560.5 L451.4 558.5 L451.6 559.1 L451.9 560.5 L452.1 560.3 L452.4 558.6 L452.6 559.9 L452.9 558.9 L453.1 559.7 L453.4 560.0 L453.6 558.3 L453.9 558.6 L454.1 558.6 L454.4 558.7 L454.6 558.1 L454.9 558.4 L455.1 559.1 L455.4 559.1 L455.6 558.2 L455.9 559.5 L456.1 560.5 L456.4 559.5 L456.6 558.9 L456.9 559.8 L457.1 559.1 L457.4 558.5 L457.6 559.3 L457.9 558.0 L458.1 559.8 L458.4 558.4 L458.6 559.0 L458.9 560.5 L459.1 560.0 L459.4 560.2 L459.6 559.7 L459.9 559.6 L460.1 559.8 L460.4 560.5 L460.6 558.5 L460.9 560.0 L461.1 558.8 L461.4 558.7 L461.6 560.1 L461.9 559.6 L462.1 560.2 L462.4 560.3 L462.6 559.5 L462.9 558.5 L463.1 558.0 L463.4 559.4 L463.6 559.9 L463.9 558.7 L464.1 558.2 L464.4 558.0 L464.6 558.5 L464.9 559.8 L465.1 558.0 L465.4 558.6 L465.6 558.7 L465.9 559.8 L466.1 560.6 L466.4 558.1 L466.6 558.3 L466.9 560.4 L467.1 560.5 L467.4 558.4 L467.6 558.9 L467.9 559.4 L468.1 558.8 L468.4 559.1 L468.6 559.2 L468.9 558.7 L469.1 558.1 L469.4 558.2 L469.6 558.4 L469.9 558.2 L470.1 559.6 L470.4 559.8 L470.6 558.7 L470.9 560.1 L471.1 559.9 L471.4 558.9 L471.6 559.3 L471.9 558.5 L472.1 560.4 L472.4 559.5 L472.6 558.1 L472.9 558.4 L473.1 559.8 L473.4 559.0 L473.6 559.9 L473.9 558.6 L474.1 560.1 L474.4 560.1 L474.6 558.2 L474.9 559.5 L475.1 558.5 L475.4 559.8 L475.6 560.1 L475.9 560.1 L476.1 558.6 L476.4 558.2 L476.6 559.7 L476.9 559.5 L477.1 558.4 L477.4 558.5 L477.6 559.5 L477.9 558.3 L478.1 559.6 L478.4 558.6 L478.6 558.7 L478.9 559.1 L479.1 559.4 L479.4 559.9 L479.6 558.1 L479.9 559.9 L480.1 558.6 L480.4 558.8 L480.6 559.7 L480.9 559.8 L481.1 559.6 L481.4 560.3 L481.6 558.5 L481.9 558.8 L482.1 559.7 L482.4 558.7 L482.6 558.4 L482.9 558.6 L483.1 560.0 L483.4 560.2 L483.6 559.9 L483.9 560.5 L484.1 560.1 L484.4 558.8 L484.6 558.8 L484.9 559.9 L485.1 558.1 L485.4 559.6 L485.6 558.2 L485.9 558.1 L486.1 559.3 L486.4 558.4 L486.6 560.4 L486.9 560.3 L487.1 559.2 L487.4 558.5 L487.6 558.3 L487.9 559.3 L488.1 559.4 L488.4 558.9 L488.6 559.9 L488.9 559.4 L489.1 560.0 L489.4 558.3 L489.6 558.2 L489.9 559.0 L490.1 559.3 L490.4 558.7 L490.6 559.7 L490.9 558.6 L491.1 558.8 L491.4 559.2 L491.6 559.9 L491.9 560.0 L492.1 559.0 L492.4 559.2 L492.6 560.4 L492.9 560.4 L493.1 559.6 L493.4 558.3 L493.6 559.2 L493.9 559.7 L494.1 558.7 L494.4 558.1 L494.6 560.6 L494.9 560.4 L495.1 558.3 L495.4 559.2 L495.6 559.6 L495.9 558.8 L496.1 558.2 L496.4 560.0 L496.6 560.0 L496.9 559.1 L497.1 558.2 L497.4 559.0 L497.6 558.2 L497.9 560.5 L498.1 558.1 L498.4 558.7 L498.6 560.0 L498.9 558.4 L499.1 558.3 L499.4 558.2 L499.6 558.4 L499.9 559.4 L500.1 560.2 L500.4 558.4 L500.6 558.5 L500.9 560.0 L501.1 559.1 L501.4 558.9 L501.6 558.3 L501.9 558.6 L502.1 560.5 L502.4 558.3 L502.6 558.7 L502.9 559.9 L503.1 560.3 L503.4 560.4 L503.6 559.2 L503.9 560.5 L504.1 559.6 L504.4 558.8 L504.6 559.2 L504.9 559.9 L505.1 559.9 L505.4 558.3 L505.6 558.5 L505.9 560.5 L506.1 558.3 L506.4 560.1 L506.6 558.9 L506.9 558.6 L507.1 558.7 L507.4 559.2 L507.6 560.6 L507.9 558.4 L508.1 560.2 L508.4 558.8 L508.6 558.4 L508.9 559.9 L509.1 558.9 L509.4 558.5 L509.6 559.1 L509.9 560.1 L510.1 560.2 L510.4 559.5 L510.7 558.0 L510.9 560.0 L511.2 559.6 L511.4 560.3 L511.7 560.5 L511.9 558.9 L512.2 560.2 L512.4 560.1 L512.7 558.7 L512.9 559.0 L513.2 559.0 L513.4 558.9 L513.7 559.0 L513.9 558.3 L514.2 558.6 L514.4 560.4 L514.7 559.1 L514.9 559.7 L515.2 560.3 L515.4 560.0 L515.7 558.6 L515.9 560.4 L516.2 560.1 L516.4 560.6 L516.7 559.9 L516.9 560.0 L517.2 560.1 L517.4 558.7 L517.7 559.7 L517.9 559.0 L518.2 560.2 L518.4 558.3 L518.7 559.4 L518.9 558.9 L519.2 560.1 L519.4 558.9 L519.7 560.2 L519.9 560.2 L520.2 560.3 L520.4 558.4 L520.7 560.4 L520.9 559.9 L521.2 559.8 L521.4 559.7 L521.7 558.1 L521.9 560.3 L522.2 559.4 L522.4 559.2 L522.7 558.9 L522.9 560.0 L523.2 560.0 L523.4 560.3 L523.7 558.6 L523.9 558.9 L524.2 558.6 L524.4 558.3 L524.7 558.9 L524.9 558.1 L525.2 560.1 L525.4 558.6 L525.7 558.2 L525.9 558.2 L526.2 559.9 L526.4 558.5 L526.7 559.2 L526.9 559.0 L527.2 560.1 L527.4 560.5 L527.7 558.8 L527.9 559.6 L528.2 560.3 L528.4 559.2 L528.7 560.3 L528.9 559.9 L529.2 558.8 L529.4 560.3 L529.7 559.5 L529.9 558.3 L530.2 559.5 L530.4 560.2 L530.7 559.3 L530.9 559.3 L531.2 559.1 L531.4 560.3 L531.7 559.7 L531.9 558.5 L532.2 558.9 L532.4 558.9 L532.7 560.5 L532.9 559.8 L533.2 558.3 L533.4 560.4 L533.7 558.1 L533.9 559.5 L534.2 559.1 L534.4 559.9 L534.7 559.1 L534.9 558.2 L535.2 559.4 L535.4 560.1 L535.7 560.1 L535.9 558.9 L536.2 558.6 L536.4 559.9 L536.7 560.1 L536.9 558.6 L537.2 560.3 L537.4 560.6 L537.7 559.1 L537.9 559.0 L538.2 559.8 L538.4 560.4 L538.7 558.5 L538.9 558.8 L539.2 558.9 L539.4 559.9 L539.7 558.5 L539.9 559.4 L540.2 559.3 L540.4 559.7 L540.7 558.4 L540.9 560.5 L541.2 560.6 L541.4 559.5 L541.7 560.1 L541.9 558.5 L542.2 560.4 L542.4 559.4 L542.7 560.0 L542.9 560.3 L543.2 558.9 L543.4 560.4 L543.7 558.5 L543.9 558.1 L544.2 559.3 L544.4 560.3 L544.7 560.3 L544.9 560.5 L545.2 559.3 L545.4 560.4 L545.7 559.5 L545.9 558.4 L546.2 559.6 L546.4 560.1 L546.7 559.1 L546.9 559.6 L547.2 558.7 L547.4 558.7 L547.7 559.1 L547.9 559.3 L548.2 559.2 L548.4 558.2 L548.7 558.0 L548.9 558.9 L549.2 559.9 L549.4 559.9 L549.7 558.6 L549.9 558.7 L550.2 559.3 L550.4 558.5 L550.7 559.6 L550.9 560.4 L551.2 558.5 L551.4 559.5 L551.7 559.9 L551.9 559.9 L552.2 559.9 L552.4 559.8 L552.7 558.7 L552.9 560.2 L553.2 560.4 L553.4 558.1 L553.7 560.5 L553.9 559.2 L554.2 558.2 L554.4 558.2 L554.7 560.1 L554.9 559.8 L555.2 558.4 L555.4 559.2 L555.7 559.7 L555.9 560.6 L556.2 558.9 L556.4 560.0 L556.7 558.6 L556.9 558.5 L557.2 558.4 L557.4 559.1 L557.7 559.6 L557.9 558.8 L558.2 558.4 L558.4 558.6 L558.7 558.2 L558.9 558.5 L559.2 558.8 L559.4 559.3 L559.7 558.5 L559.9 559.2 L560.2 559.1 L560.4 560.5 L560.7 559.3 L560.9 560.5 L561.2 559.2 L561.4 558.5 L561.7 559.5 L561.9 558.4 L562.2 558.4 L562.4 558.2 L562.7 559.8 L562.9 560.5 L563.2 559.0 L563.4 558.9 L563.7 559.1 L563.9 558.9 L564.2 559.8 L564.4 559.0 L564.7 558.4 L564.9 560.2 L565.2 559.5 L565.4 558.0 L565.7 560.2 L565.9 559.9 L566.2 558.9 L566.4 559.6 L566.7 560.4 L566.9 559.0 L567.2 559.1 L567.4 558.8 L567.7 559.4 L567.9 559.7 L568.2 559.9 L568.4 560.5 L568.7 558.4 L568.9 559.0 L569.2 560.2 L569.4 560.1 L569.7 559.5 L569.9 559.8 L570.2 558.9 L570.4 560.5 L570.7 559.4 L570.9 559.0 L571.2 558.5 L571.4 558.3 L571.7 560.3 L571.9 560.1 L572.2 558.1 L572.4 558.8 L572.7 559.2 L572.9 559.3 L573.2 558.9 L573.4 560.3 L573.7 558.9 L573.9 559.4 L574.2 560.4 L574.4 559.7 L574.7 559.2 L574.9 558.9 L575.2 559.0 L575.4 559.6 L575.7 560.0 L575.9 558.7 L576.2 559.0 L576.4 559.0 L576.7 558.9 L576.9 560.4 L577.2 559.4 L577.4 558.7 L577.7 558.9 L577.9 560.1 L578.2 558.4 L578.4 559.8 L578.7 558.1 L578.9 558.5 L579.2 558.2 L579.4 560.1 L579.7 558.4 L579.9 558.6 L580.2 558.1 L580.4 558.7 L580.7 559.9 L580.9 559.9 L581.2 560.4 L581.4 560.5 L581.7 559.4 L581.9 560.4 L582.2 558.2 L582.4 560.4 L582.7 559.1 L582.9 558.5 L583.2 559.9 L583.4 560.2 L583.7 559.0 L583.9 558.2 L584.2 560.3 L584.4 560.0 L584.7 559.6 L584.9 560.5 L585.2 558.1 L585.4 558.1 L585.7 558.3 L585.9 558.1 L586.2 559.8 L586.4 559.6 L586.7 558.3 L586.9 558.4 L587.2 558.5 L587.4 559.6 L587.7 559.7 L587.9 560.5 L588.2 558.9 L588.4 560.5 L588.7 559.1 L588.9 559.0 L589.2 558.7 L589.4 558.6 L589.7 560.5 L589.9 560.6 L590.2 559.8 L590.4 558.5 L590.7 558.5 L590.9 558.4 L591.2 558.9 L591.4 559.9 L591.7 558.2 L591.9 559.4 L592.2 559.8 L592.4 558.1 L592.7 559.1 L592.9 560.1 L593.2 559.5 L593.4 559.2 L593.7 560.3 L593.9 559.6 L594.2 558.9 L594.4 559.0 L594.7 560.5 L594.9 560.2 L595.2 560.4 L595.4 559.5 L595.7 558.4 L595.9 558.5 L596.2 559.0 L596.4 559.8 L596.7 558.0 L596.9 560.1 L597.2 560.0 L597.4 559.3 L597.7 558.0 L597.9 560.1 L598.2 559.1 L598.4 559.7 L598.7 559.5 L598.9 559.9 L599.2 559.1 L599.4 560.5 L599.7 560.5 L599.9 560.4 L600.2 559.6 L600.4 558.8 L600.7 559.0" stroke="#19f0f0" stroke-width="1.3" fill="none"/><path d="M244.2 574 V556 M542 574 V556 M583 574 V556" stroke="#19f0f0" stroke-width="1.3"/></svg>
<div class="t" style="left:185.70px;top:396.67px;font-size:7.4px;color:#666;font-weight:normal;transform:translateX(-100%);">130</div>
<div class="t" style="left:185.70px;top:414.07px;font-size:7.4px;color:#666;font-weight:normal;transform:translateX(-100%);">117</div>
<div class="t" style="left:185.70px;top:431.47px;font-size:7.4px;color:#666;font-weight:normal;transform:translateX(-100%);">104</div>
<div class="t" style="left:185.70px;top:448.87px;font-size:7.4px;color:#666;font-weight:normal;transform:translateX(-100%);">91</div>
<div class="t" style="left:185.70px;top:466.27px;font-size:7.4px;color:#666;font-weight:normal;transform:translateX(-100%);">78</div>
<div class="t" style="left:185.70px;top:483.67px;font-size:7.4px;color:#666;font-weight:normal;transform:translateX(-100%);">65</div>
<div class="t" style="left:185.70px;top:501.07px;font-size:7.4px;color:#666;font-weight:normal;transform:translateX(-100%);">52</div>
<div class="t" style="left:185.70px;top:518.47px;font-size:7.4px;color:#666;font-weight:normal;transform:translateX(-100%);">39</div>
<div class="t" style="left:185.70px;top:535.87px;font-size:7.4px;color:#666;font-weight:normal;transform:translateX(-100%);">26</div>
<div class="t" style="left:185.70px;top:553.27px;font-size:7.4px;color:#666;font-weight:normal;transform:translateX(-100%);">13</div>
<div class="t" style="left:185.70px;top:570.67px;font-size:7.4px;color:#666;font-weight:normal;transform:translateX(-100%);">0</div>
<div class="t" style="left:226.40px;top:396.67px;font-size:7.4px;color:#666;font-weight:normal;transform:translateX(-100%);">600</div>
<div class="t" style="left:226.40px;top:414.07px;font-size:7.4px;color:#666;font-weight:normal;transform:translateX(-100%);">590</div>
<div class="t" style="left:226.40px;top:431.47px;font-size:7.4px;color:#666;font-weight:normal;transform:translateX(-100%);">580</div>
<div class="t" style="left:226.40px;top:448.87px;font-size:7.4px;color:#666;font-weight:normal;transform:translateX(-100%);">570</div>
<div class="t" style="left:226.40px;top:466.27px;font-size:7.4px;color:#666;font-weight:normal;transform:translateX(-100%);">560</div>
<div class="t" style="left:226.40px;top:483.67px;font-size:7.4px;color:#666;font-weight:normal;transform:translateX(-100%);">550</div>
<div class="t" style="left:226.40px;top:501.07px;font-size:7.4px;color:#666;font-weight:normal;transform:translateX(-100%);">540</div>
<div class="t" style="left:226.40px;top:518.47px;font-size:7.4px;color:#666;font-weight:normal;transform:translateX(-100%);">530</div>
<div class="t" style="left:226.40px;top:535.87px;font-size:7.4px;color:#666;font-weight:normal;transform:translateX(-100%);">520</div>
<div class="t" style="left:226.40px;top:553.27px;font-size:7.4px;color:#666;font-weight:normal;transform:translateX(-100%);">510</div>
<div class="t" style="left:226.40px;top:570.67px;font-size:7.4px;color:#666;font-weight:normal;transform:translateX(-100%);">500</div>
<div class="t" style="left:619.80px;top:396.67px;font-size:7.4px;color:#666;font-weight:normal;">400</div>
<div class="t" style="left:619.80px;top:414.07px;font-size:7.4px;color:#666;font-weight:normal;">375</div>
<div class="t" style="left:619.80px;top:431.47px;font-size:7.4px;color:#666;font-weight:normal;">350</div>
<div class="t" style="left:619.80px;top:448.87px;font-size:7.4px;color:#666;font-weight:normal;">325</div>
<div class="t" style="left:619.80px;top:466.27px;font-size:7.4px;color:#666;font-weight:normal;">300</div>
<div class="t" style="left:619.80px;top:483.67px;font-size:7.4px;color:#666;font-weight:normal;">275</div>
<div class="t" style="left:619.80px;top:501.07px;font-size:7.4px;color:#666;font-weight:normal;">250</div>
<div class="t" style="left:619.80px;top:518.47px;font-size:7.4px;color:#666;font-weight:normal;">225</div>
<div class="t" style="left:619.80px;top:535.87px;font-size:7.4px;color:#666;font-weight:normal;">200</div>
<div class="t" style="left:619.80px;top:553.27px;font-size:7.4px;color:#666;font-weight:normal;">175</div>
<div class="t" style="left:619.80px;top:570.67px;font-size:7.4px;color:#666;font-weight:normal;">150</div>
<div class="t" style="left:660.60px;top:402.37px;font-size:7.4px;color:#666;font-weight:normal;">75.9</div>
<div class="t" style="left:660.60px;top:419.17px;font-size:7.4px;color:#666;font-weight:normal;">75.6</div>
<div class="t" style="left:660.60px;top:435.97px;font-size:7.4px;color:#666;font-weight:normal;">75.3</div>
<div class="t" style="left:660.60px;top:452.77px;font-size:7.4px;color:#666;font-weight:normal;">75</div>
<div class="t" style="left:660.60px;top:469.57px;font-size:7.4px;color:#666;font-weight:normal;">74.7</div>
<div class="t" style="left:660.60px;top:486.37px;font-size:7.4px;color:#666;font-weight:normal;">74.4</div>
<div class="t" style="left:660.60px;top:503.17px;font-size:7.4px;color:#666;font-weight:normal;">74.1</div>
<div class="t" style="left:660.60px;top:519.97px;font-size:7.4px;color:#666;font-weight:normal;">73.8</div>
<div class="t" style="left:660.60px;top:536.77px;font-size:7.4px;color:#666;font-weight:normal;">73.5</div>
<div class="t" style="left:660.60px;top:553.57px;font-size:7.4px;color:#666;font-weight:normal;">73.2</div>
<div class="t" style="left:660.60px;top:570.37px;font-size:7.4px;color:#666;font-weight:normal;">72.9</div>
<div class="t" style="left:703.30px;top:396.67px;font-size:7.4px;color:#666;font-weight:normal;">10</div>
<div class="t" style="left:703.30px;top:414.07px;font-size:7.4px;color:#666;font-weight:normal;">9</div>
<div class="t" style="left:703.30px;top:431.47px;font-size:7.4px;color:#666;font-weight:normal;">8</div>
<div class="t" style="left:703.30px;top:448.87px;font-size:7.4px;color:#666;font-weight:normal;">7</div>
<div class="t" style="left:703.30px;top:466.27px;font-size:7.4px;color:#666;font-weight:normal;">6</div>
<div class="t" style="left:703.30px;top:483.67px;font-size:7.4px;color:#666;font-weight:normal;">5</div>
<div class="t" style="left:703.30px;top:501.07px;font-size:7.4px;color:#666;font-weight:normal;">4</div>
<div class="t" style="left:703.30px;top:518.47px;font-size:7.4px;color:#666;font-weight:normal;">3</div>
<div class="t" style="left:703.30px;top:535.87px;font-size:7.4px;color:#666;font-weight:normal;">2</div>
<div class="t" style="left:703.30px;top:553.27px;font-size:7.4px;color:#666;font-weight:normal;">1</div>
<div class="t" style="left:703.30px;top:570.67px;font-size:7.4px;color:#666;font-weight:normal;">0</div>
<div class="t" style="left:290.40px;top:580.87px;font-size:7.4px;color:#666;font-weight:normal;transform:translateX(-50%);">15. Nov</div>
<div class="t" style="left:345.00px;top:580.87px;font-size:7.4px;color:#666;font-weight:normal;transform:translateX(-50%);">29. Nov</div>
<div class="t" style="left:399.60px;top:580.87px;font-size:7.4px;color:#666;font-weight:normal;transform:translateX(-50%);">13. Dec</div>
<div class="t" style="left:454.40px;top:580.87px;font-size:7.4px;color:#666;font-weight:normal;transform:translateX(-50%);">27. Dec</div>
<div class="t" style="left:508.70px;top:580.87px;font-size:7.4px;color:#666;font-weight:normal;transform:translateX(-50%);">10. Jan</div>
<div class="t" style="left:563.00px;top:580.87px;font-size:7.4px;color:#666;font-weight:normal;transform:translateX(-50%);">24. Jan</div>
<div class="t" style="left:162.5px;top:488px;font-size:7.4px;color:#666;transform:translate(-50%,-50%) rotate(-90deg);line-height:1">RUN FREQ. [Hz]</div>
<div class="t" style="left:203px;top:487.5px;font-size:7.4px;color:#666;transform:translate(-50%,-50%) rotate(-90deg);line-height:1">PIP [PSI]</div>
<div class="t" style="left:643.4px;top:487.5px;font-size:7.4px;color:#666;transform:translate(-50%,-50%) rotate(90deg);line-height:1">MOTOR TEMP [F]</div>
<div class="t" style="left:686px;top:487.5px;font-size:7.4px;color:#666;transform:translate(-50%,-50%) rotate(90deg);line-height:1">AMA [A]</div>
<div class="t" style="left:722px;top:487px;font-size:7.4px;color:#666;transform:translate(-50%,-50%) rotate(90deg);line-height:1">VIB X [G]</div>
<div class="t" style="left:236.50px;top:447.28px;font-size:7.6px;color:#222;font-weight:bold;text-shadow:0 0 1px #fff,0 0 1px #fff,0 0 2px #fff">74.97</div>
<div class="t" style="left:318.80px;top:442.08px;font-size:7.6px;color:#222;font-weight:bold;text-shadow:0 0 1px #fff,0 0 1px #fff,0 0 2px #fff">75.06</div>
<div class="t" style="left:416.00px;top:462.28px;font-size:7.6px;color:#222;font-weight:bold;text-shadow:0 0 1px #fff,0 0 1px #fff,0 0 2px #fff">74.7</div>
<div class="t" style="left:236.50px;top:490.88px;font-size:7.6px;color:#222;font-weight:bold;text-shadow:0 0 1px #fff,0 0 1px #fff,0 0 2px #fff">541.56</div>
<div class="t" style="left:236.50px;top:499.98px;font-size:7.6px;color:#222;font-weight:bold;text-shadow:0 0 1px #fff,0 0 1px #fff,0 0 2px #fff">241.69</div>
<div class="t" style="left:236.50px;top:548.28px;font-size:7.6px;color:#222;font-weight:bold;text-shadow:0 0 1px #fff,0 0 1px #fff,0 0 2px #fff">0.84</div>
<div class="t" style="left:322.70px;top:547.28px;font-size:7.6px;color:#222;font-weight:bold;text-shadow:0 0 1px #fff,0 0 1px #fff,0 0 2px #fff">0.9</div>
<div class="t" style="left:416.30px;top:547.88px;font-size:7.6px;color:#222;font-weight:bold;text-shadow:0 0 1px #fff,0 0 1px #fff,0 0 2px #fff">0.88</div>
<div class="t" style="left:413.00px;top:499.98px;font-size:7.6px;color:#222;font-weight:bold;text-shadow:0 0 1px #fff,0 0 1px #fff,0 0 2px #fff">241.46</div>
<div class="t" style="left:414.00px;top:522.88px;font-size:7.6px;color:#222;font-weight:bold;text-shadow:0 0 1px #fff,0 0 1px #fff,0 0 2px #fff">523.2</div>
<div class="t" style="left:504.70px;top:467.98px;font-size:7.6px;color:#222;font-weight:bold;text-shadow:0 0 1px #fff,0 0 1px #fff,0 0 2px #fff">74.6</div>
<div class="t" style="left:500.70px;top:500.28px;font-size:7.6px;color:#222;font-weight:bold;text-shadow:0 0 1px #fff,0 0 1px #fff,0 0 2px #fff">240.41</div>
<div class="t" style="left:500.70px;top:520.28px;font-size:7.6px;color:#222;font-weight:bold;text-shadow:0 0 1px #fff,0 0 1px #fff,0 0 2px #fff">524.51</div>
<div class="t" style="left:504.70px;top:547.88px;font-size:7.6px;color:#222;font-weight:bold;text-shadow:0 0 1px #fff,0 0 1px #fff,0 0 2px #fff">0.88</div>
<div class="t" style="left:584.90px;top:499.98px;font-size:7.6px;color:#222;font-weight:bold;text-shadow:0 0 1px #fff,0 0 1px #fff,0 0 2px #fff">240.79</div>
<div class="t" style="left:584.90px;top:516.78px;font-size:7.6px;color:#222;font-weight:bold;text-shadow:0 0 1px #fff,0 0 1px #fff,0 0 2px #fff">526.88</div>
<div class="t" style="left:593.00px;top:547.88px;font-size:7.6px;color:#222;font-weight:bold;text-shadow:0 0 1px #fff,0 0 1px #fff,0 0 2px #fff">0.87</div>
<div class="a" style="left:419.2px;top:407.2px;width:64.6px;height:21.3px;background:#f7f7f7;border:1px solid #cfcfcf;border-radius:1px"></div>
<div class="t" style="left:451.50px;top:413.88px;font-size:8.0px;color:#333;font-weight:normal;transform:translateX(-50%);">Remove marks</div>
<svg class="a" style="left:426px;top:504px" width="12" height="12"><path d="M1 11 L6 6" stroke="#111" stroke-width="1.3"/><path d="M5 4 L8 1 L11 4 L8 7Z" fill="#111"/></svg>
<div class="a" style="left:310px;top:476.3px;width:112.5px;height:67.7px;background:rgba(247,247,247,.85);border:1px solid #3333dd;border-radius:2px"></div>
<div class="t" style="left:315.60px;top:483.26px;font-size:6.4px;color:#333;font-weight:normal;">Tuesday, Dec 21, 09:00</div>
<div class="a" style="left:315.5px;top:493.1px;width:5px;height:5px;border-radius:50%;background:#0000ff"></div>
<div class="t" style="left:324.00px;top:491.68px;font-size:8px;color:#333;font-weight:normal;">MOTOR TEMP [F]: <b>241.21</b></div>
<div class="a" style="left:315.5px;top:502.7px;width:5px;height:5px;border-radius:50%;background:#ff0000"></div>
<div class="t" style="left:324.00px;top:501.28px;font-size:8px;color:#333;font-weight:normal;">PIP [PSI]: <b>523.93</b></div>
<div class="a" style="left:315.5px;top:512.5px;width:5px;height:5px;border-radius:50%;background:#90d020"></div>
<div class="t" style="left:324.00px;top:511.08px;font-size:8px;color:#333;font-weight:normal;">RUN FREQ. [Hz]: <b>53</b></div>
<div class="a" style="left:315.5px;top:522.0px;width:5px;height:5px;border-radius:50%;background:#ff9a0a"></div>
<div class="t" style="left:324.00px;top:520.58px;font-size:8px;color:#333;font-weight:normal;">AMA [A]: <b>74.67</b></div>
<div class="a" style="left:315.5px;top:531.5px;width:5px;height:5px;border-radius:50%;background:#19f0f0"></div>
<div class="t" style="left:324.00px;top:530.08px;font-size:8px;color:#333;font-weight:normal;">VIB X [G]: <b>0.86</b></div>
<div class="a" style="left:276.5px;top:604.6px;width:10px;height:1.1px;background:#0000ff;"></div>
<div class="a" style="left:279.0px;top:602.5px;width:5px;height:5px;border-radius:50%;background:#0000ff"></div>
<div class="t" style="left:290.00px;top:601.38px;font-size:7.6px;color:#333;font-weight:normal;text-shadow:0 0 0.45px #333">MOTOR TEMP [F]</div>
<div class="a" style="left:365px;top:604.6px;width:10px;height:1.1px;background:#ff0000;"></div>
<svg class="a" style="left:367px;top:602px" width="6" height="6"><path d="M3 0 L6 3 L3 6 L0 3Z" fill="#ff0000"/></svg>
<div class="t" style="left:378.00px;top:601.38px;font-size:7.6px;color:#333;font-weight:normal;text-shadow:0 0 0.45px #333">PIP [PSI]</div>
<div class="a" style="left:420px;top:604.6px;width:10px;height:1.1px;background:#90d020;"></div>
<div class="a" style="left:422.5px;top:602.5px;width:5px;height:5px;background:#90d020;"></div>
<div class="t" style="left:434.00px;top:601.38px;font-size:7.6px;color:#333;font-weight:normal;text-shadow:0 0 0.45px #333">RUN FREQ. [Hz]</div>
<div class="a" style="left:503px;top:604.6px;width:10px;height:1.1px;background:#ff9a0a;"></div>
<svg class="a" style="left:505px;top:602px" width="6" height="5"><path d="M3 0 L6 5 H0Z" fill="#ff9a0a"/></svg>
<div class="t" style="left:517.00px;top:601.38px;font-size:7.6px;color:#333;font-weight:normal;text-shadow:0 0 0.45px #333">AMA [A]</div>
<div class="a" style="left:561px;top:604.6px;width:10px;height:1.1px;background:#19f0f0;"></div>
<svg class="a" style="left:563px;top:602px" width="6" height="6"><path d="M3 0 L6 3 L3 6 L0 3Z" fill="#19f0f0"/></svg>
<div class="t" style="left:574.00px;top:601.38px;font-size:7.6px;color:#333;font-weight:normal;text-shadow:0 0 0.45px #333">VIB X [G]</div>
<div class="a" style="left:749px;top:93px;width:465.5px;height:544px;background:#fff;box-shadow:0 0 1.5px rgba(0,0,40,.15);border-radius:2px"></div>
<div class="a" style="left:749px;top:93px;width:465.5px;height:25px;background:#fcd035;border-radius:2px 2px 0 0"></div>
<div class="a" style="left:980.5px;top:93px;width:1px;height:25px;background:rgba(255,255,255,.28);"></div>
<svg class="a" style="left:759px;top:98px" width="15" height="15"><rect x="5" y="0.7" width="5" height="3.8" fill="none" stroke="#f0a62b" stroke-width="1.2"/><rect x="0.7" y="10" width="5" height="3.8" fill="none" stroke="#f0a62b" stroke-width="1.2"/><rect x="9.3" y="10" width="5" height="3.8" fill="none" stroke="#f0a62b" stroke-width="1.2"/><path d="M7.5 4.5 V7.3 M3.2 10 V7.3 H11.8 V10" stroke="#f0a62b" stroke-width="1.2" fill="none"/></svg>
<div class="t" style="left:776.50px;top:101.28px;font-size:8.4px;color:#5a5439;font-weight:bold;letter-spacing:0px">DEVICE 124</div>
<div class="a" style="left:833.6px;top:98.7px;width:17px;height:8.6px;border-radius:4.3px;background:#9a9a9a"></div>
<div class="a" style="left:827.6px;top:97px;width:12px;height:12px;border-radius:50%;background:#fafafa;box-shadow:0 1px 2px rgba(0,0,0,.35)"></div>
<svg class="a" style="left:990.5px;top:97px" width="16" height="16"><path d="M1 1 V14.5 H15.5" stroke="#f0a62b" stroke-width="1.3" fill="none"/><path d="M2 13 L5 8 L9 10 L14 3.5 M2 13 Q8 12 14 11" stroke="#f0a62b" stroke-width="1.1" fill="none"/></svg>
<div class="t" style="left:1008.40px;top:101.28px;font-size:8.4px;color:#5a5439;font-weight:bold;letter-spacing:0px">DEVICE 124</div>
<div class="a" style="left:1066px;top:98.7px;width:17px;height:8.6px;border-radius:4.3px;background:#9a9a9a"></div>
<div class="a" style="left:1060px;top:97px;width:12px;height:12px;border-radius:50%;background:#fafafa;box-shadow:0 1px 2px rgba(0,0,0,.35)"></div>
<div class="a" style="left:750.6px;top:124.7px;width:55px;height:17.7px;background:#fff;border-radius:3px;box-shadow:0 1px 2px rgba(0,0,0,.25)"></div>
<div class="t" style="left:778.00px;top:131.42px;font-size:6.9px;color:#222;font-weight:normal;transform:translateX(-50%);text-shadow:0 0 0.25px #222">CONFIG ...</div>
<div class="a" style="left:750.7px;top:152px;width:158.0px;height:19.19999999999999px;background:#f1a92c;border-top:1.5px solid #222"></div>
<div class="t" style="left:831.70px;top:159.52px;font-size:7.1px;color:#111;font-weight:bold;transform:translateX(-50%);">BHA</div>
<div class="a" style="left:750.7px;top:180.15px;width:158.0px;height:1px;background:#555;"></div>
<div class="t" style="left:751.00px;top:173.59px;font-size:6.7px;color:#333;font-weight:normal;">Install date</div>
<div class="t" style="left:841.10px;top:173.59px;font-size:6.7px;color:#333;font-weight:normal;">2018-12-27</div>
<div class="a" style="left:750.7px;top:189.70000000000002px;width:158.0px;height:1px;background:#555;"></div>
<div class="t" style="left:751.00px;top:183.14px;font-size:6.7px;color:#333;font-weight:normal;">Run life (days)</div>
<div class="t" style="left:841.10px;top:183.14px;font-size:6.7px;color:#333;font-weight:normal;">1133</div>
<div class="a" style="left:750.7px;top:199.25px;width:158.0px;height:1px;background:#555;"></div>
<div class="t" style="left:751.00px;top:192.69px;font-size:6.7px;color:#333;font-weight:normal;">Depth TVD (ft)</div>
<div class="t" style="left:841.10px;top:192.69px;font-size:6.7px;color:#333;font-weight:normal;">N.A.</div>
<div class="a" style="left:750.7px;top:208.8px;width:158.0px;height:1px;background:#555;"></div>
<div class="t" style="left:751.00px;top:202.24px;font-size:6.7px;color:#333;font-weight:normal;">Intake TVD (ft)</div>
<div class="t" style="left:841.10px;top:202.24px;font-size:6.7px;color:#333;font-weight:normal;">7479</div>
<div class="a" style="left:750.7px;top:218.35px;width:158.0px;height:1px;background:#555;"></div>
<div class="t" style="left:751.00px;top:211.79px;font-size:6.7px;color:#333;font-weight:normal;">Pump</div>
<div class="t" style="left:841.10px;top:211.79px;font-size:6.7px;color:#333;font-weight:normal;">400 - P35</div>
<div class="a" style="left:750.7px;top:227.9px;width:158.0px;height:1px;background:#555;"></div>
<div class="t" style="left:751.00px;top:221.34px;font-size:6.7px;color:#333;font-weight:normal;"># Stages</div>
<div class="t" style="left:841.10px;top:221.34px;font-size:6.7px;color:#333;font-weight:normal;">312</div>
<div class="a" style="left:750.7px;top:237.45000000000002px;width:158.0px;height:1px;background:#555;"></div>
<div class="t" style="left:751.00px;top:230.89px;font-size:6.7px;color:#333;font-weight:normal;">Motor</div>
<div class="t" style="left:841.10px;top:230.89px;font-size:6.7px;color:#333;font-weight:normal;">560 - XT1</div>
<div class="a" style="left:750.7px;top:171.2px;width:1px;height:66.85000000000001px;background:#555;"></div>
<div class="a" style="left:840.3px;top:171.2px;width:1px;height:66.85000000000001px;background:#555;"></div>
<div class="a" style="left:750.7px;top:238.3px;width:158.0px;height:19.30000000000001px;background:#f1a92c;border-top:1.5px solid #222"></div>
<div class="t" style="left:831.70px;top:245.87px;font-size:7.1px;color:#111;font-weight:bold;transform:translateX(-50%);">Surface &amp; DH data</div>
<div class="a" style="left:750.7px;top:266.55px;width:158.0px;height:1px;background:#555;"></div>
<div class="t" style="left:751.00px;top:259.99px;font-size:6.7px;color:#333;font-weight:normal;">Date</div>
<div class="t" style="left:841.10px;top:259.99px;font-size:6.7px;color:#333;font-weight:normal;">2022-02-02 14:55:00</div>
<div class="a" style="left:750.7px;top:276.1px;width:158.0px;height:1px;background:#555;"></div>
<div class="t" style="left:751.00px;top:269.54px;font-size:6.7px;color:#333;font-weight:normal;">Freq. (Hz)</div>
<div class="t" style="left:841.10px;top:269.54px;font-size:6.7px;color:#333;font-weight:normal;">53</div>
<div class="a" style="left:750.7px;top:285.65000000000003px;width:158.0px;height:1px;background:#555;"></div>
<div class="t" style="left:751.00px;top:279.09px;font-size:6.7px;color:#333;font-weight:normal;">AMV (V)</div>
<div class="t" style="left:841.10px;top:279.09px;font-size:6.7px;color:#333;font-weight:normal;">2323.54</div>
<div class="a" style="left:750.7px;top:295.2px;width:158.0px;height:1px;background:#555;"></div>
<div class="t" style="left:751.00px;top:288.64px;font-size:6.7px;color:#333;font-weight:normal;">AMA (A)</div>
<div class="t" style="left:841.10px;top:288.64px;font-size:6.7px;color:#333;font-weight:normal;">74.458</div>
<div class="a" style="left:750.7px;top:304.75px;width:158.0px;height:1px;background:#555;"></div>
<div class="t" style="left:751.00px;top:298.19px;font-size:6.7px;color:#333;font-weight:normal;">PIP (psi)</div>
<div class="t" style="left:841.10px;top:298.19px;font-size:6.7px;color:#333;font-weight:normal;">529.2</div>
<div class="a" style="left:750.7px;top:314.3px;width:158.0px;height:1px;background:#555;"></div>
<div class="t" style="left:751.00px;top:307.74px;font-size:6.7px;color:#333;font-weight:normal;">PDP (psi)</div>
<div class="t" style="left:841.10px;top:307.74px;font-size:6.7px;color:#333;font-weight:normal;">N.A.</div>
<div class="a" style="left:750.7px;top:323.85px;width:158.0px;height:1px;background:#555;"></div>
<div class="t" style="left:751.00px;top:317.29px;font-size:6.7px;color:#333;font-weight:normal;">TM (°F)</div>
<div class="t" style="left:841.10px;top:317.29px;font-size:6.7px;color:#333;font-weight:normal;">241.4</div>
<div class="a" style="left:750.7px;top:333.40000000000003px;width:158.0px;height:1px;background:#555;"></div>
<div class="t" style="left:751.00px;top:326.84px;font-size:6.7px;color:#333;font-weight:normal;">PIT (°F)</div>
<div class="t" style="left:841.10px;top:326.84px;font-size:6.7px;color:#333;font-weight:normal;">163.2</div>
<div class="a" style="left:750.7px;top:257.6px;width:1px;height:76.4px;background:#555;"></div>
<div class="a" style="left:840.3px;top:257.6px;width:1px;height:76.4px;background:#555;"></div>
<div class="a" style="left:750.7px;top:334.6px;width:158.0px;height:19.099999999999966px;background:#f1a92c;border-top:1.5px solid #222"></div>
<div class="t" style="left:831.70px;top:342.07px;font-size:7.1px;color:#111;font-weight:bold;transform:translateX(-50%);">Well test data</div>
<div class="a" style="left:750.7px;top:362.65px;width:158.0px;height:1px;background:#555;"></div>
<div class="t" style="left:751.00px;top:356.09px;font-size:6.7px;color:#333;font-weight:normal;">Date</div>
<div class="t" style="left:841.10px;top:356.09px;font-size:6.7px;color:#333;font-weight:normal;">2022-01-07</div>
<div class="a" style="left:750.7px;top:372.2px;width:158.0px;height:1px;background:#555;"></div>
<div class="t" style="left:751.00px;top:365.64px;font-size:6.7px;color:#333;font-weight:normal;">BFPD</div>
<div class="t" style="left:841.10px;top:365.64px;font-size:6.7px;color:#333;font-weight:normal;">1839</div>
<div class="a" style="left:750.7px;top:381.75px;width:158.0px;height:1px;background:#555;"></div>
<div class="t" style="left:751.00px;top:375.19px;font-size:6.7px;color:#333;font-weight:normal;">BOPD</div>
<div class="t" style="left:841.10px;top:375.19px;font-size:6.7px;color:#333;font-weight:normal;">643.65</div>
<div class="a" style="left:750.7px;top:391.29999999999995px;width:158.0px;height:1px;background:#555;"></div>
<div class="t" style="left:751.00px;top:384.74px;font-size:6.7px;color:#333;font-weight:normal;">BSW (%)</div>
<div class="t" style="left:841.10px;top:384.74px;font-size:6.7px;color:#333;font-weight:normal;">65</div>
<div class="a" style="left:750.7px;top:400.84999999999997px;width:158.0px;height:1px;background:#555;"></div>
<div class="t" style="left:751.00px;top:394.29px;font-size:6.7px;color:#333;font-weight:normal;">API</div>
<div class="t" style="left:841.10px;top:394.29px;font-size:6.7px;color:#333;font-weight:normal;">20</div>
<div class="a" style="left:750.7px;top:410.4px;width:158.0px;height:1px;background:#555;"></div>
<div class="t" style="left:751.00px;top:403.84px;font-size:6.7px;color:#333;font-weight:normal;">GOR</div>
<div class="t" style="left:841.10px;top:403.84px;font-size:6.7px;color:#333;font-weight:normal;">253.65</div>
<div class="a" style="left:750.7px;top:419.95px;width:158.0px;height:1px;background:#555;"></div>
<div class="t" style="left:751.00px;top:413.39px;font-size:6.7px;color:#333;font-weight:normal;">Static Press (psi)</div>
<div class="t" style="left:841.10px;top:413.39px;font-size:6.7px;color:#333;font-weight:normal;">1455</div>
<div class="a" style="left:750.7px;top:429.5px;width:158.0px;height:1px;background:#555;"></div>
<div class="t" style="left:751.00px;top:422.94px;font-size:6.7px;color:#333;font-weight:normal;">IP</div>
<div class="t" style="left:841.10px;top:422.94px;font-size:6.7px;color:#333;font-weight:normal;">0.63</div>
<div class="a" style="left:750.7px;top:353.7px;width:1px;height:76.4px;background:#555;"></div>
<div class="a" style="left:840.3px;top:353.7px;width:1px;height:76.4px;background:#555;"></div>
<div class="a" style="left:750.7px;top:430.8px;width:158.0px;height:18.80000000000001px;background:#f1a92c;border-top:1.5px solid #222"></div>
<div class="t" style="left:831.70px;top:438.12px;font-size:7.1px;color:#111;font-weight:bold;transform:translateX(-50%);">Calculated data</div>
<div class="a" style="left:750.7px;top:458.55px;width:158.0px;height:1px;background:#555;"></div>
<div class="t" style="left:751.00px;top:451.99px;font-size:6.7px;color:#333;font-weight:normal;">BFPD</div>
<div class="t" style="left:841.10px;top:451.99px;font-size:6.7px;color:#333;font-weight:normal;">N.A.</div>
<div class="a" style="left:750.7px;top:468.1px;width:158.0px;height:1px;background:#555;"></div>
<div class="t" style="left:751.00px;top:461.54px;font-size:6.7px;color:#333;font-weight:normal;">GAS (KPCD)</div>
<div class="t" style="left:841.10px;top:461.54px;font-size:6.7px;color:#333;font-weight:normal;">N.A.</div>
<div class="a" style="left:750.7px;top:477.65000000000003px;width:158.0px;height:1px;background:#555;"></div>
<div class="t" style="left:751.00px;top:471.09px;font-size:6.7px;color:#333;font-weight:normal;">Fluid level (ft)</div>
<div class="t" style="left:841.10px;top:471.09px;font-size:6.7px;color:#333;font-weight:normal;">N.A.</div>
<div class="a" style="left:750.7px;top:487.2px;width:158.0px;height:1px;background:#555;"></div>
<div class="t" style="left:751.00px;top:480.64px;font-size:6.7px;color:#333;font-weight:normal;">PWF</div>
<div class="t" style="left:841.10px;top:480.64px;font-size:6.7px;color:#333;font-weight:normal;">662.2</div>
<div class="a" style="left:750.7px;top:449.6px;width:1px;height:38.2px;background:#555;"></div>
<div class="a" style="left:840.3px;top:449.6px;width:1px;height:38.2px;background:#555;"></div>
<div class="a" style="left:750.7px;top:488.2px;width:158.0px;height:18.600000000000023px;background:#f1a92c;border-top:1.5px solid #222"></div>
<div class="t" style="left:831.70px;top:495.42px;font-size:7.1px;color:#111;font-weight:bold;transform:translateX(-50%);">Surface</div>
<div class="a" style="left:750.7px;top:515.75px;width:158.0px;height:1px;background:#555;"></div>
<div class="t" style="left:751.00px;top:509.19px;font-size:6.7px;color:#333;font-weight:normal;">VSD volts unbalance (%)</div>
<div class="t" style="left:841.10px;top:509.19px;font-size:6.7px;color:#333;font-weight:normal;">N.A.</div>
<div class="a" style="left:750.7px;top:525.3px;width:158.0px;height:1px;background:#555;"></div>
<div class="t" style="left:751.00px;top:518.74px;font-size:6.7px;color:#333;font-weight:normal;">VSD current unbalance (%)</div>
<div class="t" style="left:841.10px;top:518.74px;font-size:6.7px;color:#333;font-weight:normal;">N.A.</div>
<div class="a" style="left:750.7px;top:534.8499999999999px;width:158.0px;height:1px;background:#555;"></div>
<div class="t" style="left:751.00px;top:528.29px;font-size:6.7px;color:#333;font-weight:normal;">VSD Load (%)</div>
<div class="t" style="left:841.10px;top:528.29px;font-size:6.7px;color:#333;font-weight:normal;">44.5</div>
<div class="a" style="left:750.7px;top:544.4px;width:158.0px;height:1px;background:#555;"></div>
<div class="t" style="left:751.00px;top:537.84px;font-size:6.7px;color:#333;font-weight:normal;">SUT Load (%)</div>
<div class="t" style="left:841.10px;top:537.84px;font-size:6.7px;color:#333;font-weight:normal;">33.4</div>
<div class="a" style="left:750.7px;top:506.8px;width:1px;height:38.2px;background:#555;"></div>
<div class="a" style="left:840.3px;top:506.8px;width:1px;height:38.2px;background:#555;"></div>
<div class="a" style="left:750.7px;top:545.5px;width:158.0px;height:19.0px;background:#f1a92c;border-top:1.5px solid #222"></div>
<div class="t" style="left:831.70px;top:552.92px;font-size:7.1px;color:#111;font-weight:bold;transform:translateX(-50%);">Pump</div>
<div class="a" style="left:750.7px;top:573.4499999999999px;width:158.0px;height:1px;background:#555;"></div>
<div class="t" style="left:751.00px;top:566.89px;font-size:6.7px;color:#333;font-weight:normal;">Range</div>
<div class="t" style="left:841.10px;top:566.89px;font-size:6.7px;color:#333;font-weight:normal;">DOWNTRUST</div>
<div class="a" style="left:840.3px;top:574.05px;width:68.40000000000009px;height:9.55px;background:#e89595;"></div>
<div class="a" style="left:750.7px;top:582.9999999999999px;width:158.0px;height:1px;background:#555;"></div>
<div class="t" style="left:751.00px;top:576.44px;font-size:6.7px;color:#333;font-weight:normal;">Pump shaft (%)</div>
<div class="t" style="left:841.10px;top:576.44px;font-size:6.7px;color:#333;font-weight:normal;">160.7</div>
<div class="a" style="left:750.7px;top:564.5px;width:1px;height:19.1px;background:#555;"></div>
<div class="a" style="left:840.3px;top:564.5px;width:1px;height:19.1px;background:#555;"></div>
<div class="a" style="left:750.7px;top:583.8px;width:158.0px;height:18.40000000000009px;background:#f1a92c;border-top:1.5px solid #222"></div>
<div class="t" style="left:831.70px;top:590.92px;font-size:7.1px;color:#111;font-weight:bold;transform:translateX(-50%);">Motor</div>
<div class="a" style="left:750.7px;top:611.15px;width:158.0px;height:1px;background:#555;"></div>
<div class="t" style="left:751.00px;top:604.59px;font-size:6.7px;color:#333;font-weight:normal;">Volts unbalance (%)</div>
<div class="t" style="left:841.10px;top:604.59px;font-size:6.7px;color:#333;font-weight:normal;">N.A.</div>
<div class="a" style="left:750.7px;top:620.6999999999999px;width:158.0px;height:1px;background:#555;"></div>
<div class="t" style="left:751.00px;top:614.14px;font-size:6.7px;color:#333;font-weight:normal;">Current unbalance (%)</div>
<div class="t" style="left:841.10px;top:614.14px;font-size:6.7px;color:#333;font-weight:normal;">N.A.</div>
<div class="a" style="left:840.3px;top:621.3000000000001px;width:68.40000000000009px;height:9.55px;background:#fde4a0;"></div>
<div class="a" style="left:750.7px;top:630.25px;width:158.0px;height:1px;background:#555;"></div>
<div class="t" style="left:751.00px;top:623.69px;font-size:6.7px;color:#333;font-weight:normal;">Load (%)</div>
<div class="t" style="left:841.10px;top:623.69px;font-size:6.7px;color:#333;font-weight:normal;">80.8</div>
<div class="a" style="left:750.7px;top:602.2px;width:1px;height:28.650000000000002px;background:#555;"></div>
<div class="a" style="left:840.3px;top:602.2px;width:1px;height:28.650000000000002px;background:#555;"></div>
<div class="t" style="left:1048.70px;top:127.72px;font-size:12px;color:#333;font-weight:normal;transform:translateX(-50%);">Performance curve @53 Hz</div>
<svg class="a" style="left:1166px;top:131px" width="12" height="9"><path d="M0 1 H11.5 M0 4.5 H11.5 M0 8 H11.5" stroke="#555" stroke-width="1.4"/></svg>
<svg class="a" style="left:0;top:0" width="1219" height="656"><path d="M966.3 412.2 H1178" stroke="#e6e6e6" stroke-width="1"/><path d="M966.3 375.5 H1178" stroke="#e6e6e6" stroke-width="1"/><path d="M966.3 338.8 H1178" stroke="#e6e6e6" stroke-width="1"/><path d="M966.3 302.2 H1178" stroke="#e6e6e6" stroke-width="1"/><path d="M966.3 265.5 H1178" stroke="#e6e6e6" stroke-width="1"/><path d="M966.3 228.8 H1178" stroke="#e6e6e6" stroke-width="1"/><path d="M966.3 192.1 H1178" stroke="#e6e6e6" stroke-width="1"/><path d="M966.3 155.4 H1178" stroke="#e6e6e6" stroke-width="1"/><path d="M1037.3 155.39999999999998 V412.2" stroke="#e6e6e6" stroke-width="1"/><path d="M1107.6 155.39999999999998 V412.2" stroke="#e6e6e6" stroke-width="1"/><path d="M1178.3 155.39999999999998 V412.2" stroke="#e6e6e6" stroke-width="1"/><path d="M966.3 155.39999999999998 V413.2" stroke="#dde3f0" stroke-width="1"/><path d="M966.3 412.2 H1178" stroke="#ccd6eb" stroke-width="1"/><path d="M1038.4 246.8 L1040.2 248.2 L1042.1 249.6 L1044.0 251.1 L1045.8 252.5 L1047.7 254.0 L1049.6 255.4 L1051.4 256.9 L1053.3 258.4 L1055.2 259.8 L1057.0 261.3 L1058.9 262.8 L1060.8 264.3 L1062.6 265.8 L1064.5 267.3 L1066.4 268.8 L1068.2 270.3 L1070.1 271.8 L1072.0 273.3 L1073.9 274.8 L1075.7 276.3 L1077.6 277.9 L1079.5 279.4 L1081.3 281.0 L1083.2 282.6 L1085.1 284.2 L1086.9 285.8 L1088.8 287.4 L1090.7 289.1 L1092.5 290.8 L1094.4 292.5 L1096.3 294.2 L1098.1 296.0 L1100.0 297.7 L1101.9 299.6 L1103.7 301.4 L1105.6 303.4 L1107.5 305.3 L1109.3 307.3 L1111.2 309.4 L1113.1 311.5 L1113.1 311.5 L1111.5 313.6 L1109.9 315.7 L1108.4 317.8 L1106.8 319.9 L1105.2 322.0 L1103.7 324.0 L1102.1 326.0 L1100.5 328.0 L1098.9 329.9 L1097.4 331.9 L1095.8 333.8 L1094.2 335.7 L1092.7 337.5 L1091.1 339.4 L1089.5 341.2 L1087.9 343.0 L1086.4 344.8 L1084.8 346.5 L1083.2 348.3 L1081.7 350.0 L1080.1 351.7 L1078.5 353.3 L1077.0 354.9 L1075.4 356.6 L1073.8 358.2 L1072.2 359.7 L1070.7 361.3 L1069.1 362.8 L1067.5 364.3 L1066.0 365.8 L1064.4 367.2 L1062.8 368.6 L1061.2 370.0 L1059.7 371.4 L1058.1 372.8 L1056.5 374.1 L1055.0 375.4 L1053.4 376.7 L1051.8 378.0 L1050.3 379.2 L1050.3 379.2 L1049.2 378.6 L1048.1 377.9 L1047.0 377.2 L1046.0 376.6 L1044.9 376.0 L1043.8 375.4 L1042.8 374.8 L1041.7 374.2 L1040.6 373.6 L1039.6 373.0 L1038.5 372.5 L1037.4 371.9 L1036.4 371.4 L1035.3 370.8 L1034.2 370.3 L1033.2 369.8 L1032.1 369.3 L1031.0 368.8 L1030.0 368.3 L1028.9 367.7 L1027.8 367.2 L1026.8 366.7 L1025.7 366.3 L1024.6 365.8 L1023.5 365.3 L1022.5 364.8 L1021.4 364.3 L1020.3 363.8 L1019.3 363.3 L1018.2 362.8 L1017.1 362.3 L1016.1 361.9 L1015.0 361.4 L1013.9 360.9 L1012.9 360.4 L1011.8 360.0 L1010.7 359.5 L1009.7 359.0 L1008.6 358.5 L1007.5 358.1 L1007.5 358.1 L1008.3 356.0 L1009.1 353.9 L1009.8 351.8 L1010.6 349.7 L1011.4 347.5 L1012.1 345.2 L1012.9 343.0 L1013.7 340.7 L1014.5 338.3 L1015.2 335.9 L1016.0 333.5 L1016.8 331.0 L1017.5 328.5 L1018.3 326.0 L1019.1 323.4 L1019.9 320.8 L1020.6 318.2 L1021.4 315.5 L1022.2 312.8 L1022.9 310.0 L1023.7 307.2 L1024.5 304.3 L1025.3 301.5 L1026.0 298.6 L1026.8 295.6 L1027.6 292.6 L1028.3 289.6 L1029.1 286.5 L1029.9 283.4 L1030.7 280.3 L1031.4 277.1 L1032.2 273.9 L1033.0 270.6 L1033.7 267.3 L1034.5 264.0 L1035.3 260.6 L1036.1 257.2 L1036.8 253.8 L1037.6 250.3 L1038.4 246.8Z" fill="#f9e9a6" stroke="none"/><path d="M966.3 412.2 L968.5 412.0 L970.7 411.6 L972.9 410.8 L975.1 409.7 L977.3 408.3 L979.5 406.7 L981.7 404.7 L983.9 402.3 L986.1 399.7 L988.3 396.8 L990.5 393.6 L992.7 390.0 L994.9 386.2 L997.1 382.0 L999.3 377.5 L1001.5 372.8 L1003.7 367.7 L1005.9 362.3 L1008.1 356.6 L1010.3 350.6 L1012.5 344.3 L1014.7 337.6 L1016.9 330.7 L1019.1 323.5 L1021.3 315.9 L1023.5 308.0 L1025.7 299.9 L1027.9 291.4 L1030.1 282.6 L1032.3 273.5 L1034.5 264.1 L1036.7 254.4 L1038.9 244.4 L1041.1 234.1 L1043.3 223.5 L1045.5 212.5 L1047.7 201.3 L1049.9 189.7 L1052.1 177.9 L1054.3 165.7" stroke="#b4dcd4" stroke-width="1" fill="none"/><path d="M966.3 412.2 L969.8 412.1 L973.3 411.7 L976.8 411.1 L980.3 410.2 L983.8 409.1 L987.3 407.7 L990.9 406.1 L994.4 404.2 L997.9 402.1 L1001.4 399.7 L1004.9 397.1 L1008.4 394.2 L1011.9 391.1 L1015.4 387.7 L1018.9 384.1 L1022.4 380.2 L1025.9 376.1 L1029.4 371.7 L1032.9 367.1 L1036.5 362.2 L1040.0 357.1 L1043.5 351.7 L1047.0 346.1 L1050.5 340.2 L1054.0 334.1 L1057.5 327.7 L1061.0 321.1 L1064.5 314.2 L1068.0 307.1 L1071.5 299.7 L1075.0 292.1 L1078.5 284.2 L1082.1 276.1 L1085.6 267.7 L1089.1 259.1 L1092.6 250.3 L1096.1 241.1 L1099.6 231.8 L1103.1 222.1 L1106.6 212.3" stroke="#b4dcd4" stroke-width="1" fill="none"/><path d="M966.3 412.2 L970.8 412.1 L975.3 411.8 L979.8 411.4 L984.3 410.7 L988.8 409.8 L993.3 408.8 L997.7 407.6 L1002.2 406.2 L1006.7 404.6 L1011.2 402.8 L1015.7 400.8 L1020.2 398.6 L1024.7 396.3 L1029.2 393.7 L1033.7 391.0 L1038.2 388.0 L1042.7 384.9 L1047.2 381.6 L1051.6 378.1 L1056.1 374.5 L1060.6 370.6 L1065.1 366.5 L1069.6 362.3 L1074.1 357.9 L1078.6 353.2 L1083.1 348.4 L1087.6 343.4 L1092.1 338.2 L1096.6 332.9 L1101.1 327.3 L1105.5 321.5 L1110.0 315.6 L1114.5 309.5 L1119.0 303.1 L1123.5 296.6 L1128.0 289.9 L1132.5 283.0 L1137.0 276.0 L1141.5 268.7 L1146.0 261.2" stroke="#b4dcd4" stroke-width="1" fill="none"/><path d="M966.3 219.0 L969.6 217.8 L973.0 216.9 L976.3 216.5 L979.6 216.4 L982.9 216.6 L986.3 217.1 L989.6 217.9 L992.9 218.9 L996.3 220.1 L999.6 221.5 L1002.9 223.1 L1006.3 224.9 L1009.6 226.7 L1012.9 228.8 L1016.2 230.9 L1019.6 233.1 L1022.9 235.4 L1026.2 237.7 L1029.6 240.2 L1032.9 242.6 L1036.2 245.1 L1039.6 247.7 L1042.9 250.2 L1046.2 252.8 L1049.5 255.4 L1052.9 258.0 L1056.2 260.6 L1059.5 263.3 L1062.9 265.9 L1066.2 268.6 L1069.5 271.3 L1072.9 274.0 L1076.2 276.7 L1079.5 279.5 L1082.8 282.3 L1086.2 285.1 L1089.5 288.0 L1092.8 291.0 L1096.2 294.1 L1099.5 297.3 L1102.8 300.5 L1106.1 303.9 L1109.5 307.5 L1112.8 311.2 L1116.1 315.0 L1119.5 319.1 L1122.8 323.4 L1126.1 328.0 L1129.5 332.8 L1132.8 337.9 L1136.1 343.3 L1139.4 349.1 L1142.8 355.2 L1146.1 361.8 L1149.4 368.8 L1152.8 376.2 L1156.1 384.2 L1159.4 392.7 L1162.8 401.7 L1166.1 411.4" stroke="#7a8fa6" stroke-width="1.1" fill="none"/><path d="M966.3 270.3 L969.2 269.4 L972.0 268.8 L974.9 268.5 L977.7 268.4 L980.6 268.6 L983.4 268.9 L986.3 269.5 L989.1 270.2 L992.0 271.1 L994.8 272.1 L997.7 273.3 L1000.5 274.6 L1003.4 276.0 L1006.2 277.5 L1009.1 279.0 L1012.0 280.6 L1014.8 282.3 L1017.7 284.1 L1020.5 285.8 L1023.4 287.7 L1026.2 289.5 L1029.1 291.4 L1031.9 293.2 L1034.8 295.1 L1037.6 297.0 L1040.5 299.0 L1043.3 300.9 L1046.2 302.8 L1049.1 304.8 L1051.9 306.7 L1054.8 308.7 L1057.6 310.7 L1060.5 312.7 L1063.3 314.7 L1066.2 316.8 L1069.0 318.9 L1071.9 321.0 L1074.7 323.2 L1077.6 325.5 L1080.4 327.8 L1083.3 330.2 L1086.1 332.7 L1089.0 335.3 L1091.9 338.0 L1094.7 340.8 L1097.6 343.8 L1100.4 347.0 L1103.3 350.3 L1106.1 353.9 L1109.0 357.6 L1111.8 361.6 L1114.7 365.9 L1117.5 370.4 L1120.4 375.2 L1123.2 380.3 L1126.1 385.8 L1129.0 391.6 L1131.8 397.9 L1134.7 404.5 L1137.5 411.6" stroke="#7a8fa6" stroke-width="1.1" fill="none"/><path d="M966.3 301.5 L968.8 300.8 L971.3 300.3 L973.9 300.1 L976.4 300.0 L978.9 300.1 L981.4 300.4 L983.9 300.8 L986.5 301.4 L989.0 302.1 L991.5 302.9 L994.0 303.8 L996.5 304.8 L999.1 305.9 L1001.6 307.1 L1004.1 308.3 L1006.6 309.6 L1009.2 310.9 L1011.7 312.2 L1014.2 313.6 L1016.7 315.0 L1019.2 316.5 L1021.8 317.9 L1024.3 319.4 L1026.8 320.9 L1029.3 322.4 L1031.8 323.8 L1034.4 325.4 L1036.9 326.9 L1039.4 328.4 L1041.9 329.9 L1044.4 331.4 L1047.0 333.0 L1049.5 334.6 L1052.0 336.1 L1054.5 337.7 L1057.0 339.4 L1059.6 341.1 L1062.1 342.8 L1064.6 344.5 L1067.1 346.3 L1069.6 348.2 L1072.2 350.2 L1074.7 352.2 L1077.2 354.3 L1079.7 356.5 L1082.2 358.9 L1084.8 361.3 L1087.3 363.9 L1089.8 366.7 L1092.3 369.6 L1094.9 372.7 L1097.4 376.0 L1099.9 379.6 L1102.4 383.3 L1104.9 387.3 L1107.5 391.6 L1110.0 396.1 L1112.5 401.0 L1115.0 406.2 L1117.5 411.7" stroke="#f04a4a" stroke-width="1.1" fill="none"/><path d="M966.3 349.0 L968.2 348.6 L970.1 348.3 L972.0 348.2 L973.9 348.1 L975.8 348.2 L977.7 348.4 L979.6 348.6 L981.5 348.9 L983.4 349.3 L985.3 349.8 L987.3 350.3 L989.2 350.9 L991.1 351.5 L993.0 352.2 L994.9 352.9 L996.8 353.6 L998.7 354.3 L1000.6 355.1 L1002.5 355.9 L1004.4 356.7 L1006.3 357.5 L1008.2 358.4 L1010.1 359.2 L1012.0 360.1 L1013.9 360.9 L1015.8 361.8 L1017.7 362.6 L1019.6 363.5 L1021.5 364.3 L1023.4 365.2 L1025.3 366.1 L1027.2 367.0 L1029.2 367.9 L1031.1 368.8 L1033.0 369.7 L1034.9 370.6 L1036.8 371.6 L1038.7 372.6 L1040.6 373.6 L1042.5 374.6 L1044.4 375.7 L1046.3 376.8 L1048.2 377.9 L1050.1 379.1 L1052.0 380.4 L1053.9 381.7 L1055.8 383.2 L1057.7 384.6 L1059.6 386.2 L1061.5 387.9 L1063.4 389.7 L1065.3 391.6 L1067.2 393.6 L1069.1 395.7 L1071.1 398.0 L1073.0 400.4 L1074.9 403.0 L1076.8 405.8 L1078.7 408.8 L1080.6 411.9" stroke="#7a8fa6" stroke-width="1.1" fill="none"/><circle cx="1018" cy="312.5" r="4.6" fill="#f5e400" stroke="#0a7d12" stroke-width="2.2"/></svg>
<div class="t" style="left:955.00px;top:408.62px;font-size:7.3px;color:#666;font-weight:normal;transform:translateX(-100%);">0</div>
<div class="t" style="left:955.00px;top:371.94px;font-size:7.3px;color:#666;font-weight:normal;transform:translateX(-100%);">2.5k</div>
<div class="t" style="left:955.00px;top:335.26px;font-size:7.3px;color:#666;font-weight:normal;transform:translateX(-100%);">5k</div>
<div class="t" style="left:955.00px;top:298.58px;font-size:7.3px;color:#666;font-weight:normal;transform:translateX(-100%);">7.5k</div>
<div class="t" style="left:955.00px;top:261.90px;font-size:7.3px;color:#666;font-weight:normal;transform:translateX(-100%);">10k</div>
<div class="t" style="left:955.00px;top:225.22px;font-size:7.3px;color:#666;font-weight:normal;transform:translateX(-100%);">12.5k</div>
<div class="t" style="left:955.00px;top:188.54px;font-size:7.3px;color:#666;font-weight:normal;transform:translateX(-100%);">15k</div>
<div class="t" style="left:955.00px;top:151.86px;font-size:7.3px;color:#666;font-weight:normal;transform:translateX(-100%);">17.5k</div>
<div class="t" style="left:966.50px;top:417.92px;font-size:7.3px;color:#666;font-weight:normal;transform:translateX(-50%);">0</div>
<div class="t" style="left:1037.30px;top:417.92px;font-size:7.3px;color:#666;font-weight:normal;transform:translateX(-50%);">2.5k</div>
<div class="t" style="left:1107.60px;top:417.92px;font-size:7.3px;color:#666;font-weight:normal;transform:translateX(-50%);">5k</div>
<div class="t" style="left:1171.50px;top:417.92px;font-size:7.3px;color:#666;font-weight:normal;transform:translateX(-50%);">7.5k</div>
<div class="t" style="left:1072.30px;top:431.12px;font-size:7.5px;color:#666;font-weight:normal;transform:translateX(-50%);">Flow Rate, BFPD</div>
<div class="t" style="left:925.5px;top:284.5px;font-size:8px;color:#666;transform:translate(-50%,-50%) rotate(-90deg)">TDH, Ft</div>
<div class="t" style="left:980.30px;top:458.11px;font-size:11px;color:#333;font-weight:normal;transform:translateX(-50%);">PIP vs BFPD</div>
<svg class="a" style="left:1030px;top:461.5px" width="11" height="8"><path d="M0 1 H10.5 M0 4 H10.5 M0 7 H10.5" stroke="#555" stroke-width="1.3"/></svg>
<svg class="a" style="left:0;top:0" width="1219" height="656"><path d="M962.8 485.5 H1041.8" stroke="#e6e6e6" stroke-width="1"/><path d="M962.8 520.5 H1041.8" stroke="#e6e6e6" stroke-width="1"/><path d="M962.8 555.5 H1041.8" stroke="#e6e6e6" stroke-width="1"/><path d="M962.8 590.5 H1041.8" stroke="#e6e6e6" stroke-width="1"/><path d="M1028.6 485.5 V590.5" stroke="#e6e6e6" stroke-width="1"/><path d="M962.8 485.5 V590.5" stroke="#e6e6e6" stroke-width="1"/><path d="M962.8 590.5 H1041.8" stroke="#ccd6eb" stroke-width="1"/><path d="M962.8 497.6 L963.9 498.4 L964.9 499.2 L965.9 499.9 L967.0 500.7 L968.0 501.5 L969.0 502.3 L970.1 503.0 L971.1 503.8 L972.1 504.6 L973.1 505.4 L974.1 506.1 L975.0 506.9 L976.0 507.7 L977.0 508.4 L977.9 509.2 L978.9 510.0 L979.9 510.8 L980.8 511.5 L981.7 512.3 L982.7 513.1 L983.6 513.9 L984.5 514.6 L985.4 515.4 L986.3 516.2 L987.2 517.0 L988.1 517.7 L989.0 518.5 L989.9 519.3 L990.7 520.1 L991.6 520.8 L992.4 521.6 L993.3 522.4 L994.1 523.2 L995.0 523.9 L995.8 524.7 L996.6 525.5 L997.4 526.3 L998.2 527.0 L999.0 527.8 L999.8 528.6 L1000.6 529.3 L1001.4 530.1 L1002.2 530.9 L1003.0 531.7 L1003.7 532.4 L1004.5 533.2 L1005.2 534.0 L1006.0 534.8 L1006.7 535.5 L1007.4 536.3 L1008.2 537.1 L1008.9 537.9 L1009.6 538.6 L1010.3 539.4 L1011.0 540.2 L1011.7 541.0 L1012.3 541.7 L1013.0 542.5 L1013.7 543.3 L1014.3 544.1 L1015.0 544.8 L1015.7 545.6 L1016.3 546.4 L1016.9 547.2 L1017.6 547.9 L1018.2 548.7 L1018.8 549.5 L1019.4 550.2 L1020.0 551.0 L1020.6 551.8 L1021.2 552.6 L1021.8 553.3 L1022.3 554.1 L1022.9 554.9 L1023.5 555.7 L1024.0 556.4 L1024.6 557.2 L1025.1 558.0 L1025.6 558.8 L1026.2 559.5 L1026.7 560.3 L1027.2 561.1 L1027.7 561.9 L1028.2 562.6 L1028.7 563.4 L1029.2 564.2 L1029.7 565.0 L1030.2 565.7 L1030.6 566.5 L1031.1 567.3 L1031.5 568.1 L1032.0 568.8 L1032.4 569.6 L1032.9 570.4 L1033.3 571.1 L1033.7 571.9 L1034.1 572.7 L1034.5 573.5 L1034.9 574.2 L1035.3 575.0 L1035.7 575.8 L1036.1 576.6 L1036.5 577.3 L1036.8 578.1 L1037.2 578.9 L1037.5 579.7 L1037.9 580.4 L1038.2 581.2 L1038.6 582.0 L1038.9 582.8 L1039.2 583.5 L1039.5 584.3 L1039.8 585.1 L1040.1 585.9 L1040.4 586.6 L1040.7 587.4 L1041.0 588.2 L1041.3 589.0 L1041.5 589.7 L1041.8 590.5" stroke="#6aaee8" stroke-width="1.2" fill="none"/><path d="M962.8 553.6 H1041.8" stroke="#555" stroke-width="1"/><circle cx="1022" cy="553.6" r="2.2" fill="#333"/><rect x="972.0" y="504.2" width="4.6" height="4.6" fill="#7ee07a"/></svg>
<div class="t" style="left:953.80px;top:481.92px;font-size:7.3px;color:#666;font-weight:normal;transform:translateX(-100%);">1500</div>
<div class="t" style="left:953.80px;top:516.92px;font-size:7.3px;color:#666;font-weight:normal;transform:translateX(-100%);">1000</div>
<div class="t" style="left:953.80px;top:551.92px;font-size:7.3px;color:#666;font-weight:normal;transform:translateX(-100%);">500</div>
<div class="t" style="left:953.80px;top:586.92px;font-size:7.3px;color:#666;font-weight:normal;transform:translateX(-100%);">0</div>
<div class="t" style="left:962.80px;top:596.82px;font-size:7.3px;color:#666;font-weight:normal;transform:translateX(-50%);">0</div>
<div class="t" style="left:1028.60px;top:596.82px;font-size:7.3px;color:#666;font-weight:normal;transform:translateX(-50%);">2k</div>
<div class="t" style="left:1002.80px;top:608.42px;font-size:7.3px;color:#666;font-weight:normal;transform:translateX(-50%);">BFPD</div>
<div class="t" style="left:925.5px;top:537.8px;font-size:7.4px;color:#666;transform:translate(-50%,-50%) rotate(-90deg)">PIP [psi]</div>
<div class="t" style="left:969.30px;top:544.68px;font-size:8.0px;color:#222;font-weight:normal;text-shadow:0 0 1px #fff,0 0 2px #fff">Current PIP: 529.2</div>
<div class="t" style="left:1119.20px;top:458.11px;font-size:11px;color:#333;font-weight:normal;transform:translateX(-50%);">PWF vs BFPD</div>
<svg class="a" style="left:1169px;top:461.5px" width="11" height="8"><path d="M0 1 H10.5 M0 4 H10.5 M0 7 H10.5" stroke="#555" stroke-width="1.3"/></svg>
<svg class="a" style="left:0;top:0" width="1219" height="656"><path d="M1101.8 485.5 H1181" stroke="#e6e6e6" stroke-width="1"/><path d="M1101.8 520.5 H1181" stroke="#e6e6e6" stroke-width="1"/><path d="M1101.8 555.5 H1181" stroke="#e6e6e6" stroke-width="1"/><path d="M1101.8 590.5 H1181" stroke="#e6e6e6" stroke-width="1"/><path d="M1167.6 485.5 V590.5" stroke="#e6e6e6" stroke-width="1"/><path d="M1101.8 485.5 V590.5" stroke="#e6e6e6" stroke-width="1"/><path d="M1101.8 590.5 H1181" stroke="#ccd6eb" stroke-width="1"/><path d="M1101.8 488.7 L1103.0 489.6 L1104.2 490.4 L1105.3 491.3 L1106.5 492.1 L1107.6 493.0 L1108.8 493.8 L1109.9 494.7 L1111.0 495.5 L1112.1 496.4 L1113.2 497.2 L1114.3 498.0 L1115.4 498.9 L1116.5 499.7 L1117.5 500.6 L1118.6 501.4 L1119.7 502.3 L1120.7 503.1 L1121.7 504.0 L1122.8 504.8 L1123.8 505.7 L1124.8 506.5 L1125.8 507.4 L1126.8 508.2 L1127.8 509.1 L1128.8 509.9 L1129.7 510.8 L1130.7 511.6 L1131.6 512.5 L1132.6 513.3 L1133.5 514.2 L1134.5 515.0 L1135.4 515.9 L1136.3 516.7 L1137.2 517.6 L1138.1 518.4 L1139.0 519.3 L1139.8 520.1 L1140.7 521.0 L1141.6 521.8 L1142.4 522.6 L1143.3 523.5 L1144.1 524.3 L1144.9 525.2 L1145.7 526.0 L1146.6 526.9 L1147.4 527.7 L1148.1 528.6 L1148.9 529.4 L1149.7 530.3 L1150.5 531.1 L1151.2 532.0 L1152.0 532.8 L1152.7 533.7 L1153.5 534.5 L1154.2 535.4 L1154.9 536.2 L1155.6 537.1 L1156.3 537.9 L1157.0 538.8 L1157.7 539.6 L1158.4 540.5 L1159.0 541.3 L1159.7 542.2 L1160.3 543.0 L1161.0 543.9 L1161.6 544.7 L1162.2 545.5 L1162.9 546.4 L1163.5 547.2 L1164.1 548.1 L1164.7 548.9 L1165.2 549.8 L1165.8 550.6 L1166.4 551.5 L1166.9 552.3 L1167.5 553.2 L1168.0 554.0 L1168.6 554.9 L1169.1 555.7 L1169.6 556.6 L1170.1 557.4 L1170.6 558.3 L1171.1 559.1 L1171.6 560.0 L1172.0 560.8 L1172.5 561.7 L1173.0 562.5 L1173.4 563.4 L1173.8 564.2 L1174.3 565.1 L1174.7 565.9 L1175.1 566.8 L1175.5 567.6 L1175.9 568.4 L1176.3 569.3 L1176.7 570.1 L1177.1 571.0 L1177.4 571.8 L1177.8 572.7 L1178.1 573.5 L1178.5 574.4 L1178.8 575.2 L1179.1 576.1 L1179.4 576.9 L1179.7 577.8 L1180.0 578.6 L1180.3 579.5 L1180.6 580.3 L1180.9 581.2" stroke="#6aaee8" stroke-width="1.2" fill="none"/><path d="M1101.8 544.4 H1181" stroke="#555" stroke-width="1"/><circle cx="1161.4" cy="544.4" r="2.2" fill="#333"/><rect x="1111.3" y="494.7" width="4.6" height="4.6" fill="#7ee07a"/></svg>
<div class="t" style="left:1092.80px;top:481.92px;font-size:7.3px;color:#666;font-weight:normal;transform:translateX(-100%);">1500</div>
<div class="t" style="left:1092.80px;top:516.92px;font-size:7.3px;color:#666;font-weight:normal;transform:translateX(-100%);">1000</div>
<div class="t" style="left:1092.80px;top:551.92px;font-size:7.3px;color:#666;font-weight:normal;transform:translateX(-100%);">500</div>
<div class="t" style="left:1092.80px;top:586.92px;font-size:7.3px;color:#666;font-weight:normal;transform:translateX(-100%);">0</div>
<div class="t" style="left:1101.80px;top:596.82px;font-size:7.3px;color:#666;font-weight:normal;transform:translateX(-50%);">0</div>
<div class="t" style="left:1167.60px;top:596.82px;font-size:7.3px;color:#666;font-weight:normal;transform:translateX(-50%);">2k</div>
<div class="t" style="left:1141.90px;top:608.42px;font-size:7.3px;color:#666;font-weight:normal;transform:translateX(-50%);">BFPD</div>
<div class="t" style="left:1064.9px;top:537.8px;font-size:7.4px;color:#666;transform:translate(-50%,-50%) rotate(-90deg)">PWF [psi]</div>
<div class="t" style="left:1108.70px;top:535.48px;font-size:8.0px;color:#222;font-weight:normal;text-shadow:0 0 1px #fff,0 0 2px #fff">Current PWF: 662.2</div>
<div class="a" style="left:1173.5px;top:595.5px;width:35px;height:35px;border-radius:50%;background:#1c1c1c;box-shadow:0 2px 4px rgba(0,0,0,.3)"></div>
<svg class="a" style="left:1187px;top:609px" width="8" height="8"><path d="M4 0.5 V7.5 M0.5 4 H7.5" stroke="#fff" stroke-width="1.3"/></svg>
<div class="t" style="left:455.00px;top:645.09px;font-size:6.95px;color:#666;font-weight:normal;">Copyright © 2022 All rights reserved to Numerica Ltda, Powered by <span style="color:#222">NUMERICA LTDA</span>&nbsp;&nbsp;&nbsp;<span style="color:#222">DISCLAIMER</span></div>
</body></html>
